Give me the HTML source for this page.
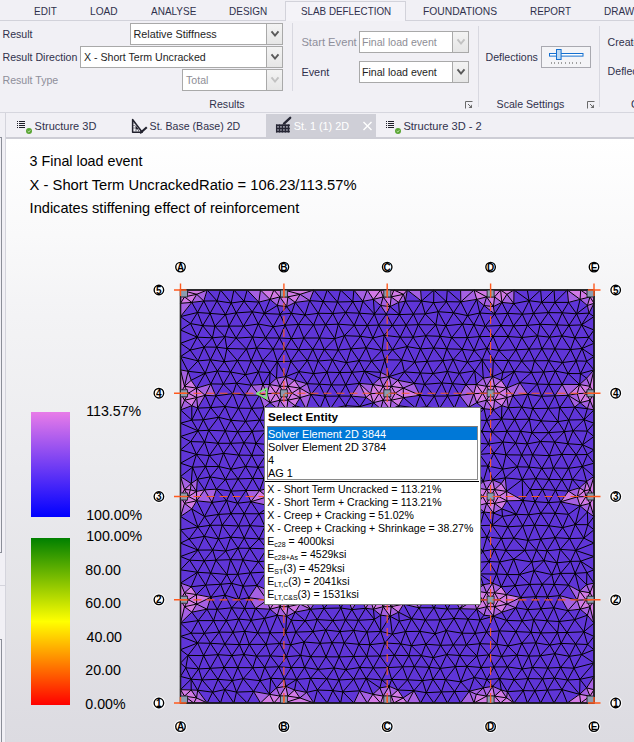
<!DOCTYPE html>
<html><head><meta charset="utf-8"><style>
html,body{margin:0;padding:0}
body{width:634px;height:742px;overflow:hidden;position:relative;background:#f1f0f5;font-family:"Liberation Sans",sans-serif}
.a{position:absolute}
.t{position:absolute;white-space:nowrap}
sub{font-size:7px;vertical-align:baseline;position:relative;top:2px}
</style></head><body>
<div class="a" style="left:0px;top:20px;width:634px;height:1px;background:#d2d2da"></div>
<div class="a" style="left:285px;top:1px;width:121px;height:20px;background:#f4f3f8;border:1px solid #d2d2da;border-bottom:none;box-sizing:border-box"></div>
<div class="t " style="left:33.50px;top:5.02px;font-size:11.20px;line-height:13px;color:#30304c;transform:scaleX(0.893);transform-origin:0 0;">EDIT</div>
<div class="t " style="left:89.90px;top:5.02px;font-size:11.20px;line-height:13px;color:#30304c;transform:scaleX(0.906);transform-origin:0 0;">LOAD</div>
<div class="t " style="left:151.40px;top:5.02px;font-size:11.20px;line-height:13px;color:#30304c;transform:scaleX(0.893);transform-origin:0 0;">ANALYSE</div>
<div class="t " style="left:229.20px;top:5.02px;font-size:11.20px;line-height:13px;color:#30304c;transform:scaleX(0.893);transform-origin:0 0;">DESIGN</div>
<div class="t " style="left:300.60px;top:5.02px;font-size:11.20px;line-height:13px;color:#30304c;transform:scaleX(0.879);transform-origin:0 0;">SLAB DEFLECTION</div>
<div class="t " style="left:423.00px;top:5.02px;font-size:11.20px;line-height:13px;color:#30304c;transform:scaleX(0.920);transform-origin:0 0;">FOUNDATIONS</div>
<div class="t " style="left:530.30px;top:5.02px;font-size:11.20px;line-height:13px;color:#30304c;transform:scaleX(0.884);transform-origin:0 0;">REPORT</div>
<div class="t " style="left:604.30px;top:5.02px;font-size:11.20px;line-height:13px;color:#30304c;transform:scaleX(0.893);transform-origin:0 0;">DRAW</div>
<div class="a" style="left:0px;top:112px;width:634px;height:1px;background:#d6d6de"></div>
<div class="t " style="left:2.50px;top:27.73px;font-size:10.60px;line-height:13px;color:#30304c;">Result</div>
<div class="t " style="left:2.50px;top:50.73px;font-size:10.60px;line-height:13px;color:#30304c;">Result Direction</div>
<div class="t " style="left:2.50px;top:73.73px;font-size:10.60px;line-height:13px;color:#8e8e9a;">Result Type</div>
<div class="a" style="left:130px;top:23px;width:153px;height:22px;background:#fff;border:1px solid #a9a9a9;box-sizing:border-box"></div><div class="a" style="left:266px;top:23px;width:17px;height:22px;background:linear-gradient(#f3f3f3,#e6e6e6);border:1px solid #a9a9a9;box-sizing:border-box"></div><svg class="a" style="left:269.5px;top:30.0px" width="10" height="8" viewBox="0 0 10 8"><path d="M1.5 1.3 L5 5.6 L8.5 1.3" fill="none" stroke="#5a5a5a" stroke-width="1.9"/></svg><div class="t " style="left:133.50px;top:28.16px;font-size:10.80px;line-height:13px;color:#1e1e1e;">Relative Stiffness</div>
<div class="a" style="left:80px;top:46px;width:203px;height:22px;background:#fff;border:1px solid #a9a9a9;box-sizing:border-box"></div><div class="a" style="left:266px;top:46px;width:17px;height:22px;background:linear-gradient(#f3f3f3,#e6e6e6);border:1px solid #a9a9a9;box-sizing:border-box"></div><svg class="a" style="left:269.5px;top:53.0px" width="10" height="8" viewBox="0 0 10 8"><path d="M1.5 1.3 L5 5.6 L8.5 1.3" fill="none" stroke="#5a5a5a" stroke-width="1.9"/></svg><div class="t " style="left:84.00px;top:51.23px;font-size:10.60px;line-height:13px;color:#1e1e1e;">X - Short Term Uncracked</div>
<div class="a" style="left:182px;top:69px;width:101px;height:22px;background:#fff;border:1px solid #a9a9a9;box-sizing:border-box"></div><div class="a" style="left:266px;top:69px;width:17px;height:22px;background:linear-gradient(#f3f3f3,#e6e6e6);border:1px solid #a9a9a9;box-sizing:border-box"></div><svg class="a" style="left:269.5px;top:76.0px" width="10" height="8" viewBox="0 0 10 8"><path d="M1.5 1.3 L5 5.6 L8.5 1.3" fill="none" stroke="#c2c2c2" stroke-width="1.9"/></svg><div class="t " style="left:186.00px;top:74.23px;font-size:10.60px;line-height:13px;color:#8e8e96;">Total</div>
<div class="a" style="left:292px;top:23px;width:1px;height:68px;background:#d8d8e0"></div>
<div class="t " style="left:209.30px;top:97.83px;font-size:10.60px;line-height:13px;color:#30304c;">Results</div>
<div class="t " style="left:301.40px;top:36.02px;font-size:11.20px;line-height:13px;color:#8e8e9a;">Start Event</div>
<div class="t " style="left:301.40px;top:66.02px;font-size:10.90px;line-height:13px;color:#30304c;">Event</div>
<div class="a" style="left:359px;top:31px;width:110px;height:22px;background:#fff;border:1px solid #a9a9a9;box-sizing:border-box"></div><div class="a" style="left:452px;top:31px;width:17px;height:22px;background:linear-gradient(#f3f3f3,#e6e6e6);border:1px solid #a9a9a9;box-sizing:border-box"></div><svg class="a" style="left:455.5px;top:38.0px" width="10" height="8" viewBox="0 0 10 8"><path d="M1.5 1.3 L5 5.6 L8.5 1.3" fill="none" stroke="#c2c2c2" stroke-width="1.9"/></svg><div class="t " style="left:362.00px;top:36.23px;font-size:10.60px;line-height:13px;color:#8e8e96;">Final load event</div>
<div class="a" style="left:359px;top:61px;width:110px;height:22px;background:#fff;border:1px solid #a9a9a9;box-sizing:border-box"></div><div class="a" style="left:452px;top:61px;width:17px;height:22px;background:linear-gradient(#f3f3f3,#e6e6e6);border:1px solid #a9a9a9;box-sizing:border-box"></div><svg class="a" style="left:455.5px;top:68.0px" width="10" height="8" viewBox="0 0 10 8"><path d="M1.5 1.3 L5 5.6 L8.5 1.3" fill="none" stroke="#5a5a5a" stroke-width="1.9"/></svg><div class="t " style="left:362.00px;top:66.23px;font-size:10.60px;line-height:13px;color:#1e1e1e;">Final load event</div>
<svg class="a" style="left:465px;top:101px" width="8" height="8" viewBox="0 0 8 8"><path d="M0.5 7.5V0.5H7.5" fill="none" stroke="#6a6a6a" stroke-width="1"/><path d="M3 3L5.5 5.5" stroke="#6a6a6a" stroke-width="1"/><path d="M7 3.5V7H3.5Z" fill="#6a6a6a"/></svg>
<div class="a" style="left:478px;top:26px;width:1px;height:81px;background:#d8d8e0"></div>
<div class="t " style="left:485.50px;top:51.23px;font-size:10.60px;line-height:13px;color:#30304c;">Deflections</div>
<div class="a" style="left:541px;top:46px;width:50px;height:22px;border:1px solid #a9a9b0;box-sizing:border-box;background:#f4f4f7"></div>
<svg class="a" style="left:541px;top:46px" width="50" height="22" viewBox="0 0 50 22"><rect x="8.5" y="7.5" width="33.5" height="2.6" fill="#fff" stroke="#1570d0" stroke-width="1"/><rect x="15.5" y="3.5" width="4.6" height="10" fill="#bcd8f2" stroke="#1570d0" stroke-width="1"/><path d="M10.5 16v2M13.5 16v2M17.5 16v2M20.5 16v2M24.5 16v2M28.5 16v2M31.5 16v2M35.5 16v2M39.5 16v2" stroke="#a0a0a0" stroke-width="1"/></svg>
<div class="t " style="left:496.60px;top:97.83px;font-size:10.60px;line-height:13px;color:#30304c;">Scale Settings</div>
<svg class="a" style="left:587px;top:101px" width="8" height="8" viewBox="0 0 8 8"><path d="M0.5 7.5V0.5H7.5" fill="none" stroke="#6a6a6a" stroke-width="1"/><path d="M3 3L5.5 5.5" stroke="#6a6a6a" stroke-width="1"/><path d="M7 3.5V7H3.5Z" fill="#6a6a6a"/></svg>
<div class="a" style="left:599px;top:26px;width:1px;height:81px;background:#d8d8e0"></div>
<div class="t " style="left:607.60px;top:35.73px;font-size:10.60px;line-height:13px;color:#30304c;">Create</div>
<div class="t " style="left:607.60px;top:65.43px;font-size:10.60px;line-height:13px;color:#30304c;">Deflections</div>
<div class="t " style="left:631.00px;top:97.83px;font-size:10.60px;line-height:13px;color:#30304c;">Charts</div>
<div class="a" style="left:0px;top:137px;width:634px;height:2px;background:#cdcdd5"></div>
<div class="a" style="left:266px;top:114px;width:110px;height:23px;background:#cfcfd7"></div>
<svg class="a" style="left:17px;top:121px" width="16" height="14" viewBox="0 0 16 14"><path d="M0 0.5h1M0 2.5h1M0 4.5h1M0 6.5h1M2 0.5h6M2 2.5h6M2 4.5h6M2 6.5h6" stroke="#1e1e28" stroke-width="1"/><circle cx="12" cy="10" r="3" fill="#5aa535"/><path d="M10.7 10.1l1 0.9 1.6-1.7" stroke="#d8f0c8" stroke-width="0.9" fill="none"/></svg>
<div class="t " style="left:34.60px;top:119.69px;font-size:11.00px;line-height:13px;color:#30304c;">Structure 3D</div>
<svg class="a" style="left:128px;top:115px" width="22" height="21" viewBox="0 0 22 21"><path d="M4.6 4.5V17.3H14.2Z" fill="none" stroke="#22222e" stroke-width="1.5" stroke-linejoin="round"/><path d="M7.5 10.2V14.5H11Z" fill="#22222e"/><path d="M5.5 8h1M5.5 10.5h1M5.5 13h1M8 16.3v-1M10.5 16.3v-1" stroke="#22222e" stroke-width="0.9"/><path d="M12 18.2L18.8 12.2" stroke="#22222e" stroke-width="2.2"/></svg>
<div class="t " style="left:149.60px;top:119.83px;font-size:10.60px;line-height:13px;color:#30304c;">St. Base (Base) 2D</div>
<svg class="a" style="left:270px;top:114px" width="25" height="22" viewBox="0 0 25 22"><rect x="6" y="10.5" width="13.8" height="8" fill="#9a9aa6"/><path d="M6 11.2h13.8M6 14.4h13.8M6 17.5h13.8" stroke="#262634" stroke-width="1.5"/><path d="M6.6 10.5v8M9.5 10.5v8M12.4 10.5v8M15.4 10.5v8M18.4 10.5v8" stroke="#262634" stroke-width="1.3"/><path d="M14 9.6L20.2 3.8" stroke="#262634" stroke-width="2.3" stroke-linecap="round"/></svg>
<div class="t " style="left:293.80px;top:119.76px;font-size:10.80px;line-height:13px;color:#ffffff;">St. 1 (1) 2D</div>
<svg class="a" style="left:362px;top:121px" width="11" height="10" viewBox="0 0 11 10"><path d="M1.5 1L9.5 9M9.5 1L1.5 9" stroke="#fff" stroke-width="1.4"/></svg>
<svg class="a" style="left:386px;top:121px" width="16" height="14" viewBox="0 0 16 14"><path d="M0 0.5h1M0 2.5h1M0 4.5h1M0 6.5h1M2 0.5h6M2 2.5h6M2 4.5h6M2 6.5h6" stroke="#1e1e28" stroke-width="1"/><circle cx="12" cy="10" r="3" fill="#5aa535"/><path d="M10.7 10.1l1 0.9 1.6-1.7" stroke="#d8f0c8" stroke-width="0.9" fill="none"/></svg>
<div class="t " style="left:403.40px;top:119.65px;font-size:11.10px;line-height:13px;color:#30304c;">Structure 3D - 2</div>
<div class="a" style="left:0px;top:113px;width:6px;height:629px;background:#f1f0f5"></div>
<div class="a" style="left:5px;top:113px;width:1px;height:629px;background:#d4d4dc"></div>
<div class="a" style="left:0px;top:137px;width:2px;height:416px;border-right:1px solid #8b8e98;border-bottom:1px solid #8b8e98;border-top:1px solid #8b8e98;box-sizing:border-box"></div>
<div class="a" style="left:0px;top:585px;width:5px;height:1px;background:#d4d4dc"></div>
<div class="a" style="left:0px;top:639px;width:2px;height:103px;border-right:1px solid #8b8e98;border-top:1px solid #8b8e98;box-sizing:border-box"></div>
<div class="a" style="left:6px;top:139px;width:628px;height:603px;background:linear-gradient(#ffffff 0px,#f9f9fa 96px,#f3f3f5 176px,#ebebee 331px,#dcdbe1 603px)"></div>
<div class="t " style="left:29.60px;top:152.85px;font-size:14.30px;line-height:17px;color:#000;">3 Final load event</div>
<div class="t " style="left:29.60px;top:176.29px;font-size:14.75px;line-height:18px;color:#000;">X - Short Term UncrackedRatio = 106.23/113.57%</div>
<div class="t " style="left:29.60px;top:199.04px;font-size:14.60px;line-height:18px;color:#000;">Indicates stiffening effect of reinforcement</div>
<div class="a" style="left:31px;top:412px;width:39px;height:105px;background:linear-gradient(#e87ce8,#0000ff)"></div>
<div class="a" style="left:31px;top:538px;width:39px;height:167px;background:linear-gradient(#008000 0%,#ffff00 50%,#ff8000 75%,#ff0000 100%)"></div>
<div class="t " style="left:86.20px;top:402.58px;font-size:14.20px;line-height:17px;color:#000;">113.57%</div>
<div class="t " style="left:86.20px;top:507.48px;font-size:14.20px;line-height:17px;color:#000;">100.00%</div>
<div class="t " style="left:86.20px;top:528.38px;font-size:14.20px;line-height:17px;color:#000;">100.00%</div>
<div class="t " style="left:85.30px;top:562.18px;font-size:14.20px;line-height:17px;color:#000;">80.00</div>
<div class="t " style="left:85.30px;top:594.58px;font-size:14.20px;line-height:17px;color:#000;">60.00</div>
<div class="t " style="left:86.50px;top:629.18px;font-size:14.20px;line-height:17px;color:#000;">40.00</div>
<div class="t " style="left:85.30px;top:662.48px;font-size:14.20px;line-height:17px;color:#000;">20.00</div>
<div class="t " style="left:85.30px;top:695.78px;font-size:14.20px;line-height:17px;color:#000;">0.00%</div>
<svg class="a" style="left:0;top:0" width="634" height="742"><path fill="#5f35d7" stroke="#5f35d7" stroke-width="0.3" d="M419.4 559.5L406.2 561.8L412.6 550.2ZM358.3 620.3L353.8 630.5L345.4 619.9ZM334.4 596L319 596.4L324.4 585.3ZM594 623.1L583.9 631.8L587.4 615.2ZM554.6 442L549.4 455.7L540.4 441.5ZM549.4 455.7L554.6 442L561.8 454.4ZM180.5 436.5L180.5 423.2L198 430.8ZM252.2 431.3L245.5 421.3L259.6 420.1ZM245.5 421.3L251.7 408.3L259.6 420.1ZM515.6 443.1L521.6 455L506 454.8ZM413.3 456.1L406.1 467.3L400.6 454.5ZM502.6 469.1L505.3 477.9L492.6 479.8ZM487.9 466L502.6 469.1L492.6 479.8ZM428 503.5L433.3 489L439.4 501.5ZM433.3 489L428 503.5L420.2 490.6ZM476.3 487.8L461.1 489.9L470.3 478ZM393.7 467.7L406.1 467.3L397.9 483.5ZM386.5 454.6L393.7 467.7L378.4 466.9ZM406.1 467.3L393.7 467.7L400.6 454.5ZM393.7 467.7L386.5 454.6L400.6 454.5ZM372 479.1L378.4 466.9L379.9 481.4ZM373.8 433.5L381 418.4L386.1 431.3ZM381 418.4L373.8 433.5L365.9 420.5ZM420.6 290L433.9 290L421.5 301.1ZM529.1 300.7L540.6 290L541.7 302.3ZM514 290L529.1 300.7L513.8 303.6ZM420.5 348.9L427.2 361.3L414.8 362.2ZM453.1 359.6L467.4 362.1L459.4 373.3ZM420.5 348.9L433.7 348L427.2 361.3ZM345.6 312.6L352.8 301.6L359.4 313.2ZM392.4 325.4L400.2 337.2L384.2 335.3ZM374.4 314.2L367.4 325.4L359.4 313.2ZM295.2 405.7L300.1 397.6L306.1 409.1ZM332.8 313.5L345.6 312.6L338.3 324.2ZM318.3 313.3L305 315L309.7 300.6ZM305 315L318.3 313.3L313.6 324.9ZM265.6 337.9L258.3 324L273.2 326.7ZM236.5 383.2L230.6 372L245.5 374.7ZM210.4 359.8L217.4 371L205.2 373.2ZM230.6 372L237.4 360.6L245.5 374.7ZM180.5 569.8L189.6 560.2L197.5 572.3ZM180.5 583.1L180.5 569.8L197.5 572.3ZM180.5 476.5L180.5 463.2L192.5 467.2ZM252.2 431.3L237.7 431.8L245.5 421.3ZM225.2 430.9L237.7 431.8L230.7 443.3ZM196.4 454.4L180.5 463.2L180.5 449.9ZM180.5 463.2L196.4 454.4L192.5 467.2ZM209.3 455.6L196.4 454.4L204.6 442ZM180.5 529.8L180.5 516.5L197.9 527ZM359.6 690.8L353.7 679.1L366.2 678.6ZM359.8 667.5L373.3 667.9L366.2 678.6ZM353.7 679.1L359.8 667.5L366.2 678.6ZM388.2 667.6L373.3 667.9L379.9 656ZM388.2 667.6L402.6 666.8L391.7 679.4ZM372.9 694.3L359.6 690.8L366.2 678.6ZM397.9 690L389.2 686.3L391.7 679.4ZM419.8 631.3L425.8 644.2L411.4 645.7ZM394.4 655.3L388.2 667.6L379.9 656ZM388.2 667.6L394.4 655.3L402.6 666.8ZM411.5 618.8L419 607.8L425.2 620ZM419.8 631.3L411.5 618.8L425.2 620ZM332.8 690.6L326.8 678.8L339 680ZM318.1 669.4L310.5 678.3L304.6 667.5ZM318.1 669.4L326.8 678.8L310.5 678.3ZM296.6 679.4L310.5 678.3L306.6 692.4ZM310.5 678.3L296.6 679.4L304.6 667.5ZM239.4 644.6L243.8 654.6L231.9 655.6ZM320.2 408.2L311.9 419.8L306.1 409.1ZM325.9 421L320.2 408.2L330.4 408.9ZM320.2 408.2L325.9 421L311.9 419.8ZM317.7 572.2L330.8 574.5L324.4 585.3ZM330.8 574.5L339 585.9L324.4 585.3ZM339 585.9L334.4 596L324.4 585.3ZM347 595.6L340.9 608L334.4 596ZM347 595.6L339 585.9L356.1 585.8ZM339 585.9L347 595.6L334.4 596ZM196.4 454.4L205.6 466.6L192.5 467.2ZM205.6 466.6L196.4 454.4L209.3 455.6ZM216.4 489.2L226.6 500.6L212 502.4ZM540.6 290L554 290L541.7 302.3ZM579.6 694.3L567.3 703L562 689.6ZM577.2 600.2L559.6 595.6L568.4 585.1ZM594 636.4L583.9 631.8L594 623.1ZM515.6 443.1L527.3 443.9L521.6 455ZM532.6 454.8L549.4 455.7L541.8 468.4ZM527.3 443.9L532.6 454.8L521.6 455ZM549.4 455.7L532.6 454.8L540.4 441.5ZM532.6 454.8L527.3 443.9L540.4 441.5ZM582.5 444.8L594 436.5L594 449.9ZM587.4 454.5L582.5 444.8L594 449.9ZM532.7 408.5L527.7 394.3L541.7 396.3ZM532.7 408.5L541.1 420.9L529.3 419.2ZM531.4 372.4L519.8 382.7L514.2 371.6ZM180.5 423.2L191.8 420.1L198 430.8ZM180.5 409.9L191.8 420.1L180.5 423.2ZM191.8 420.1L180.5 409.9L191.8 405.7ZM258.4 371.9L251.3 385.2L245.5 374.7ZM251.3 385.2L236.5 383.2L245.5 374.7ZM238.5 408.2L225.1 406.5L232.9 393.6ZM238.5 408.2L251.7 408.3L245.5 421.3ZM389.2 479.8L393.7 467.7L397.9 483.5ZM378.4 466.9L389.2 479.8L379.9 481.4ZM393.7 467.7L389.2 479.8L378.4 466.9ZM428 503.5L414.9 501.4L420.2 490.6ZM414.9 501.4L428 503.5L419.1 512.1ZM380.7 512L390.1 513.1L385.7 526.2ZM428 503.5L432.7 512.4L419.1 512.1ZM447.1 515.2L432.7 512.4L439.4 501.5ZM432.7 512.4L428 503.5L439.4 501.5ZM406.1 467.3L413.4 478.3L397.9 483.5ZM403.2 491.4L413.4 478.3L420.2 490.6ZM413.4 478.3L403.2 491.4L397.9 483.5ZM405.8 418.4L415.4 407.9L421.5 420.2ZM467.1 432L473.3 442.9L462.6 441.6ZM473 420L467.1 432L462.1 419ZM483.3 481.4L487.9 466L492.6 479.8ZM483.3 481.4L476.3 487.8L470.3 478ZM487.9 466L475 466L479.6 454.3ZM459.4 466.8L475 466L470.3 478ZM475 466L483.3 481.4L470.3 478ZM483.3 481.4L475 466L487.9 466ZM433.3 489L446.8 488.6L439.4 501.5ZM446.8 488.6L433.3 489L440.7 479.6ZM473.3 442.9L466.7 455.2L462.6 441.6ZM466.7 455.2L473.3 442.9L479.6 454.3ZM475 466L466.7 455.2L479.6 454.3ZM466.7 455.2L475 466L459.4 466.8ZM367.9 514.2L373.4 505.9L380.7 512ZM353.6 513.2L367.9 514.2L359.3 524.3ZM372.8 454.5L386.5 454.6L378.4 466.9ZM372.9 487.8L372 479.1L379.9 481.4ZM359.9 479.4L372.9 487.8L365.6 492.4ZM372.9 487.8L359.9 479.4L372 479.1ZM339.1 421.1L325.9 421L330.4 408.9ZM325.9 421L339.1 421.1L330.3 430.7ZM351.4 419.6L359.9 406.6L365.9 420.5ZM360.6 431.5L351.4 419.6L365.9 420.5ZM360.6 431.5L373.8 433.5L369.1 443.3ZM373.8 433.5L360.6 431.5L365.9 420.5ZM379.3 443.9L373.8 433.5L386.1 431.3ZM373.8 433.5L379.3 443.9L369.1 443.3ZM379.3 443.9L372.8 454.5L369.1 443.3ZM372.8 454.5L379.3 443.9L386.5 454.6ZM447.3 290L460.6 290L460.8 301.9ZM467.6 315.6L453.5 312.8L460.8 301.9ZM529.1 300.7L527.3 290L540.6 290ZM527.3 290L529.1 300.7L514 290ZM400.2 337.2L392.5 349.7L384.2 335.3ZM447.4 371.5L441.8 383L433.1 373.5ZM447.4 371.5L453.1 359.6L459.4 373.3ZM427.2 361.3L420.4 373L414.8 362.2ZM433.1 373.5L420.4 373L427.2 361.3ZM407.1 346.6L400.2 337.2L413.1 337.2ZM420.5 348.9L407.1 346.6L413.1 337.2ZM407.1 346.6L392.5 349.7L400.2 337.2ZM407.1 346.6L420.5 348.9L414.8 362.2ZM462.2 349.3L451.7 337.7L467.3 337.6ZM474.1 350.4L462.2 349.3L467.3 337.6ZM462.2 349.3L467.4 362.1L453.1 359.6ZM462.2 349.3L474.1 350.4L467.4 362.1ZM445.8 325.7L451.7 337.7L440.2 336.3ZM445.8 325.7L438.2 311.7L453.5 312.8ZM433.7 348L442.9 360.6L427.2 361.3ZM447.4 371.5L442.9 360.6L453.1 359.6ZM442.9 360.6L433.1 373.5L427.2 361.3ZM442.9 360.6L447.4 371.5L433.1 373.5ZM425.8 335.8L420.5 348.9L413.1 337.2ZM425.8 335.8L433.7 348L420.5 348.9ZM433.7 348L425.8 335.8L440.2 336.3ZM418.3 324.7L425.8 335.8L413.1 337.2ZM353.9 290L352.8 301.6L340.6 290ZM373.4 299.4L380.7 305.5L374.4 314.2ZM380.7 305.5L386.3 314.2L374.4 314.2ZM362.9 301.3L374.4 314.2L359.4 313.2ZM362.9 301.3L373.4 299.4L374.4 314.2ZM352.8 301.6L362.9 301.3L359.4 313.2ZM353.9 290L362.9 301.3L352.8 301.6ZM312.8 349.2L324.3 349.5L318.1 361ZM307.4 360.5L312.8 349.2L318.1 361ZM312.8 349.2L319.5 338L324.3 349.5ZM324.3 349.5L332.4 359.9L318.1 361ZM332.4 359.9L346.5 362.6L339.8 372.5ZM367.4 325.4L354.3 325.3L359.4 313.2ZM354.3 325.3L367.4 325.4L360.4 336.3ZM344.4 335.7L354.3 325.3L360.4 336.3ZM354.3 325.3L345.6 312.6L359.4 313.2ZM345.6 312.6L354.3 325.3L338.3 324.2ZM354.3 325.3L344.4 335.7L338.3 324.2ZM366.1 347.8L371.5 361.1L359 360.6ZM372.9 338L366.1 347.8L360.4 336.3ZM367.4 325.4L372.9 338L360.4 336.3ZM298.8 371.6L307.3 383.7L294.5 380.3ZM330.4 408.9L325.1 396.2L339 396.1ZM320.2 408.2L325.1 396.2L330.4 408.9ZM332.4 359.9L327 372.2L318.1 361ZM327 372.2L332.4 359.9L339.8 372.5ZM332.8 313.5L337.5 302L345.6 312.6ZM352.8 301.6L337.5 302L340.6 290ZM337.5 302L352.8 301.6L345.6 312.6ZM298.4 324.5L305 315L313.6 324.9ZM298.4 324.5L285 325.2L291.4 313.3ZM305 315L298.4 324.5L291.4 313.3ZM198 360.9L210.4 359.8L205.2 373.2ZM190.5 323.6L180.5 330L180.5 316.6ZM180.5 330L197.2 337.2L180.5 343.3ZM197.2 337.2L180.5 330L190.5 323.6ZM220.5 290L217 300.9L207.2 290ZM244 301.2L231.2 303L233.9 290ZM231.2 303L244 301.2L236.2 312.9ZM231.2 303L220.5 290L233.9 290ZM220.5 290L231.2 303L217 300.9ZM247.2 290L244 301.2L233.9 290ZM244 301.2L247.2 290L258.8 302.1ZM280 314.2L285 325.2L273.2 326.7ZM285 325.2L280 314.2L291.4 313.3ZM280 314.2L264.3 313.5L277.3 305.5ZM258.3 324L264.3 313.5L273.2 326.7ZM264.3 313.5L280 314.2L273.2 326.7ZM252.2 311.8L244 301.2L258.8 302.1ZM264.3 313.5L252.2 311.8L258.8 302.1ZM252.2 311.8L264.3 313.5L258.3 324ZM244 301.2L252.2 311.8L236.2 312.9ZM228.9 326.1L243.5 326.1L236.1 338.1ZM243.5 326.1L228.9 326.1L236.2 312.9ZM252.2 311.8L243.5 326.1L236.2 312.9ZM243.5 326.1L252.2 311.8L258.3 324ZM251.1 360.9L258.4 371.9L245.5 374.7ZM237.4 360.6L251.1 360.9L245.5 374.7ZM298.3 561.1L294.1 550.5L305.2 549.4ZM249.8 548.3L242.9 559.9L238.1 548.2ZM242.9 559.9L249.8 548.3L258.4 561.8ZM244.7 608.4L251.2 620.3L238.7 619.1ZM180.5 556.5L189.6 560.2L180.5 569.8ZM189.6 560.2L204.2 560.8L197.5 572.3ZM180.5 516.5L191.8 508.9L197.9 527ZM208.7 430.3L204.6 442L198 430.8ZM225.1 406.5L218.6 417.3L210.7 407.6ZM208.7 430.3L218.6 417.3L225.2 430.9ZM180.5 436.5L190.7 441.6L180.5 449.9ZM190.7 441.6L196.4 454.4L180.5 449.9ZM196.4 454.4L190.7 441.6L204.6 442ZM204.6 442L190.7 441.6L198 430.8ZM190.7 441.6L180.5 436.5L198 430.8ZM180.5 529.8L189.1 539L180.5 543.1ZM189.1 539L180.5 529.8L197.9 527ZM210.2 525.3L204.4 536.4L197.9 527ZM218.5 538.9L204.4 536.4L210.2 525.3ZM204.4 536.4L189.1 539L197.9 527ZM345.8 669.6L353.7 679.1L339 680ZM345.8 669.6L359.8 667.5L353.7 679.1ZM345.8 669.6L339.1 656.9L353.7 656.5ZM359.8 667.5L345.8 669.6L353.7 656.5ZM358.9 644.3L344.2 642.9L353.8 630.5ZM339.1 656.9L344.2 642.9L353.7 656.5ZM344.2 642.9L358.9 644.3L353.7 656.5ZM310.7 656.7L318.1 669.4L304.6 667.5ZM318.1 669.4L310.7 656.7L326 656.8ZM342.8 691.9L332.8 690.6L339 680ZM332.8 690.6L342.8 691.9L340.6 703ZM353.7 679.1L342.8 691.9L339 680ZM359.6 690.8L342.8 691.9L353.7 679.1ZM342.8 691.9L353.9 703L340.6 703ZM353.9 703L342.8 691.9L359.6 690.8ZM420.6 703L426.3 692.7L433.9 703ZM426.3 692.7L413.9 690.7L422.5 680.6ZM420.6 703L413.9 690.7L426.3 692.7ZM373.3 667.9L381.9 680L366.2 678.6ZM389.2 686.3L381.9 680L391.7 679.4ZM381.9 680L388.2 667.6L391.7 679.4ZM388.2 667.6L381.9 680L373.3 667.9ZM412.8 571.6L406.2 561.8L419.4 559.5ZM426.3 692.7L441.5 691.9L433.9 703ZM435.2 633.8L419.8 631.3L425.2 620ZM435.2 633.8L425.8 644.2L419.8 631.3ZM414.3 666.7L429.2 667.3L422.5 680.6ZM440.3 668.4L429.2 667.3L433.3 657.6ZM408.9 655.7L414.3 666.7L402.6 666.8ZM394.4 655.3L408.9 655.7L402.6 666.8ZM408.9 655.7L400.8 643.9L411.4 645.7ZM400.8 643.9L408.9 655.7L394.4 655.3ZM493.4 616.3L480 620L484 615.2ZM527.3 703L514 703L523.3 690.6ZM534.9 690.9L547.4 690.1L540.6 703ZM527.3 703L534.9 690.9L540.6 703ZM534.9 690.9L527.3 703L523.3 690.6ZM547.4 690.1L554 703L540.6 703ZM567.3 703L554 703L562 689.6ZM554 703L547.4 690.1L562 689.6ZM358.9 644.3L366.8 656.2L353.7 656.5ZM373.3 667.9L366.8 656.2L379.9 656ZM366.8 656.2L359.8 667.5L353.7 656.5ZM359.8 667.5L366.8 656.2L373.3 667.9ZM260.5 703L247.2 703L253.6 691.5ZM236.5 692.1L247.2 703L233.9 703ZM247.2 703L236.5 692.1L253.6 691.5ZM224.8 644.1L239.4 644.6L231.9 655.6ZM310.6 609.2L324 608.4L317.2 619.6ZM324 608.4L310.6 609.2L319 596.4ZM334.4 596L324 608.4L319 596.4ZM340.9 608L324 608.4L334.4 596ZM299.9 594.6L313 584.5L319 596.4ZM319 596.4L313 584.5L324.4 585.3ZM313 584.5L317.7 572.2L324.4 585.3ZM317.7 572.2L313 584.5L304.4 573.4ZM327.2 703L332.8 690.6L340.6 703ZM310.5 678.3L317.4 690L306.6 692.4ZM326.8 678.8L317.4 690L310.5 678.3ZM317.4 690L326.8 678.8L332.8 690.6ZM317.4 690L313.9 703L306.6 692.4ZM317.4 690L327.2 703L313.9 703ZM327.2 703L317.4 690L332.8 690.6ZM296.6 679.4L285.8 686.3L284.3 678.9ZM185.8 667.8L191.1 679.2L180.5 676.4ZM191.1 679.2L180.5 689.7L180.5 676.4ZM180.5 689.7L191.1 679.2L191.2 690ZM197.7 690.2L191.1 679.2L202.1 679.9ZM191.1 679.2L197.7 690.2L191.2 690ZM191.1 633.2L180.5 623.1L198.2 620.6ZM204.3 633.3L191.1 633.2L198.2 620.6ZM180.5 663L185.8 667.8L180.5 676.4ZM191.1 679.2L198.7 668.9L202.1 679.9ZM198.7 668.9L191.1 679.2L185.8 667.8ZM236.5 692.1L243.2 678.7L253.6 691.5ZM243.2 678.7L236.5 692.1L232.4 680.5ZM224.7 689.6L236.5 692.1L233.9 703ZM236.5 692.1L224.7 689.6L232.4 680.5ZM251.2 620.3L244.7 631.4L238.7 619.1ZM318.6 432.2L325.9 421L330.3 430.7ZM325.9 421L318.6 432.2L311.9 419.8ZM298.3 561.1L314.3 561.1L304.4 573.4ZM314.3 561.1L317.7 572.2L304.4 573.4ZM314.3 561.1L298.3 561.1L305.2 549.4ZM358.4 573.8L366.1 584.8L356.1 585.8ZM366.1 584.8L358.4 573.8L372.4 573.9ZM353.5 538L345.8 526L359.3 524.3ZM345.8 526L353.6 513.2L359.3 524.3ZM353.6 513.2L345.8 526L339 513.9ZM337.9 539.1L345.8 526L353.5 538ZM406.2 561.8L397.8 550.6L412.6 550.2ZM367.3 538.8L353.5 538L359.3 524.3ZM365.6 608.3L374.4 619.4L358.3 620.3ZM367 632L353.8 630.5L358.3 620.3ZM374.4 619.4L367 632L358.3 620.3ZM367 632L358.9 644.3L353.8 630.5ZM360.3 596.7L347 595.6L356.1 585.8ZM366.1 584.8L360.3 596.7L356.1 585.8ZM372.9 591L360.3 596.7L366.1 584.8ZM218 443.3L209.3 455.6L204.6 442ZM218 443.3L223.5 453.4L209.3 455.6ZM208.7 430.3L218 443.3L204.6 442ZM218 443.3L208.7 430.3L225.2 430.9ZM218 443.3L225.2 430.9L230.7 443.3ZM223.5 453.4L218 443.3L230.7 443.3ZM226.6 500.6L218.6 514.4L212 502.4ZM586.7 361.2L594 356.6L594 369.9ZM586.7 361.2L580.5 373.6L576.1 360.9ZM580.5 373.6L586.7 361.2L594 369.9ZM580.5 373.6L586.6 378.2L579.6 384.5ZM586.6 378.2L580.5 373.6L594 369.9ZM554.9 349L548.6 360.7L541.9 348.8ZM587.4 305.5L589 313.1L576.6 313.8ZM589 313.1L581.6 324.9L576.6 313.8ZM581.6 324.9L589 313.1L594 316.6ZM589 313.1L594 303.3L594 316.6ZM594 330L581.6 324.9L594 316.6ZM581.6 324.9L569 325.4L576.6 313.8ZM554 290L554.9 302.4L541.7 302.3ZM554.9 302.4L554 290L567.3 290ZM594 663L594 676.4L580 679.3ZM507.4 574.5L519.4 574.6L515.2 585.7ZM557 562.8L544 560.6L547.1 550.8ZM594 516.5L594 529.8L587.8 524.7ZM548.5 502.6L540.8 513.2L534.9 501.7ZM540.8 513.2L548.5 502.6L555.2 513.3ZM544 560.6L536.5 550.1L547.1 550.8ZM536.5 550.1L544 560.6L531.8 562ZM519.4 574.6L513.7 559.1L531.8 562ZM513.7 559.1L519.4 574.6L507.4 574.5ZM492.1 525.2L487 537L480.2 525.7ZM482.7 551.2L487 537L494.4 549.4ZM487 537L501.4 538.5L494.4 549.4ZM501.4 538.5L487 537L492.1 525.2ZM484 512L492.1 525.2L480.2 525.7ZM522.2 479.5L506.6 491.4L505.3 477.9ZM522.9 500.5L506.6 491.4L522.2 479.5ZM561.8 479.7L568.5 491.1L555.5 490.3ZM549 479.4L561.8 479.7L555.5 490.3ZM520.6 431.3L527.3 443.9L515.6 443.1ZM594 436.5L587.3 431.1L594 423.2ZM587.3 431.1L594 436.5L582.5 444.8ZM573 430.8L587.3 431.1L582.5 444.8ZM554.6 442L567.8 443.7L561.8 454.4ZM567.8 443.7L573 430.8L582.5 444.8ZM594 463.2L587.4 454.5L594 449.9ZM594 463.2L594 476.5L582.4 466.4ZM587.4 454.5L594 463.2L582.4 466.4ZM576.2 454.7L587.4 454.5L582.4 466.4ZM576.2 454.7L568.6 468.3L561.8 454.4ZM568.6 468.3L576.2 454.7L582.4 466.4ZM587.4 454.5L576.2 454.7L582.5 444.8ZM567.8 443.7L576.2 454.7L561.8 454.4ZM576.2 454.7L567.8 443.7L582.5 444.8ZM521.8 407.1L532.7 408.5L529.3 419.2ZM532.7 408.5L521.8 407.1L527.7 394.3ZM521.7 361.1L531.4 372.4L514.2 371.6ZM537.3 384.1L531.4 372.4L543.7 372ZM527.7 394.3L537.3 384.1L541.7 396.3ZM519.8 382.7L537.3 384.1L527.7 394.3ZM537.3 384.1L519.8 382.7L531.4 372.4ZM506.6 388.1L501.3 380.3L514.2 371.6ZM519.8 382.7L506.6 388.1L514.2 371.6ZM501.3 380.3L502.9 372.3L514.2 371.6ZM558 421.6L548.7 432.6L541.1 420.9ZM548.7 432.6L554.6 442L540.4 441.5ZM564.4 431.6L567.8 443.7L554.6 442ZM567.8 443.7L564.4 431.6L573 430.8ZM548.7 432.6L564.4 431.6L554.6 442ZM564.4 431.6L548.7 432.6L558 421.6ZM573 430.8L564.4 431.6L568.7 420ZM564.4 431.6L558 421.6L568.7 420ZM558 421.6L559.7 407.7L568.7 420ZM427.1 547.2L419.4 559.5L412.6 550.2ZM427.1 547.2L433.3 562.1L419.4 559.5ZM461.7 586.4L465.5 572.5L473.8 585.7ZM473.2 538.5L487 537L482.7 551.2ZM473.2 538.5L465.6 526.2L480.2 525.7ZM487 537L473.2 538.5L480.2 525.7ZM196.5 388.1L191.2 380.3L205.2 373.2ZM197.7 408.1L205.2 395.3L210.7 407.6ZM197.7 408.1L191.8 420.1L191.8 405.7ZM217.4 371L210.8 383.9L205.2 373.2ZM210.8 383.9L196.5 388.1L205.2 373.2ZM238.8 455.1L223.5 453.4L230.7 443.3ZM238.8 455.1L230.9 469.3L223.5 453.4ZM230.9 469.3L238.8 455.1L245.6 466.5ZM245.3 395.2L238.5 408.2L232.9 393.6ZM238.5 408.2L245.3 395.2L251.7 408.3ZM236.5 383.2L245.3 395.2L232.9 393.6ZM251.3 385.2L245.3 395.2L236.5 383.2ZM521.6 455L517.3 466.8L506 454.8ZM517.3 466.8L502.6 469.1L506 454.8ZM502.6 469.1L517.3 466.8L505.3 477.9ZM517.3 466.8L522.2 479.5L505.3 477.9ZM468.7 407.3L473 420L462.1 419ZM420.4 373L404.4 371.9L414.8 362.2ZM404.4 371.9L420.4 373L414.2 383.4ZM412.7 526.8L405.7 515.2L419.1 512.1ZM405.7 515.2L414.9 501.4L419.1 512.1ZM414.9 501.4L405.7 515.2L403.5 500.8ZM433.3 489L426.3 479.8L440.7 479.6ZM426.3 479.8L433.3 489L420.2 490.6ZM413.4 478.3L426.3 479.8L420.2 490.6ZM419.8 467.1L406.1 467.3L413.3 456.1ZM419.8 467.1L413.4 478.3L406.1 467.3ZM419.8 467.1L426.3 479.8L413.4 478.3ZM391.9 420.1L381 418.4L390.1 409.8ZM381 418.4L391.9 420.1L386.1 431.3ZM391.9 420.1L401.5 432L386.1 431.3ZM401.5 432L391.9 420.1L405.8 418.4ZM447.5 396L439.5 408.4L434.4 396.1ZM441.8 383L447.5 396L434.4 396.1ZM415.4 407.9L426.6 406.9L421.5 420.2ZM439.5 408.4L426.6 406.9L434.4 396.1ZM426.6 406.9L420 395.3L434.4 396.1ZM420 395.3L426.6 406.9L415.4 407.9ZM481.8 431.3L467.1 432L473 420ZM467.1 432L481.8 431.3L473.3 442.9ZM488.5 444L481.8 431.3L492.2 431.9ZM473.3 442.9L488.5 444L479.6 454.3ZM481.8 431.3L488.5 444L473.3 442.9ZM446.8 488.6L453.7 500.9L439.4 501.5ZM453.7 500.9L446.8 488.6L461.1 489.9ZM453.7 500.9L447.1 515.2L439.4 501.5ZM453.7 500.9L461.5 513L447.1 515.2ZM461.5 513L453.7 500.9L469.3 500.2ZM446.8 488.6L455.4 479.3L461.1 489.9ZM461.1 489.9L455.4 479.3L470.3 478ZM455.4 479.3L459.4 466.8L470.3 478ZM455.4 479.3L447.1 467.8L459.4 466.8ZM455.4 479.3L446.8 488.6L440.7 479.6ZM447.1 467.8L455.4 479.3L440.7 479.6ZM461.5 513L473.1 515.8L465.6 526.2ZM465.6 526.2L473.1 515.8L480.2 525.7ZM476.7 505.9L473.1 515.8L469.3 500.2ZM473.1 515.8L461.5 513L469.3 500.2ZM473.1 515.8L484 512L480.2 525.7ZM484 512L473.1 515.8L476.7 505.9ZM454.9 454.2L466.7 455.2L459.4 466.8ZM447.1 467.8L454.9 454.2L459.4 466.8ZM466.7 455.2L454.9 454.2L462.6 441.6ZM372 479.1L366.3 468.6L378.4 466.9ZM359.9 479.4L366.3 468.6L372 479.1ZM366.3 468.6L372.8 454.5L378.4 466.9ZM353.1 491L359.9 479.4L365.6 492.4ZM345.4 433.9L339.1 421.1L351.4 419.6ZM360.6 431.5L345.4 433.9L351.4 419.6ZM345.4 433.9L338.6 443.3L330.3 430.7ZM339.1 421.1L345.4 433.9L330.3 430.7ZM359.9 406.6L373.4 402.7L365.9 420.5ZM345.7 405.7L359.9 406.6L351.4 419.6ZM339.1 421.1L345.7 405.7L351.4 419.6ZM345.7 405.7L330.4 408.9L339 396.1ZM345.7 405.7L339.1 421.1L330.4 408.9ZM493.1 336.4L485.3 326.1L501.1 325.5ZM451.7 337.7L462.5 324.1L467.3 337.6ZM445.8 325.7L462.5 324.1L451.7 337.7ZM467.6 315.6L462.5 324.1L453.5 312.8ZM462.5 324.1L445.8 325.7L453.5 312.8ZM485.3 326.1L473.9 324.8L479.8 313ZM473.9 324.8L467.6 315.6L479.8 313ZM473.9 324.8L462.5 324.1L467.6 315.6ZM462.5 324.1L473.9 324.8L467.3 337.6ZM554.9 302.4L548.4 312.6L541.7 302.3ZM529.1 300.7L522.3 314.1L513.8 303.6ZM522.3 314.1L507.6 313.4L513.8 303.6ZM508.1 336.5L493.1 336.4L501.1 325.5ZM399.4 314.6L386.3 314.2L390.1 306.6ZM386.3 314.2L399.4 314.6L392.4 325.4ZM447.3 290L446.4 301.7L433.9 290ZM438.2 311.7L446.4 301.7L453.5 312.8ZM453.5 312.8L446.4 301.7L460.8 301.9ZM446.4 301.7L447.3 290L460.8 301.9ZM420.4 373L424.5 384.3L414.2 383.4ZM424.5 384.3L420.4 373L433.1 373.5ZM424.5 384.3L420 395.3L414.2 383.4ZM420 395.3L424.5 384.3L434.4 396.1ZM424.5 384.3L441.8 383L434.4 396.1ZM441.8 383L424.5 384.3L433.1 373.5ZM474.1 350.4L482.1 359.9L467.4 362.1ZM446.8 348.8L442.9 360.6L433.7 348ZM451.7 337.7L446.8 348.8L440.2 336.3ZM446.8 348.8L433.7 348L440.2 336.3ZM442.9 360.6L446.8 348.8L453.1 359.6ZM446.8 348.8L462.2 349.3L453.1 359.6ZM462.2 349.3L446.8 348.8L451.7 337.7ZM435.8 324.8L418.3 324.7L425.2 313.9ZM435.8 324.8L425.8 335.8L418.3 324.7ZM438.2 311.7L435.8 324.8L425.2 313.9ZM445.8 325.7L435.8 324.8L438.2 311.7ZM435.8 324.8L445.8 325.7L440.2 336.3ZM425.8 335.8L435.8 324.8L440.2 336.3ZM386.3 314.2L378.7 325.1L374.4 314.2ZM378.7 325.1L367.4 325.4L374.4 314.2ZM378.7 325.1L392.4 325.4L384.2 335.3ZM378.7 325.1L386.3 314.2L392.4 325.4ZM372.9 338L378.7 325.1L384.2 335.3ZM378.7 325.1L372.9 338L367.4 325.4ZM325.6 324.7L319.5 338L313.6 324.9ZM325.6 324.7L332.8 313.5L338.3 324.2ZM318.3 313.3L325.6 324.7L313.6 324.9ZM332.8 313.5L325.6 324.7L318.3 313.3ZM366.1 397.4L373.4 402.7L359.9 406.6ZM352.1 372.3L346.5 362.6L359 360.6ZM352.1 372.3L345.7 384.9L339.8 372.5ZM346.5 362.6L352.1 372.3L339.8 372.5ZM346.5 362.6L351 348.9L359 360.6ZM351 348.9L366.1 347.8L359 360.6ZM366.1 347.8L351 348.9L360.4 336.3ZM351 348.9L344.4 335.7L360.4 336.3ZM380.7 372.4L371.5 361.1L384.8 359.8ZM389.2 376.6L380.7 372.4L384.8 359.8ZM372.9 338L381.9 350.3L366.1 347.8ZM371.5 361.1L381.9 350.3L384.8 359.8ZM381.9 350.3L371.5 361.1L366.1 347.8ZM381.9 350.3L392.5 349.7L384.8 359.8ZM392.5 349.7L381.9 350.3L384.2 335.3ZM381.9 350.3L372.9 338L384.2 335.3ZM313.6 373.6L298.8 371.6L307.4 360.5ZM298.8 371.6L313.6 373.6L307.3 383.7ZM313.6 373.6L307.4 360.5L318.1 361ZM327 372.2L313.6 373.6L318.1 361ZM311 394.5L325.1 396.2L320.2 408.2ZM311 394.5L320.2 408.2L306.1 409.1ZM295.2 302.4L305 315L291.4 313.3ZM305 315L295.2 302.4L309.7 300.6ZM270 299.4L264.3 313.5L258.8 302.1ZM264.3 313.5L270 299.4L277.3 305.5ZM298.8 371.6L290.9 361.3L307.4 360.5ZM312.8 349.2L303.8 338L319.5 338ZM319.5 338L303.8 338L313.6 324.9ZM303.8 338L298.4 324.5L313.6 324.9ZM279.5 338L265.6 337.9L273.2 326.7ZM285 325.2L279.5 338L273.2 326.7ZM262.8 360.6L251.1 360.9L256.6 348.1ZM262.8 360.6L270.1 372.5L258.4 371.9ZM251.1 360.9L262.8 360.6L258.4 371.9ZM337.5 302L327.2 290L340.6 290ZM214.9 326.2L224.9 336.7L212.4 337.8ZM224.9 336.7L214.9 326.2L228.9 326.1ZM224.9 336.7L216.7 347.2L212.4 337.8ZM216.7 347.2L224.9 336.7L226.9 348.5ZM224.9 336.7L228.9 326.1L236.1 338.1ZM226.9 348.5L224.9 336.7L236.1 338.1ZM224.3 361.6L217.4 371L210.4 359.8ZM216.7 347.2L224.3 361.6L210.4 359.8ZM224.3 361.6L216.7 347.2L226.9 348.5ZM217.4 371L224.3 361.6L230.6 372ZM224.3 361.6L237.4 360.6L230.6 372ZM224.3 361.6L226.9 348.5L237.4 360.6ZM198 360.9L204.1 347L210.4 359.8ZM204.1 347L216.7 347.2L210.4 359.8ZM204.1 347L197.2 337.2L212.4 337.8ZM216.7 347.2L204.1 347L212.4 337.8ZM225.5 314.6L231.2 303L236.2 312.9ZM228.9 326.1L225.5 314.6L236.2 312.9ZM217 300.9L225.5 314.6L210.1 313.4ZM231.2 303L225.5 314.6L217 300.9ZM225.5 314.6L214.9 326.2L210.1 313.4ZM214.9 326.2L225.5 314.6L228.9 326.1ZM203.8 301L217 300.9L210.1 313.4ZM217 300.9L203.8 301L207.2 290ZM197.2 337.2L202.7 325.7L212.4 337.8ZM202.7 325.7L214.9 326.2L212.4 337.8ZM202.7 325.7L197.2 337.2L190.5 323.6ZM214.9 326.2L202.7 325.7L210.1 313.4ZM243.5 326.1L252.6 337.1L236.1 338.1ZM252.6 337.1L243.5 326.1L258.3 324ZM252.6 337.1L265.6 337.9L256.6 348.1ZM252.6 337.1L258.3 324L265.6 337.9ZM251.1 360.9L246.4 349L256.6 348.1ZM246.4 349L251.1 360.9L237.4 360.6ZM252.6 337.1L246.4 349L236.1 338.1ZM246.4 349L252.6 337.1L256.6 348.1ZM246.4 349L226.9 348.5L236.1 338.1ZM226.9 348.5L246.4 349L237.4 360.6ZM292 574.7L298.3 561.1L304.4 573.4ZM292 574.7L285.8 583.1L278 572ZM294.1 550.5L296.6 537.7L305.2 549.4ZM266.1 572.1L274.2 560L278 572ZM274.2 560L266.1 572.1L258.4 561.8ZM274.2 560L266.9 548.8L280 550.1ZM249.8 548.3L266.9 548.8L258.4 561.8ZM266.9 548.8L274.2 560L258.4 561.8ZM230.5 559.7L225.8 551L238.1 548.2ZM242.9 559.9L230.5 559.7L238.1 548.2ZM215.9 560.2L230.5 559.7L226.9 574.4ZM225.8 551L230.5 559.7L215.9 560.2ZM250.4 572.9L242.9 559.9L258.4 561.8ZM266.1 572.1L250.4 572.9L258.4 561.8ZM226.3 620.7L213.6 620.6L217.2 609.3ZM213.6 620.6L226.3 620.7L219.2 632.1ZM213.6 620.6L207 609.2L217.2 609.3ZM207 609.2L213.6 620.6L198.2 620.6ZM213.6 620.6L204.3 633.3L198.2 620.6ZM204.3 633.3L213.6 620.6L219.2 632.1ZM226.3 620.7L231.7 607.8L238.7 619.1ZM231.7 607.8L244.7 608.4L238.7 619.1ZM244.7 608.4L231.7 607.8L238.9 599.5ZM231.7 607.8L226.3 620.7L217.2 609.3ZM224.9 595.2L231.7 607.8L217.2 609.3ZM231.7 607.8L224.9 595.2L238.9 599.5ZM244.7 608.4L255.5 608.4L251.2 620.3ZM204.4 536.4L198 550.1L189.1 539ZM198 550.1L204.2 560.8L189.6 560.2ZM189.1 539L198 550.1L180.5 543.1ZM198 550.1L180.5 556.5L180.5 543.1ZM180.5 556.5L198 550.1L189.6 560.2ZM205.7 585.1L210.8 597.3L196.5 594.6ZM210.8 597.3L224.9 595.2L217.2 609.3ZM207 609.2L210.8 597.3L217.2 609.3ZM210.8 597.3L220.7 584.3L224.9 595.2ZM220.7 584.3L210.8 597.3L205.7 585.1ZM204.6 489.8L210.2 476.9L216.4 489.2ZM218.6 514.4L204.5 516.5L212 502.4ZM204.5 516.5L218.6 514.4L210.2 525.3ZM204.5 516.5L210.2 525.3L197.9 527ZM191.8 508.9L204.5 516.5L197.9 527ZM238.5 408.2L231 420.3L225.1 406.5ZM231 420.3L218.6 417.3L225.1 406.5ZM218.6 417.3L231 420.3L225.2 430.9ZM225.2 430.9L231 420.3L237.7 431.8ZM237.7 431.8L231 420.3L245.5 421.3ZM231 420.3L238.5 408.2L245.5 421.3ZM345.8 669.6L334.1 668L339.1 656.9ZM339.1 656.9L334.1 668L326 656.8ZM326.8 678.8L334.1 668L339 680ZM334.1 668L345.8 669.6L339 680ZM334.1 668L318.1 669.4L326 656.8ZM318.1 669.4L334.1 668L326.8 678.8ZM332 642.7L339.1 656.9L326 656.8ZM332 642.7L344.2 642.9L339.1 656.9ZM407.6 679.8L413.9 690.7L397.9 690ZM402.6 666.8L407.6 679.8L391.7 679.4ZM407.6 679.8L397.9 690L391.7 679.4ZM414.3 666.7L407.6 679.8L402.6 666.8ZM407.6 679.8L414.3 666.7L422.5 680.6ZM413.9 690.7L407.6 679.8L422.5 680.6ZM517 655.2L522.1 669L507.4 666.9ZM522.1 669L514.1 679.7L507.4 666.9ZM501.6 656.4L517 655.2L507.4 666.9ZM493.9 667L501.6 656.4L507.4 666.9ZM501.6 656.4L493.9 667L488.8 654.9ZM413.9 690.7L403.2 697.9L397.9 690ZM433.3 562.1L426.3 571.9L419.4 559.5ZM426.3 571.9L412.8 571.6L419.4 559.5ZM397.9 586.8L400.7 572.7L406.1 585.7ZM400.7 572.7L412.8 571.6L406.1 585.7ZM412.8 571.6L400.7 572.7L406.2 561.8ZM434 607.8L440.8 596L447.3 609ZM419 607.8L434 607.8L425.2 620ZM432.9 679.3L440.3 668.4L445.5 679.6ZM441.5 691.9L432.9 679.3L445.5 679.6ZM429.2 667.3L432.9 679.3L422.5 680.6ZM432.9 679.3L429.2 667.3L440.3 668.4ZM432.9 679.3L426.3 692.7L422.5 680.6ZM432.9 679.3L441.5 691.9L426.3 692.7ZM446.7 654.6L440.3 668.4L433.3 657.6ZM441.5 691.9L447.3 703L433.9 703ZM469.3 691.2L454.6 691.6L460.8 681.9ZM454.6 691.6L469.3 691.2L460.6 703ZM454.6 691.6L445.5 679.6L460.8 681.9ZM454.6 691.6L441.5 691.9L445.5 679.6ZM447.3 703L454.6 691.6L460.6 703ZM454.6 691.6L447.3 703L441.5 691.9ZM440 619.9L447.3 609L454 618.5ZM440 619.9L434 607.8L447.3 609ZM440 619.9L435.2 633.8L425.2 620ZM434 607.8L440 619.9L425.2 620ZM425.8 644.2L421.4 655.7L411.4 645.7ZM421.4 655.7L408.9 655.7L411.4 645.7ZM421.4 655.7L425.8 644.2L433.3 657.6ZM408.9 655.7L421.4 655.7L414.3 666.7ZM429.2 667.3L421.4 655.7L433.3 657.6ZM421.4 655.7L429.2 667.3L414.3 666.7ZM447.3 609L459.7 608.7L454 618.5ZM531.1 632.3L533.6 619.7L540.8 632.9ZM531.1 632.3L521.8 643.3L515.9 631.6ZM533.6 619.7L547.2 620.8L540.8 632.9ZM547.2 620.8L533.6 619.7L541 608.8ZM553.8 607.8L547.2 620.8L541 608.8ZM547.2 620.8L553.8 607.8L559.2 621.5ZM533.6 619.7L527.8 609.6L541 608.8ZM534.9 690.9L542.6 678.9L547.4 690.1ZM405.5 631.6L411.5 618.8L419.8 631.3ZM405.5 631.6L399.3 621.1L411.5 618.8ZM405.5 631.6L419.8 631.3L411.4 645.7ZM400.8 643.9L405.5 631.6L411.4 645.7ZM291.2 667.6L296.6 679.4L284.3 678.9ZM278.8 666.8L291.2 667.6L284.3 678.9ZM291.2 667.6L278.8 666.8L286.5 656.7ZM296.6 679.4L291.2 667.6L304.6 667.5ZM294.5 690L296.6 679.4L306.6 692.4ZM294.5 690L285.8 686.3L296.6 679.4ZM278.8 666.8L270.7 678.3L264.7 667.3ZM270.7 678.3L278.8 666.8L284.3 678.9ZM224.1 667.5L218 654.7L231.9 655.6ZM218 654.7L224.8 644.1L231.9 655.6ZM210.4 643.3L204.3 633.3L219.2 632.1ZM224.8 644.1L210.4 643.3L219.2 632.1ZM218 654.7L210.4 643.3L224.8 644.1ZM210.4 643.3L218 654.7L203.6 655.6ZM191.1 633.2L180.5 636.4L180.5 623.1ZM180.5 636.4L197.6 643L180.5 649.7ZM197.6 643L180.5 636.4L191.1 633.2ZM197.6 643L191.1 633.2L204.3 633.3ZM197.6 643L210.4 643.3L203.6 655.6ZM210.4 643.3L197.6 643L204.3 633.3ZM188 655.4L180.5 663L180.5 649.7ZM197.6 643L188 655.4L180.5 649.7ZM188 655.4L197.6 643L203.6 655.6ZM180.5 663L188 655.4L185.8 667.8ZM198.7 668.9L188 655.4L203.6 655.6ZM188 655.4L198.7 668.9L185.8 667.8ZM237.8 667.6L224.1 667.5L231.9 655.6ZM243.8 654.6L237.8 667.6L231.9 655.6ZM224.1 667.5L237.8 667.6L232.4 680.5ZM237.8 667.6L243.2 678.7L232.4 680.5ZM252.8 667.7L237.8 667.6L243.8 654.6ZM243.2 678.7L237.8 667.6L252.8 667.7ZM220.5 703L224.7 689.6L233.9 703ZM218 679.3L224.1 667.5L232.4 680.5ZM224.7 689.6L218 679.3L232.4 680.5ZM249.3 644.4L243.8 654.6L239.4 644.6ZM244.7 631.4L249.3 644.4L239.4 644.6ZM226.3 620.7L233 632.3L219.2 632.1ZM233 632.3L224.8 644.1L219.2 632.1ZM233 632.3L226.3 620.7L238.7 619.1ZM244.7 631.4L233 632.3L238.7 619.1ZM224.8 644.1L233 632.3L239.4 644.6ZM233 632.3L244.7 631.4L239.4 644.6ZM284.4 419.8L272 420.5L277.3 408.7ZM272 420.5L284.4 419.8L277.9 430.7ZM319 549.8L314.3 561.1L305.2 549.4ZM339 585.9L348.9 573.6L356.1 585.8ZM348.9 573.6L358.4 573.8L356.1 585.8ZM339.6 561.7L348.9 573.6L330.8 574.5ZM348.9 573.6L339 585.9L330.8 574.5ZM348 548.1L337.9 539.1L353.5 538ZM348 548.1L339.6 561.7L331.7 549.6ZM337.9 539.1L348 548.1L331.7 549.6ZM400.7 526.8L405.7 515.2L412.7 526.8ZM390.1 513.1L400.7 526.8L385.7 526.2ZM405.7 515.2L400.7 526.8L390.1 513.1ZM397.8 550.6L405.3 538L412.6 550.2ZM405.3 538L400.7 526.8L412.7 526.8ZM358.4 573.8L366.8 561.9L372.4 573.9ZM351.9 609.6L365.6 608.3L358.3 620.3ZM351.9 609.6L358.3 620.3L345.4 619.9ZM340.9 608L351.9 609.6L345.4 619.9ZM351.9 609.6L360.3 596.7L365.6 608.3ZM347 595.6L351.9 609.6L340.9 608ZM365.6 608.3L373.4 609.2L374.4 619.4ZM373.4 609.2L380.7 615.2L374.4 619.4ZM366.8 656.2L369.9 644.7L379.9 656ZM369.9 644.7L366.8 656.2L358.9 644.3ZM367 632L369.9 644.7L358.9 644.3ZM326.1 514.3L331.5 503.2L339 513.9ZM222.2 525.2L218.5 538.9L210.2 525.3ZM218.6 514.4L222.2 525.2L210.2 525.3ZM559.7 407.7L574.6 407.2L568.7 420ZM574.6 407.2L559.7 407.7L568.1 395.3ZM548.6 360.7L555.3 371.1L543.7 372ZM568.5 302.4L554.9 302.4L567.3 290ZM588.8 337.3L594 330L594 343.3ZM594 330L588.8 337.3L581.6 324.9ZM575.6 644L581.6 654.6L569.4 656.3ZM594 663L581.6 654.6L594 649.7ZM557.5 632.6L549.8 645.1L540.8 632.9ZM547.2 620.8L557.5 632.6L540.8 632.9ZM557.5 632.6L547.2 620.8L559.2 621.5ZM567.6 680L579.6 694.3L562 689.6ZM579.6 694.3L567.6 680L580 679.3ZM549.8 645.1L554.8 653.7L540.3 655.8ZM560.6 667.5L554.8 653.7L569.4 656.3ZM501.3 586.8L496.6 574L507.4 574.5ZM506.6 594.6L501.3 586.8L515.2 585.7ZM501.3 586.8L507.4 574.5L515.2 585.7ZM465.5 572.5L479.6 573.9L473.8 585.7ZM479.6 573.9L483.3 584.7L473.8 585.7ZM580.6 561.2L594 556.5L594 569.8ZM586.9 572.6L580.6 561.2L594 569.8ZM594 583.1L586.9 572.6L594 569.8ZM586.9 572.6L594 583.1L586.6 584.7ZM583.8 538.1L594 529.8L594 543.1ZM594 529.8L583.8 538.1L587.8 524.7ZM575.7 550.4L580.6 561.2L570.6 561.4ZM583.8 538.1L575.7 550.4L569.6 538.6ZM575.7 550.4L594 556.5L580.6 561.2ZM594 556.5L575.7 550.4L594 543.1ZM575.7 550.4L583.8 538.1L594 543.1ZM555.1 537.7L562.7 527.6L569.6 538.6ZM560.5 573.4L557 562.8L570.6 561.4ZM567 632.5L557.5 632.6L559.2 621.5ZM575.6 644L567 632.5L583.9 631.8ZM567.9 610.6L553.8 607.8L559.6 595.6ZM553.8 607.8L567.9 610.6L559.2 621.5ZM534.6 525.2L528 540.4L522.7 525.9ZM524.9 550.3L536.5 550.1L531.8 562ZM536.5 550.1L524.9 550.3L528 540.4ZM513.7 559.1L524.9 550.3L531.8 562ZM496.6 574L499.6 562L507.4 574.5ZM499.6 562L513.7 559.1L507.4 574.5ZM507.8 526.8L501.4 538.5L492.1 525.2ZM502.5 516.4L507.8 526.8L492.1 525.2ZM501.4 538.5L505.8 550.4L494.4 549.4ZM505.8 550.4L499.6 562L494.4 549.4ZM499.6 562L505.8 550.4L513.7 559.1ZM505.8 550.4L524.9 550.3L513.7 559.1ZM528.6 514.8L534.6 525.2L522.7 525.9ZM534.6 525.2L528.6 514.8L540.8 513.2ZM540.8 513.2L528.6 514.8L534.9 501.7ZM528.6 514.8L522.9 500.5L534.9 501.7ZM484 512L493.4 513.1L492.1 525.2ZM493.4 513.1L502.5 516.4L492.1 525.2ZM493.4 513.1L501.9 508.9L502.5 516.4ZM548.5 502.6L560.7 501.8L555.2 513.3ZM560.7 501.8L548.5 502.6L555.5 490.3ZM568.5 491.1L560.7 501.8L555.5 490.3ZM553.4 468L568.6 468.3L561.8 479.7ZM549 479.4L553.4 468L561.8 479.7ZM553.4 468L549.4 455.7L561.8 454.4ZM568.6 468.3L553.4 468L561.8 454.4ZM549.4 455.7L553.4 468L541.8 468.4ZM553.4 468L549 479.4L541.8 468.4ZM522.9 500.5L530.2 489.6L534.9 501.7ZM530.2 489.6L522.9 500.5L522.2 479.5ZM531.9 432.7L520.6 431.3L529.3 419.2ZM541.1 420.9L531.9 432.7L529.3 419.2ZM527.3 443.9L531.9 432.7L540.4 441.5ZM520.6 431.3L531.9 432.7L527.3 443.9ZM531.9 432.7L548.7 432.6L540.4 441.5ZM548.7 432.6L531.9 432.7L541.1 420.9ZM502.9 442L488.5 444L492.2 431.9ZM502.9 442L515.6 443.1L506 454.8ZM506.9 431.3L502.9 442L492.2 431.9ZM506.9 431.3L520.6 431.3L515.6 443.1ZM502.9 442L506.9 431.3L515.6 443.1ZM584.1 419.7L573 430.8L568.7 420ZM584.1 419.7L587.3 431.1L573 430.8ZM574.6 407.2L584.1 419.7L568.7 420ZM584.1 419.7L574.6 407.2L587.4 408.7ZM587.3 431.1L584.1 419.7L594 423.2ZM584.1 419.7L594 409.9L594 423.2ZM594 409.9L584.1 419.7L587.4 408.7ZM521.8 407.1L514.7 419.5L508.4 407.7ZM506.9 431.3L514.7 419.5L520.6 431.3ZM520.6 431.3L514.7 419.5L529.3 419.2ZM514.7 419.5L521.8 407.1L529.3 419.2ZM521.7 361.1L534.5 360.8L531.4 372.4ZM548.6 360.7L534.5 360.8L541.9 348.8ZM534.5 360.8L548.6 360.7L543.7 372ZM531.4 372.4L534.5 360.8L543.7 372ZM548.7 384.4L537.3 384.1L543.7 372ZM555.3 371.1L548.7 384.4L543.7 372ZM548.7 384.4L555.3 371.1L562.1 384.4ZM537.3 384.1L548.7 384.4L541.7 396.3ZM502.9 372.3L508.3 360.6L514.2 371.6ZM508.3 360.6L521.7 361.1L514.2 371.6ZM521.7 361.1L508.3 360.6L515.9 349.8ZM508.3 360.6L502.9 372.3L493.3 360.3ZM502.9 372.3L492.6 376.6L493.3 360.3ZM492.6 376.6L482.1 359.9L493.3 360.3ZM482.1 359.9L492.6 376.6L483.3 378.2ZM492.6 376.6L502.9 372.3L501.3 380.3ZM548.3 408.3L532.7 408.5L541.7 396.3ZM532.7 408.5L548.3 408.3L541.1 420.9ZM548.3 408.3L558 421.6L541.1 420.9ZM548.3 408.3L559.7 407.7L558 421.6ZM428.4 527L412.7 526.8L419.1 512.1ZM432.7 512.4L428.4 527L419.1 512.1ZM464 560.4L449.2 559.4L455.9 549.9ZM427.1 547.2L439.4 549.8L433.3 562.1ZM439.4 549.8L449.2 559.4L433.3 562.1ZM449.2 559.4L439.4 549.8L455.9 549.9ZM439.4 549.8L446.5 536.7L455.9 549.9ZM454 573.6L461.7 586.4L447.8 586.6ZM461.7 586.4L454 573.6L465.5 572.5ZM454 573.6L464 560.4L465.5 572.5ZM464 560.4L454 573.6L449.2 559.4ZM446.5 536.7L460.9 538.2L455.9 549.9ZM473.2 538.5L460.9 538.2L465.6 526.2ZM188.1 371.3L198 360.9L205.2 373.2ZM191.2 380.3L188.1 371.3L205.2 373.2ZM180.5 356.6L188.1 371.3L180.5 369.9ZM188.1 371.3L180.5 356.6L198 360.9ZM197.7 408.1L203.3 419.8L191.8 420.1ZM191.8 420.1L203.3 419.8L198 430.8ZM203.3 419.8L208.7 430.3L198 430.8ZM203.3 419.8L197.7 408.1L210.7 407.6ZM218.6 417.3L203.3 419.8L210.7 407.6ZM203.3 419.8L218.6 417.3L208.7 430.3ZM223.3 384.1L236.5 383.2L232.9 393.6ZM236.5 383.2L223.3 384.1L230.6 372ZM223.3 384.1L217.4 371L230.6 372ZM223.3 384.1L210.8 383.9L217.4 371ZM265.5 430.8L252.2 431.3L259.6 420.1ZM272 420.5L265.5 430.8L259.6 420.1ZM265.5 430.8L272 420.5L277.9 430.7ZM274 445.2L277.9 430.7L286.8 444ZM274 445.2L265.5 430.8L277.9 430.7ZM265.5 430.8L255.9 443.4L252.2 431.3ZM255.9 443.4L274 445.2L265.7 455.2ZM274 445.2L255.9 443.4L265.5 430.8ZM231.1 491.1L226.6 500.6L216.4 489.2ZM258 467.3L252.7 478.4L245.6 466.5ZM251.7 408.3L264 407.8L259.6 420.1ZM264 407.8L272 420.5L259.6 420.1ZM272 420.5L264 407.8L277.3 408.7ZM532.6 454.8L529.1 467.1L521.6 455ZM529.1 467.1L517.3 466.8L521.6 455ZM529.1 467.1L532.6 454.8L541.8 468.4ZM517.3 466.8L529.1 467.1L522.2 479.5ZM392.5 349.7L401.5 360L384.8 359.8ZM401.5 360L389.2 376.6L384.8 359.8ZM401.5 360L404.4 371.9L389.2 376.6ZM404.4 371.9L401.5 360L414.8 362.2ZM401.5 360L407.1 346.6L414.8 362.2ZM407.1 346.6L401.5 360L392.5 349.7ZM403.5 397.6L420 395.3L415.4 407.9ZM397.9 380.3L404.4 371.9L414.2 383.4ZM404.4 371.9L397.9 380.3L389.2 376.6ZM398.6 508.9L405.7 515.2L390.1 513.1ZM405.7 515.2L398.6 508.9L403.5 500.8ZM386.5 454.6L394 442.4L400.6 454.5ZM401.5 432L394 442.4L386.1 431.3ZM394 442.4L379.3 443.9L386.1 431.3ZM379.3 443.9L394 442.4L386.5 454.6ZM451.2 432.2L467.1 432L462.6 441.6ZM467.1 432L451.2 432.2L462.1 419ZM451.2 432.2L448.5 419.6L462.1 419ZM448.5 419.6L434.3 419.4L439.5 408.4ZM426.6 406.9L434.3 419.4L421.5 420.2ZM434.3 419.4L426.6 406.9L439.5 408.4ZM447.5 396L452.5 383.7L459.7 395.3ZM452.5 383.7L447.5 396L441.8 383ZM452.5 383.7L465.9 384.7L459.7 395.3ZM465.9 384.7L452.5 383.7L459.4 373.3ZM452.5 383.7L447.4 371.5L459.4 373.3ZM447.4 371.5L452.5 383.7L441.8 383ZM454.4 408.1L447.5 396L459.7 395.3ZM448.5 419.6L454.4 408.1L462.1 419ZM454.4 408.1L448.5 419.6L439.5 408.4ZM447.5 396L454.4 408.1L439.5 408.4ZM454.4 408.1L468.7 407.3L462.1 419ZM468.7 407.3L454.4 408.1L459.7 395.3ZM502.6 469.1L493.8 453.3L506 454.8ZM487.9 466L493.8 453.3L502.6 469.1ZM493.8 453.3L502.9 442L506 454.8ZM502.9 442L493.8 453.3L488.5 444ZM493.8 453.3L487.9 466L479.6 454.3ZM488.5 444L493.8 453.3L479.6 454.3ZM468.7 407.3L484 408.7L473 420ZM484 408.7L468.7 407.3L476.7 402.7ZM481.8 431.3L486.7 420.4L492.2 431.9ZM486.7 420.4L484 408.7L493.4 409.8ZM486.7 420.4L481.8 431.3L473 420ZM484 408.7L486.7 420.4L473 420ZM430.2 454.3L420.5 443.5L435.6 442.8ZM430.2 454.3L419.8 467.1L413.3 456.1ZM420.5 443.5L430.2 454.3L413.3 456.1ZM372.8 454.5L357.2 454.9L369.1 443.3ZM366.3 468.6L357.2 454.9L372.8 454.5ZM353.6 467.2L366.3 468.6L359.9 479.4ZM353.6 467.2L357.2 454.9L366.3 468.6ZM357.9 501L367.9 514.2L353.6 513.2ZM367.9 514.2L357.9 501L373.4 505.9ZM339.7 489.8L331.5 503.2L327 490.2ZM381 418.4L380.7 408.7L390.1 409.8ZM380.7 408.7L381 418.4L365.9 420.5ZM373.4 402.7L380.7 408.7L365.9 420.5ZM476.7 299.4L467.6 315.6L460.8 301.9ZM467.6 315.6L476.7 299.4L479.8 313ZM494.6 314L507.6 313.4L501.1 325.5ZM485.3 326.1L494.6 314L501.1 325.5ZM494.6 314L485.3 326.1L479.8 313ZM507.6 313.4L501.9 302.4L513.8 303.6ZM501.9 302.4L494.6 314L493.4 306.6ZM494.6 314L501.9 302.4L507.6 313.4ZM493.1 336.4L479.6 336.6L485.3 326.1ZM473.9 324.8L479.6 336.6L467.3 337.6ZM479.6 336.6L473.9 324.8L485.3 326.1ZM479.6 336.6L474.1 350.4L467.3 337.6ZM549.5 337.1L554.9 349L541.9 348.8ZM537.5 335.9L549.5 337.1L541.9 348.8ZM537.5 335.9L521.8 337.5L527.4 325.3ZM508.1 336.5L521.8 337.5L515.9 349.8ZM540.2 324.3L537.5 335.9L527.4 325.3ZM540.2 324.3L548.4 312.6L556.9 324.9ZM549.5 337.1L540.2 324.3L556.9 324.9ZM540.2 324.3L549.5 337.1L537.5 335.9ZM513.6 325.8L508.1 336.5L501.1 325.5ZM507.6 313.4L513.6 325.8L501.1 325.5ZM521.8 337.5L513.6 325.8L527.4 325.3ZM513.6 325.8L521.8 337.5L508.1 336.5ZM513.6 325.8L522.3 314.1L527.4 325.3ZM522.3 314.1L513.6 325.8L507.6 313.4ZM508.1 336.5L498.8 350.4L493.1 336.4ZM498.8 350.4L508.3 360.6L493.3 360.3ZM498.8 350.4L508.1 336.5L515.9 349.8ZM508.3 360.6L498.8 350.4L515.9 349.8ZM392.4 325.4L406.1 325.1L400.2 337.2ZM399.4 314.6L406.1 325.1L392.4 325.4ZM400.2 337.2L406.1 325.1L413.1 337.2ZM406.1 325.1L418.3 324.7L413.1 337.2ZM398.6 302.4L399.4 314.6L390.1 306.6ZM418.3 324.7L413.4 314.1L425.2 313.9ZM425.2 313.9L413.4 314.1L421.5 301.1ZM406.1 325.1L413.4 314.1L418.3 324.7ZM413.4 314.1L406.1 325.1L399.4 314.6ZM446.4 301.7L433.6 302.6L433.9 290ZM433.6 302.6L446.4 301.7L438.2 311.7ZM433.9 290L433.6 302.6L421.5 301.1ZM433.6 302.6L425.2 313.9L421.5 301.1ZM433.6 302.6L438.2 311.7L425.2 313.9ZM482.1 359.9L474.7 370.9L467.4 362.1ZM474.7 370.9L482.1 359.9L483.3 378.2ZM476.3 384.5L474.7 370.9L483.3 378.2ZM467.4 362.1L474.7 370.9L459.4 373.3ZM474.7 370.9L465.9 384.7L459.4 373.3ZM474.7 370.9L476.3 384.5L465.9 384.7ZM325.6 324.7L334.8 338.6L319.5 338ZM319.5 338L334.8 338.6L324.3 349.5ZM344.4 335.7L334.8 338.6L338.3 324.2ZM334.8 338.6L325.6 324.7L338.3 324.2ZM345.7 405.7L351.2 396.1L359.9 406.6ZM351.2 396.1L366.1 397.4L359.9 406.6ZM345.7 384.9L351.2 396.1L339 396.1ZM351.2 396.1L345.7 405.7L339 396.1ZM270.1 372.5L262.9 384.4L258.4 371.9ZM262.9 384.4L251.3 385.2L258.4 371.9ZM313.6 373.6L319.4 384.2L307.3 383.7ZM319.4 384.2L311 394.5L307.3 383.7ZM311 394.5L319.4 384.2L325.1 396.2ZM319.4 384.2L313.6 373.6L327 372.2ZM286.7 306.6L295.2 302.4L291.4 313.3ZM280 314.2L286.7 306.6L291.4 313.3ZM286.7 306.6L280 314.2L277.3 305.5ZM285.8 376.6L298.8 371.6L294.5 380.3ZM285.8 376.6L290.9 361.3L298.8 371.6ZM290.9 361.3L277.3 361.6L285.2 349ZM262.8 360.6L277.3 361.6L270.1 372.5ZM285.8 376.6L277.3 361.6L290.9 361.3ZM277.3 361.6L276.5 378.2L270.1 372.5ZM277.3 361.6L285.8 376.6L276.5 378.2ZM298.7 349.7L290.9 361.3L285.2 349ZM290.9 361.3L298.7 349.7L307.4 360.5ZM298.7 349.7L312.8 349.2L307.4 360.5ZM298.7 349.7L303.8 338L312.8 349.2ZM279.5 338L273.1 349.1L265.6 337.9ZM273.1 349.1L279.5 338L285.2 349ZM277.3 361.6L273.1 349.1L285.2 349ZM273.1 349.1L277.3 361.6L262.8 360.6ZM265.6 337.9L273.1 349.1L256.6 348.1ZM273.1 349.1L262.8 360.6L256.6 348.1ZM279.5 338L291.3 338.6L285.2 349ZM291.3 338.6L298.7 349.7L285.2 349ZM298.7 349.7L291.3 338.6L303.8 338ZM291.3 338.6L279.5 338L285 325.2ZM298.4 324.5L291.3 338.6L285 325.2ZM303.8 338L291.3 338.6L298.4 324.5ZM327.2 290L323.2 301.6L313.9 290ZM313.9 290L323.2 301.6L309.7 300.6ZM323.2 301.6L318.3 313.3L309.7 300.6ZM323.2 301.6L327.2 290L337.5 302ZM323.2 301.6L332.8 313.5L318.3 313.3ZM323.2 301.6L337.5 302L332.8 313.5ZM190.2 350.1L180.5 356.6L180.5 343.3ZM180.5 356.6L190.2 350.1L198 360.9ZM190.2 350.1L204.1 347L198 360.9ZM197.2 337.2L190.2 350.1L180.5 343.3ZM204.1 347L190.2 350.1L197.2 337.2ZM197.5 312.5L203.8 301L210.1 313.4ZM203.8 301L197.5 312.5L191.8 302.4ZM202.7 325.7L197.5 312.5L210.1 313.4ZM197.5 312.5L202.7 325.7L190.5 323.6ZM197.5 312.5L190.5 323.6L180.5 316.6ZM191.8 302.4L197.5 312.5L180.5 316.6ZM292 574.7L294.5 586.8L285.8 583.1ZM294.5 586.8L292 574.7L304.4 573.4ZM313 584.5L294.5 586.8L304.4 573.4ZM294.5 586.8L313 584.5L299.9 594.6ZM284.2 562.2L292 574.7L278 572ZM292 574.7L284.2 562.2L298.3 561.1ZM274.2 560L284.2 562.2L278 572ZM284.2 562.2L274.2 560L280 550.1ZM294.1 550.5L284.2 562.2L280 550.1ZM284.2 562.2L294.1 550.5L298.3 561.1ZM307.5 524L296.6 537.7L289.5 525ZM296.6 537.7L286.9 538.4L289.5 525ZM286.9 538.4L294.1 550.5L280 550.1ZM286.9 538.4L296.6 537.7L294.1 550.5ZM230.9 513.7L218.6 514.4L226.6 500.6ZM230.9 513.7L222.2 525.2L218.6 514.4ZM276.5 584.7L266.1 572.1L278 572ZM266.1 572.1L276.5 584.7L269.5 591ZM285.8 583.1L276.5 584.7L278 572ZM259 538.9L266.9 548.8L249.8 548.3ZM250.4 572.9L237.8 574.3L242.9 559.9ZM230.5 559.7L237.8 574.3L226.9 574.4ZM237.8 574.3L230.5 559.7L242.9 559.9ZM243 586.2L237.8 574.3L250.4 572.9ZM212.7 550L204.4 536.4L218.5 538.9ZM212.7 550L198 550.1L204.4 536.4ZM212.7 550L225.8 551L215.9 560.2ZM212.7 550L218.5 538.9L225.8 551ZM204.2 560.8L212.7 550L215.9 560.2ZM198 550.1L212.7 550L204.2 560.8ZM191.2 586.8L180.5 583.1L197.5 572.3ZM205.7 585.1L191.2 586.8L197.5 572.3ZM191.2 586.8L205.7 585.1L196.5 594.6ZM180.5 623.1L191.8 612.2L198.2 620.6ZM191.8 612.2L207 609.2L198.2 620.6ZM210.7 573.1L220.7 584.3L205.7 585.1ZM210.7 573.1L205.7 585.1L197.5 572.3ZM210.7 573.1L215.9 560.2L226.9 574.4ZM220.7 584.3L210.7 573.1L226.9 574.4ZM204.2 560.8L210.7 573.1L197.5 572.3ZM210.7 573.1L204.2 560.8L215.9 560.2ZM191.2 483.5L180.5 476.5L192.5 467.2ZM210.2 476.9L225.5 479.4L216.4 489.2ZM225.5 479.4L231.1 491.1L216.4 489.2ZM218.8 466.5L210.2 476.9L205.6 466.6ZM230.9 469.3L218.8 466.5L223.5 453.4ZM225.5 479.4L218.8 466.5L230.9 469.3ZM218.8 466.5L225.5 479.4L210.2 476.9ZM223.5 453.4L218.8 466.5L209.3 455.6ZM218.8 466.5L205.6 466.6L209.3 455.6ZM205.6 466.6L197.4 479.2L192.5 467.2ZM210.2 476.9L197.4 479.2L205.6 466.6ZM197.4 479.2L191.2 483.5L192.5 467.2ZM197.4 479.2L210.2 476.9L204.6 489.8ZM197.4 479.2L204.6 489.8L196.5 491.4ZM325.7 630L313 631.5L317.2 619.6ZM310.7 656.7L320.2 643.3L326 656.8ZM320.2 643.3L332 642.7L326 656.8ZM320.2 643.3L304 642L313 631.5ZM304 642L320.2 643.3L310.7 656.7ZM325.7 630L320.2 643.3L313 631.5ZM320.2 643.3L325.7 630L332 642.7ZM300.7 655.5L304 642L310.7 656.7ZM300.7 655.5L310.7 656.7L304.6 667.5ZM291.2 667.6L300.7 655.5L304.6 667.5ZM300.7 655.5L291.2 667.6L286.5 656.7ZM304 642L295.8 632.1L313 631.5ZM528.9 656.1L522.1 669L517 655.2ZM521.8 643.3L528.9 656.1L517 655.2ZM493.9 667L499.5 678.6L486.8 679.5ZM499.5 678.6L493.9 667L507.4 666.9ZM514.1 679.7L499.5 678.6L507.4 666.9ZM493.9 667L481.1 667.5L488.8 654.9ZM481.1 667.5L493.9 667L486.8 679.5ZM475.2 633.3L479.9 643.7L466.4 645ZM496.8 644.3L501.6 656.4L488.8 654.9ZM479.9 643.7L496.8 644.3L488.8 654.9ZM379.9 687.9L381.9 680L389.2 686.3ZM379.9 687.9L372.9 694.3L366.2 678.6ZM381.9 680L379.9 687.9L366.2 678.6ZM440.2 572.3L454 573.6L447.8 586.6ZM440.2 572.3L426.3 571.9L433.3 562.1ZM449.2 559.4L440.2 572.3L433.3 562.1ZM454 573.6L440.2 572.3L449.2 559.4ZM393.9 559.8L400.7 572.7L386.8 573.5ZM397.8 550.6L393.9 559.8L386.3 550.3ZM393.9 559.8L397.8 550.6L406.2 561.8ZM400.7 572.7L393.9 559.8L406.2 561.8ZM446.2 630.6L440 619.9L454 618.5ZM440 619.9L446.2 630.6L435.2 633.8ZM440.6 645.3L453.3 644.9L446.7 654.6ZM435.2 633.8L440.6 645.3L425.8 644.2ZM446.2 630.6L440.6 645.3L435.2 633.8ZM440.6 645.3L446.2 630.6L453.3 644.9ZM425.8 644.2L440.6 645.3L433.3 657.6ZM440.6 645.3L446.7 654.6L433.3 657.6ZM453.3 644.9L459.7 655.5L446.7 654.6ZM459.7 655.5L453.3 644.9L466.4 645ZM459.7 608.7L468 619.1L454 618.5ZM475.2 633.3L468 619.1L480 620ZM468.6 596.8L461.7 586.4L473.8 585.7ZM522.1 620.9L531.1 632.3L515.9 631.6ZM531.1 632.3L522.1 620.9L533.6 619.7ZM522.1 620.9L527.8 609.6L533.6 619.7ZM527.8 609.6L522.1 620.9L515.8 607.8ZM531.1 632.3L535.8 642.9L521.8 643.3ZM528.9 656.1L535.8 642.9L540.3 655.8ZM535.8 642.9L528.9 656.1L521.8 643.3ZM535.8 642.9L531.1 632.3L540.8 632.9ZM535.8 642.9L549.8 645.1L540.3 655.8ZM549.8 645.1L535.8 642.9L540.8 632.9ZM520.7 597.5L527.8 609.6L515.8 607.8ZM520.7 597.5L506.6 594.6L515.2 585.7ZM554.8 653.7L547.8 668L540.3 655.8ZM547.8 668L554.8 653.7L560.6 667.5ZM527.9 678.6L542.6 678.9L534.9 690.9ZM527.9 678.6L534.9 690.9L523.3 690.6ZM514.1 679.7L527.9 678.6L523.3 690.6ZM522.1 669L527.9 678.6L514.1 679.7ZM547.4 690.1L554.5 678.1L562 689.6ZM542.6 678.9L554.5 678.1L547.4 690.1ZM554.5 678.1L567.6 680L562 689.6ZM567.6 680L554.5 678.1L560.6 667.5ZM554.5 678.1L547.8 668L560.6 667.5ZM547.8 668L554.5 678.1L542.6 678.9ZM260.1 680.7L269.5 694.3L253.6 691.5ZM260.1 680.7L270.7 678.3L269.5 694.3ZM243.2 678.7L260.1 680.7L253.6 691.5ZM260.1 680.7L243.2 678.7L252.8 667.7ZM260.1 680.7L252.8 667.7L264.7 667.3ZM270.7 678.3L260.1 680.7L264.7 667.3ZM305.1 620.8L310.6 609.2L317.2 619.6ZM305.1 620.8L295.2 612.2L310.6 609.2ZM295.2 612.2L305.1 620.8L291.3 620.2ZM313 631.5L305.1 620.8L317.2 619.6ZM295.8 632.1L305.1 620.8L313 631.5ZM305.1 620.8L295.8 632.1L291.3 620.2ZM212.6 692.2L220.5 703L207.2 703ZM220.5 703L212.6 692.2L224.7 689.6ZM212.6 692.2L218 679.3L224.7 689.6ZM197.7 690.2L212.6 692.2L207.2 703ZM212.6 692.2L197.7 690.2L202.1 679.9ZM218 679.3L212.6 692.2L202.1 679.9ZM198.7 668.9L210.2 668.3L202.1 679.9ZM210.2 668.3L218 679.3L202.1 679.9ZM218 679.3L210.2 668.3L224.1 667.5ZM210.2 668.3L198.7 668.9L203.6 655.6ZM218 654.7L210.2 668.3L203.6 655.6ZM210.2 668.3L218 654.7L224.1 667.5ZM252.8 667.7L256.6 656.1L264.7 667.3ZM256.6 656.1L252.8 667.7L243.8 654.6ZM249.3 644.4L256.6 656.1L243.8 654.6ZM295.8 632.1L285.6 632.5L291.3 620.2ZM285.6 632.5L269.9 632.8L277.3 615.2ZM286.7 409.8L284.4 419.8L277.3 408.7ZM311.9 419.8L299.8 421.6L306.1 409.1ZM299.8 421.6L295.2 405.7L306.1 409.1ZM299.8 421.6L286.7 409.8L295.2 405.7ZM286.7 409.8L299.8 421.6L284.4 419.8ZM312.2 489.8L318.7 477.6L327 490.2ZM303.9 479.9L312.2 489.8L299.9 491.4ZM303.9 479.9L318.7 477.6L312.2 489.8ZM318.7 477.6L303.9 479.9L313.8 467.3ZM324.1 560.2L319 549.8L331.7 549.6ZM319 549.8L324.1 560.2L314.3 561.1ZM339.6 561.7L324.1 560.2L331.7 549.6ZM324.1 560.2L339.6 561.7L330.8 574.5ZM317.7 572.2L324.1 560.2L330.8 574.5ZM314.3 561.1L324.1 560.2L317.7 572.2ZM421.7 537.4L405.3 538L412.7 526.8ZM428.4 527L421.7 537.4L412.7 526.8ZM421.7 537.4L427.1 547.2L412.6 550.2ZM405.3 538L421.7 537.4L412.6 550.2ZM392.2 537.4L380.1 535.6L385.7 526.2ZM400.7 526.8L392.2 537.4L385.7 526.2ZM405.3 538L392.2 537.4L400.7 526.8ZM392.2 537.4L405.3 538L397.8 550.6ZM392.2 537.4L397.8 550.6L386.3 550.3ZM380.1 535.6L392.2 537.4L386.3 550.3ZM380.1 535.6L372.7 525.2L385.7 526.2ZM372.7 525.2L380.7 512L385.7 526.2ZM372.7 525.2L367.9 514.2L380.7 512ZM367.9 514.2L372.7 525.2L359.3 524.3ZM372.7 525.2L367.3 538.8L359.3 524.3ZM372.7 525.2L380.1 535.6L367.3 538.8ZM373.1 550.4L380.1 535.6L386.3 550.3ZM380.1 535.6L373.1 550.4L367.3 538.8ZM393.9 559.8L378.8 562L386.3 550.3ZM378.8 562L393.9 559.8L386.8 573.5ZM378.8 562L373.1 550.4L386.3 550.3ZM373.1 550.4L378.8 562L366.8 561.9ZM378.8 562L386.8 573.5L372.4 573.9ZM366.8 561.9L378.8 562L372.4 573.9ZM348.9 573.6L350.8 560.5L358.4 573.8ZM350.8 560.5L366.8 561.9L358.4 573.8ZM350.8 560.5L348.9 573.6L339.6 561.7ZM348 548.1L350.8 560.5L339.6 561.7ZM389.2 583.1L400.7 572.7L397.9 586.8ZM400.7 572.7L389.2 583.1L386.8 573.5ZM399.3 621.1L398.6 612.2L411.5 618.8ZM398.6 612.2L399.3 621.1L390.1 616.3ZM440.2 572.3L432 586.5L426.3 571.9ZM440.8 596L432 586.5L447.8 586.6ZM432 586.5L440.2 572.3L447.8 586.6ZM369.9 644.7L384.8 643L379.9 656ZM384.8 643L394.4 655.3L379.9 656ZM384.8 643L400.8 643.9L394.4 655.3ZM320.2 501.7L326.1 514.3L312.6 514.7ZM326.1 514.3L320.2 501.7L331.5 503.2ZM320.2 501.7L312.2 489.8L327 490.2ZM331.5 503.2L320.2 501.7L327 490.2ZM222.2 525.2L230.7 537.2L218.5 538.9ZM225.8 551L230.7 537.2L238.1 548.2ZM218.5 538.9L230.7 537.2L225.8 551ZM574.6 407.2L580.1 402.7L587.4 408.7ZM554.9 349L562.5 362.5L548.6 360.7ZM562.5 362.5L555.3 371.1L548.6 360.7ZM580.1 299.4L587.4 305.5L576.6 313.8ZM568.5 302.4L580.1 299.4L576.6 313.8ZM568.5 302.4L562.2 312.8L554.9 302.4ZM548.4 312.6L562.2 312.8L556.9 324.9ZM562.2 312.8L548.4 312.6L554.9 302.4ZM562.2 312.8L569 325.4L556.9 324.9ZM569 325.4L562.2 312.8L576.6 313.8ZM562.2 312.8L568.5 302.4L576.6 313.8ZM574.8 337.9L569 325.4L581.6 324.9ZM588.8 337.3L574.8 337.9L581.6 324.9ZM586.6 687.9L579.6 694.3L580 679.3ZM594 676.4L586.6 687.9L580 679.3ZM581.6 654.6L587.6 644.5L594 649.7ZM587.6 644.5L581.6 654.6L575.6 644ZM587.6 644.5L594 636.4L594 649.7ZM594 636.4L587.6 644.5L583.9 631.8ZM587.6 644.5L575.6 644L583.9 631.8ZM567.6 680L574 668.2L580 679.3ZM574 668.2L567.6 680L560.6 667.5ZM574 668.2L560.6 667.5L569.4 656.3ZM581.6 654.6L574 668.2L569.4 656.3ZM574 668.2L594 663L580 679.3ZM574 668.2L581.6 654.6L594 663ZM561.1 643.4L575.6 644L569.4 656.3ZM554.8 653.7L561.1 643.4L569.4 656.3ZM561.1 643.4L567 632.5L575.6 644ZM567 632.5L561.1 643.4L557.5 632.6ZM557.5 632.6L561.1 643.4L549.8 645.1ZM561.1 643.4L554.8 653.7L549.8 645.1ZM544 560.6L534 570.7L531.8 562ZM534 570.7L519.4 574.6L531.8 562ZM547.5 596.8L553.8 607.8L541 608.8ZM553.8 607.8L547.5 596.8L559.6 595.6ZM501.3 586.8L492.6 583.1L496.6 574ZM492.6 583.1L479.6 573.9L496.6 574ZM479.6 573.9L492.6 583.1L483.3 584.7ZM575.1 573.3L586.9 572.6L586.6 584.7ZM575.1 573.3L579.6 591L568.4 585.1ZM579.6 591L575.1 573.3L586.6 584.7ZM560.5 573.4L575.1 573.3L568.4 585.1ZM575.1 573.3L560.5 573.4L570.6 561.4ZM580.6 561.2L575.1 573.3L570.6 561.4ZM586.9 572.6L575.1 573.3L580.6 561.2ZM562.7 527.6L575.3 524.6L569.6 538.6ZM583.8 538.1L575.3 524.6L587.8 524.7ZM575.3 524.6L583.8 538.1L569.6 538.6ZM575.7 550.4L560.3 549.4L569.6 538.6ZM560.3 549.4L555.1 537.7L569.6 538.6ZM557 562.8L560.3 549.4L570.6 561.4ZM560.3 549.4L575.7 550.4L570.6 561.4ZM560.3 549.4L557 562.8L547.1 550.8ZM555.1 537.7L560.3 549.4L547.1 550.8ZM559.6 595.6L554.2 584.4L568.4 585.1ZM554.2 584.4L560.5 573.4L568.4 585.1ZM547.5 596.8L554.2 584.4L559.6 595.6ZM554.2 584.4L547.5 596.8L542.2 584.2ZM574.7 619.7L567 632.5L559.2 621.5ZM567.9 610.6L574.7 619.7L559.2 621.5ZM567 632.5L574.7 619.7L583.9 631.8ZM574.7 619.7L567.9 610.6L580.1 609.2ZM583.9 631.8L574.7 619.7L587.4 615.2ZM574.7 619.7L580.1 609.2L587.4 615.2ZM587.4 512L594 516.5L587.8 524.7ZM575.3 524.6L587.4 512L587.8 524.7ZM587.4 512L575.3 524.6L580.1 505.9ZM534.6 525.2L540.7 539.1L528 540.4ZM540.7 539.1L536.5 550.1L528 540.4ZM536.5 550.1L540.7 539.1L547.1 550.8ZM540.7 539.1L555.1 537.7L547.1 550.8ZM572.4 479.4L568.6 468.3L582.4 466.4ZM568.6 468.3L572.4 479.4L561.8 479.7ZM572.4 479.4L568.5 491.1L561.8 479.7ZM572.4 479.4L579.6 487.8L568.5 491.1ZM572.4 479.4L586.6 481.4L579.6 487.8ZM594 476.5L586.6 481.4L582.4 466.4ZM586.6 481.4L572.4 479.4L582.4 466.4ZM475.4 562.5L479.6 573.9L465.5 572.5ZM464 560.4L475.4 562.5L465.5 572.5ZM479.6 573.9L488.9 561.5L496.6 574ZM488.9 561.5L499.6 562L496.6 574ZM475.4 562.5L488.9 561.5L479.6 573.9ZM488.9 561.5L475.4 562.5L482.7 551.2ZM488.9 561.5L482.7 551.2L494.4 549.4ZM499.6 562L488.9 561.5L494.4 549.4ZM513.8 538.1L505.8 550.4L501.4 538.5ZM507.8 526.8L513.8 538.1L501.4 538.5ZM524.9 550.3L513.8 538.1L528 540.4ZM505.8 550.4L513.8 538.1L524.9 550.3ZM528 540.4L513.8 538.1L522.7 525.9ZM513.8 538.1L507.8 526.8L522.7 525.9ZM528.6 514.8L516.3 514.3L522.9 500.5ZM501.9 508.9L516.3 514.3L502.5 516.4ZM516.3 514.3L528.6 514.8L522.7 525.9ZM522.9 500.5L516.3 514.3L506.9 500.8ZM516.3 514.3L501.9 508.9L506.9 500.8ZM507.8 526.8L516.3 514.3L522.7 525.9ZM516.3 514.3L507.8 526.8L502.5 516.4ZM542.5 489.4L549 479.4L555.5 490.3ZM548.5 502.6L542.5 489.4L555.5 490.3ZM542.5 489.4L548.5 502.6L534.9 501.7ZM530.2 489.6L542.5 489.4L534.9 501.7ZM535.8 478.7L530.2 489.6L522.2 479.5ZM535.8 478.7L529.1 467.1L541.8 468.4ZM529.1 467.1L535.8 478.7L522.2 479.5ZM535.8 478.7L542.5 489.4L530.2 489.6ZM549 479.4L535.8 478.7L541.8 468.4ZM542.5 489.4L535.8 478.7L549 479.4ZM548.7 384.4L554.9 395.8L541.7 396.3ZM554.9 395.8L548.3 408.3L541.7 396.3ZM548.3 408.3L554.9 395.8L559.7 407.7ZM559.7 407.7L554.9 395.8L568.1 395.3ZM554.9 395.8L548.7 384.4L562.1 384.4ZM512.9 395.6L521.8 407.1L508.4 407.7ZM521.8 407.1L512.9 395.6L527.7 394.3ZM442.2 525.9L432.7 512.4L447.1 515.2ZM442.2 525.9L428.4 527L432.7 512.4ZM467.7 548.3L473.2 538.5L482.7 551.2ZM475.4 562.5L467.7 548.3L482.7 551.2ZM467.7 548.3L475.4 562.5L464 560.4ZM467.7 548.3L464 560.4L455.9 549.9ZM460.9 538.2L467.7 548.3L455.9 549.9ZM467.7 548.3L460.9 538.2L473.2 538.5ZM432.1 539.6L439.4 549.8L427.1 547.2ZM439.4 549.8L432.1 539.6L446.5 536.7ZM421.7 537.4L432.1 539.6L427.1 547.2ZM432.1 539.6L421.7 537.4L428.4 527ZM432.1 539.6L442.2 525.9L446.5 536.7ZM442.2 525.9L432.1 539.6L428.4 527ZM460.9 538.2L453.6 526.8L465.6 526.2ZM453.6 526.8L460.9 538.2L446.5 536.7ZM442.2 525.9L453.6 526.8L446.5 536.7ZM453.6 526.8L442.2 525.9L447.1 515.2ZM461.5 513L453.6 526.8L447.1 515.2ZM453.6 526.8L461.5 513L465.6 526.2ZM225.1 406.5L215.8 395.9L232.9 393.6ZM215.8 395.9L223.3 384.1L232.9 393.6ZM215.8 395.9L225.1 406.5L210.7 407.6ZM205.2 395.3L215.8 395.9L210.7 407.6ZM223.3 384.1L215.8 395.9L210.8 383.9ZM243.9 442.8L237.7 431.8L252.2 431.3ZM255.9 443.4L243.9 442.8L252.2 431.3ZM237.7 431.8L243.9 442.8L230.7 443.3ZM243.9 442.8L238.8 455.1L230.7 443.3ZM238.8 455.1L251.8 455.3L245.6 466.5ZM251.8 455.3L258 467.3L245.6 466.5ZM243.9 442.8L251.8 455.3L238.8 455.1ZM251.8 455.3L243.9 442.8L255.9 443.4ZM251.8 455.3L255.9 443.4L265.7 455.2ZM258 467.3L251.8 455.3L265.7 455.2ZM280 455.6L274 445.2L286.8 444ZM274 445.2L280 455.6L265.7 455.2ZM276.5 481.4L282.9 466.7L285.8 479.8ZM238.1 478.9L230.9 469.3L245.6 466.5ZM252.7 478.4L238.1 478.9L245.6 466.5ZM238.1 478.9L225.5 479.4L230.9 469.3ZM225.5 479.4L238.1 478.9L231.1 491.1ZM259.5 395.2L264 407.8L251.7 408.3ZM245.3 395.2L259.5 395.2L251.7 408.3ZM264 407.8L270 402.7L277.3 408.7ZM398.6 405.7L391.9 420.1L390.1 409.8ZM391.9 420.1L398.6 405.7L405.8 418.4ZM398.6 405.7L415.4 407.9L405.8 418.4ZM398.6 405.7L403.5 397.6L415.4 407.9ZM394 442.4L406.4 444.2L400.6 454.5ZM406.4 444.2L394 442.4L401.5 432ZM406.4 444.2L413.3 456.1L400.6 454.5ZM406.4 444.2L420.5 443.5L413.3 456.1ZM414.2 431.1L405.8 418.4L421.5 420.2ZM414.2 431.1L401.5 432L405.8 418.4ZM414.2 431.1L406.4 444.2L401.5 432ZM406.4 444.2L414.2 431.1L420.5 443.5ZM454.9 454.2L447.2 442.9L462.6 441.6ZM447.2 442.9L451.2 432.2L462.6 441.6ZM434.3 419.4L429.4 433.2L421.5 420.2ZM429.4 433.2L414.2 431.1L421.5 420.2ZM420.5 443.5L429.4 433.2L435.6 442.8ZM414.2 431.1L429.4 433.2L420.5 443.5ZM501.5 419L486.7 420.4L493.4 409.8ZM501.5 419L514.7 419.5L506.9 431.3ZM501.5 419L506.9 431.3L492.2 431.9ZM486.7 420.4L501.5 419L492.2 431.9ZM514.7 419.5L501.5 419L508.4 407.7ZM501.5 419L501.9 405.7L508.4 407.7ZM501.9 405.7L501.5 419L493.4 409.8ZM430.2 454.3L433.5 466L419.8 467.1ZM433.5 466L447.1 467.8L440.7 479.6ZM426.3 479.8L433.5 466L440.7 479.6ZM419.8 467.1L433.5 466L426.3 479.8ZM439.8 454.4L454.9 454.2L447.1 467.8ZM433.5 466L439.8 454.4L447.1 467.8ZM439.8 454.4L433.5 466L430.2 454.3ZM439.8 454.4L447.2 442.9L454.9 454.2ZM439.8 454.4L430.2 454.3L435.6 442.8ZM447.2 442.9L439.8 454.4L435.6 442.8ZM345.4 433.9L351.2 443.1L338.6 443.3ZM351.2 443.1L345.4 433.9L360.6 431.5ZM351.2 443.1L360.6 431.5L369.1 443.3ZM357.2 454.9L351.2 443.1L369.1 443.3ZM346 454.1L340.3 468.9L330.6 456.7ZM346 454.1L330.6 456.7L338.6 443.3ZM346 454.1L353.6 467.2L340.3 468.9ZM353.6 467.2L346 454.1L357.2 454.9ZM351.2 443.1L346 454.1L338.6 443.3ZM346 454.1L351.2 443.1L357.2 454.9ZM347.4 478.4L353.6 467.2L359.9 479.4ZM353.6 467.2L347.4 478.4L340.3 468.9ZM353.1 491L347.4 478.4L359.9 479.4ZM339.7 489.8L347.4 478.4L353.1 491ZM357.9 501L347 502.1L353.1 491ZM347 502.1L339.7 489.8L353.1 491ZM347 502.1L353.6 513.2L339 513.9ZM347 502.1L357.9 501L353.6 513.2ZM331.5 503.2L347 502.1L339 513.9ZM339.7 489.8L347 502.1L331.5 503.2ZM476.7 299.4L484 305.5L479.8 313ZM484 305.5L494.6 314L479.8 313ZM521.8 337.5L529 349.1L515.9 349.8ZM534.5 360.8L529 349.1L541.9 348.8ZM529 349.1L537.5 335.9L541.9 348.8ZM529 349.1L521.8 337.5L537.5 335.9ZM529 349.1L521.7 361.1L515.9 349.8ZM529 349.1L534.5 360.8L521.7 361.1ZM522.3 314.1L533.5 313.5L527.4 325.3ZM533.5 313.5L540.2 324.3L527.4 325.3ZM533.5 313.5L529.1 300.7L541.7 302.3ZM533.5 313.5L522.3 314.1L529.1 300.7ZM548.4 312.6L533.5 313.5L541.7 302.3ZM540.2 324.3L533.5 313.5L548.4 312.6ZM486.9 348.6L479.6 336.6L493.1 336.4ZM498.8 350.4L486.9 348.6L493.1 336.4ZM479.6 336.6L486.9 348.6L474.1 350.4ZM486.9 348.6L482.1 359.9L474.1 350.4ZM482.1 359.9L486.9 348.6L493.3 360.3ZM486.9 348.6L498.8 350.4L493.3 360.3ZM413.4 314.1L405.4 301.1L421.5 301.1ZM398.6 302.4L405.4 301.1L399.4 314.6ZM405.4 301.1L413.4 314.1L399.4 314.6ZM405.4 301.1L407.3 290L421.5 301.1ZM332.4 359.9L338.2 350L346.5 362.6ZM338.2 350L351 348.9L346.5 362.6ZM338.2 350L332.4 359.9L324.3 349.5ZM334.8 338.6L338.2 350L324.3 349.5ZM351 348.9L338.2 350L344.4 335.7ZM338.2 350L334.8 338.6L344.4 335.7ZM352.1 372.3L359.3 383.4L345.7 384.9ZM359.3 383.4L351.2 396.1L345.7 384.9ZM276.5 378.2L269.5 384.5L270.1 372.5ZM269.5 384.5L262.9 384.4L270.1 372.5ZM325.1 396.2L331.4 384.9L339 396.1ZM319.4 384.2L331.4 384.9L325.1 396.2ZM331.4 384.9L345.7 384.9L339 396.1ZM331.4 384.9L319.4 384.2L327 372.2ZM345.7 384.9L331.4 384.9L339.8 372.5ZM331.4 384.9L327 372.2L339.8 372.5ZM307.5 524L298.4 515.1L312.6 514.7ZM298.4 515.1L307.5 524L289.5 525ZM326.1 514.3L318.4 526.2L312.6 514.7ZM318.4 526.2L307.5 524L312.6 514.7ZM296.6 537.7L312.5 537.5L305.2 549.4ZM307.5 524L312.5 537.5L296.6 537.7ZM318.4 526.2L312.5 537.5L307.5 524ZM312.5 537.5L319 549.8L305.2 549.4ZM273.2 538.9L259 538.9L264.9 526.5ZM259 538.9L273.2 538.9L266.9 548.8ZM266.9 548.8L273.2 538.9L280 550.1ZM273.2 538.9L286.9 538.4L280 550.1ZM277.6 525.8L273.2 538.9L264.9 526.5ZM286.9 538.4L277.6 525.8L289.5 525ZM273.2 538.9L277.6 525.8L286.9 538.4ZM256.9 585.5L243 586.2L250.4 572.9ZM256.9 585.5L266.1 572.1L269.5 591ZM256.9 585.5L250.4 572.9L266.1 572.1ZM237.8 574.3L231.5 583.3L226.9 574.4ZM231.5 583.3L237.8 574.3L243 586.2ZM231.5 583.3L220.7 584.3L226.9 574.4ZM220.7 584.3L231.5 583.3L224.9 595.2ZM224.9 595.2L231.5 583.3L238.9 599.5ZM231.5 583.3L243 586.2L238.9 599.5ZM204.5 516.5L196.7 500.8L212 502.4ZM196.7 500.8L204.5 516.5L191.8 508.9ZM332.8 620.5L340.9 608L345.4 619.9ZM332.8 620.5L324 608.4L340.9 608ZM324 608.4L332.8 620.5L317.2 619.6ZM332.8 620.5L325.7 630L317.2 619.6ZM290.6 644.8L300.7 655.5L286.5 656.7ZM300.7 655.5L290.6 644.8L304 642ZM290.6 644.8L295.8 632.1L304 642ZM290.6 644.8L285.6 632.5L295.8 632.1ZM532.4 667.5L528.9 656.1L540.3 655.8ZM528.9 656.1L532.4 667.5L522.1 669ZM547.8 668L532.4 667.5L540.3 655.8ZM532.4 667.5L527.9 678.6L522.1 669ZM532.4 667.5L547.8 668L542.6 678.9ZM527.9 678.6L532.4 667.5L542.6 678.9ZM483.3 687.9L474.3 677.5L486.8 679.5ZM474.3 677.5L483.3 687.9L469.3 691.2ZM474.3 677.5L469.3 691.2L460.8 681.9ZM474.3 677.5L481.1 667.5L486.8 679.5ZM466.9 666.3L474.3 677.5L460.8 681.9ZM481.1 667.5L474.3 677.5L466.9 666.3ZM476.9 656L481.1 667.5L466.9 666.3ZM479.9 643.7L476.9 656L466.4 645ZM476.9 656L479.9 643.7L488.8 654.9ZM481.1 667.5L476.9 656L488.8 654.9ZM476.9 656L459.7 655.5L466.4 645ZM459.7 655.5L476.9 656L466.9 666.3ZM521.8 643.3L508 646L515.9 631.6ZM508 646L521.8 643.3L517 655.2ZM501.6 656.4L508 646L517 655.2ZM496.8 644.3L508 646L501.6 656.4ZM508 646L499.3 630.9L515.9 631.6ZM499.3 630.9L508 646L496.8 644.3ZM453.3 644.9L462.1 633.2L466.4 645ZM446.2 630.6L462.1 633.2L453.3 644.9ZM462.1 633.2L475.2 633.3L466.4 645ZM462.1 633.2L468 619.1L475.2 633.3ZM462.1 633.2L446.2 630.6L454 618.5ZM468 619.1L462.1 633.2L454 618.5ZM455.5 666.6L459.7 655.5L466.9 666.3ZM440.3 668.4L455.5 666.6L445.5 679.6ZM446.7 654.6L455.5 666.6L440.3 668.4ZM459.7 655.5L455.5 666.6L446.7 654.6ZM445.5 679.6L455.5 666.6L460.8 681.9ZM455.5 666.6L466.9 666.3L460.8 681.9ZM480 620L476.7 609.2L484 615.2ZM468 619.1L476.7 609.2L480 620ZM476.7 609.2L468 619.1L459.7 608.7ZM468.6 596.8L453.8 598L461.7 586.4ZM461.7 586.4L453.8 598L447.8 586.6ZM453.8 598L459.7 608.7L447.3 609ZM453.8 598L440.8 596L447.8 586.6ZM440.8 596L453.8 598L447.3 609ZM506.6 620.4L501.9 612.2L515.8 607.8ZM522.1 620.9L506.6 620.4L515.8 607.8ZM506.6 620.4L522.1 620.9L515.9 631.6ZM499.3 630.9L506.6 620.4L515.9 631.6ZM501.9 612.2L506.6 620.4L493.4 616.3ZM506.6 620.4L499.3 630.9L493.4 616.3ZM270.7 678.3L276.5 687.9L269.5 694.3ZM276.5 687.9L270.7 678.3L284.3 678.9ZM286.7 616.3L295.2 612.2L291.3 620.2ZM286.7 616.3L285.6 632.5L277.3 615.2ZM285.6 632.5L286.7 616.3L291.3 620.2ZM266 644.4L256.6 656.1L249.3 644.4ZM255.5 608.4L264.6 618.4L251.2 620.3ZM270 609.2L264.6 618.4L255.5 608.4ZM264.6 618.4L270 609.2L277.3 615.2ZM269.9 632.8L264.6 618.4L277.3 615.2ZM318.6 432.2L304.4 431.3L311.9 419.8ZM304.4 431.3L299.8 421.6L311.9 419.8ZM312.1 443.3L304.4 431.3L318.6 432.2ZM303.5 455.1L318.5 455.4L313.8 467.3ZM318.5 455.4L303.5 455.1L312.1 443.3ZM318.7 477.6L331.9 479.6L327 490.2ZM331.9 479.6L339.7 489.8L327 490.2ZM347.4 478.4L331.9 479.6L340.3 468.9ZM331.9 479.6L347.4 478.4L339.7 489.8ZM326.7 466L318.7 477.6L313.8 467.3ZM326.7 466L318.5 455.4L330.6 456.7ZM318.5 455.4L326.7 466L313.8 467.3ZM326.7 466L331.9 479.6L318.7 477.6ZM340.3 468.9L326.7 466L330.6 456.7ZM331.9 479.6L326.7 466L340.3 468.9ZM359.7 548.8L373.1 550.4L366.8 561.9ZM359.7 548.8L350.8 560.5L348 548.1ZM350.8 560.5L359.7 548.8L366.8 561.9ZM373.1 550.4L359.7 548.8L367.3 538.8ZM367.3 538.8L359.7 548.8L353.5 538ZM359.7 548.8L348 548.1L353.5 538ZM386.8 573.5L379.9 584.7L372.4 573.9ZM389.2 583.1L379.9 584.7L386.8 573.5ZM379.9 584.7L366.1 584.8L372.4 573.9ZM379.9 584.7L372.9 591L366.1 584.8ZM427 598.2L434 607.8L419 607.8ZM434 607.8L427 598.2L440.8 596ZM427 598.2L432 586.5L440.8 596ZM419.6 584.8L412 598.1L406.1 585.7ZM412.8 571.6L419.6 584.8L406.1 585.7ZM419.6 584.8L427 598.2L412 598.1ZM427 598.2L419.6 584.8L432 586.5ZM426.3 571.9L419.6 584.8L412.8 571.6ZM432 586.5L419.6 584.8L426.3 571.9ZM380.7 631.4L369.9 644.7L367 632ZM380.7 631.4L384.8 643L369.9 644.7ZM380.7 631.4L367 632L374.4 619.4ZM380.7 631.4L380.7 615.2L390.1 616.3ZM380.7 615.2L380.7 631.4L374.4 619.4ZM294.5 483.5L303.9 479.9L299.9 491.4ZM300.1 500.8L320.2 501.7L312.6 514.7ZM298.4 515.1L300.1 500.8L312.6 514.7ZM286.7 513.1L298.4 515.1L289.5 525ZM298.4 515.1L286.7 513.1L295.2 508.9ZM277.6 525.8L286.7 513.1L289.5 525ZM286.7 513.1L277.6 525.8L277.3 512ZM230.9 513.7L238.6 526L222.2 525.2ZM238.6 526L230.7 537.2L222.2 525.2ZM580.5 373.6L568.1 373.5L576.1 360.9ZM568.1 373.5L562.5 362.5L576.1 360.9ZM568.1 373.5L580.5 373.6L579.6 384.5ZM562.1 384.4L568.1 373.5L579.6 384.5ZM555.3 371.1L568.1 373.5L562.1 384.4ZM562.5 362.5L568.1 373.5L555.3 371.1ZM569 325.4L561.9 335.9L556.9 324.9ZM574.8 337.9L561.9 335.9L569 325.4ZM561.9 335.9L549.5 337.1L556.9 324.9ZM549.5 337.1L561.9 335.9L554.9 349ZM582 348.5L588.8 337.3L594 343.3ZM582 348.5L574.8 337.9L588.8 337.3ZM594 356.6L582 348.5L594 343.3ZM586.7 361.2L582 348.5L594 356.6ZM582 348.5L586.7 361.2L576.1 360.9ZM534 570.7L529.8 584.4L519.4 574.6ZM529.8 584.4L534 570.7L542.2 584.2ZM519.4 574.6L529.8 584.4L515.2 585.7ZM529.8 584.4L520.7 597.5L515.2 585.7ZM535.7 596.7L547.5 596.8L541 608.8ZM527.8 609.6L535.7 596.7L541 608.8ZM520.7 597.5L535.7 596.7L527.8 609.6ZM529.8 584.4L535.7 596.7L520.7 597.5ZM547.5 596.8L535.7 596.7L542.2 584.2ZM535.7 596.7L529.8 584.4L542.2 584.2ZM568.5 514.3L562.7 527.6L555.2 513.3ZM568.5 514.3L575.3 524.6L562.7 527.6ZM575.3 524.6L568.5 514.3L580.1 505.9ZM560.7 501.8L568.5 514.3L555.2 513.3ZM568.5 514.3L560.7 501.8L580.1 505.9ZM551.8 574.6L554.2 584.4L542.2 584.2ZM554.2 584.4L551.8 574.6L560.5 573.4ZM551.8 574.6L534 570.7L544 560.6ZM534 570.7L551.8 574.6L542.2 584.2ZM557 562.8L551.8 574.6L544 560.6ZM560.5 573.4L551.8 574.6L557 562.8ZM540.7 539.1L548.9 525.8L555.1 537.7ZM548.9 525.8L540.7 539.1L534.6 525.2ZM562.7 527.6L548.9 525.8L555.2 513.3ZM555.1 537.7L548.9 525.8L562.7 527.6ZM548.9 525.8L540.8 513.2L555.2 513.3ZM548.9 525.8L534.6 525.2L540.8 513.2ZM505.3 477.9L501.3 483.5L492.6 479.8ZM303.5 455.1L297.7 444.7L312.1 443.3ZM297.7 444.7L304.4 431.3L312.1 443.3ZM294.5 483.5L298.6 467.1L303.9 479.9ZM303.9 479.9L298.6 467.1L313.8 467.3ZM298.6 467.1L303.5 455.1L313.8 467.3ZM282.9 466.7L298.6 467.1L285.8 479.8ZM298.6 467.1L294.5 483.5L285.8 479.8ZM280 455.6L273.2 466.6L265.7 455.2ZM273.2 466.6L280 455.6L282.9 466.7ZM273.2 466.6L258 467.3L265.7 455.2ZM276.5 481.4L273.2 466.6L282.9 466.7ZM264 478.6L276.5 481.4L269.5 487.8ZM258 467.3L264 478.6L252.7 478.4ZM273.2 466.6L264 478.6L258 467.3ZM264 478.6L273.2 466.6L276.5 481.4ZM441.1 432.2L429.4 433.2L434.3 419.4ZM451.2 432.2L441.1 432.2L448.5 419.6ZM441.1 432.2L434.3 419.4L448.5 419.6ZM429.4 433.2L441.1 432.2L435.6 442.8ZM441.1 432.2L447.2 442.9L435.6 442.8ZM447.2 442.9L441.1 432.2L451.2 432.2ZM359.3 383.4L364.4 371.3L372.9 384.5ZM380.7 372.4L364.4 371.3L371.5 361.1ZM371.5 361.1L364.4 371.3L359 360.6ZM364.4 371.3L380.7 372.4L379.9 378.2ZM372.9 384.5L364.4 371.3L379.9 378.2ZM364.4 371.3L352.1 372.3L359 360.6ZM364.4 371.3L359.3 383.4L352.1 372.3ZM331.9 525.3L345.8 526L337.9 539.1ZM331.9 525.3L318.4 526.2L326.1 514.3ZM345.8 526L331.9 525.3L339 513.9ZM331.9 525.3L326.1 514.3L339 513.9ZM326.8 537.5L312.5 537.5L318.4 526.2ZM326.8 537.5L331.9 525.3L337.9 539.1ZM331.9 525.3L326.8 537.5L318.4 526.2ZM326.8 537.5L337.9 539.1L331.7 549.6ZM319 549.8L326.8 537.5L331.7 549.6ZM312.5 537.5L326.8 537.5L319 549.8ZM271.1 513.1L270 505.9L277.3 512ZM271.1 513.1L277.6 525.8L264.9 526.5ZM277.6 525.8L271.1 513.1L277.3 512ZM231.1 491.1L237.5 503.2L226.6 500.6ZM237.5 503.2L230.9 513.7L226.6 500.6ZM246 490.5L238.1 478.9L252.7 478.4ZM238.1 478.9L246 490.5L231.1 491.1ZM246 490.5L237.5 503.2L231.1 491.1ZM237.5 503.2L246 490.5L250.9 501.7ZM248.9 597.7L244.7 608.4L238.9 599.5ZM248.9 597.7L255.5 608.4L244.7 608.4ZM243 586.2L248.9 597.7L238.9 599.5ZM256.9 585.5L248.9 597.7L243 586.2ZM340 631.6L332.8 620.5L345.4 619.9ZM353.8 630.5L340 631.6L345.4 619.9ZM344.2 642.9L340 631.6L353.8 630.5ZM332 642.7L340 631.6L344.2 642.9ZM325.7 630L340 631.6L332 642.7ZM332.8 620.5L340 631.6L325.7 630ZM492.6 686.3L483.3 687.9L486.8 679.5ZM499.5 678.6L492.6 686.3L486.8 679.5ZM492.6 686.3L499.5 678.6L501.3 690ZM514 703L507.4 691.7L523.3 690.6ZM507.4 691.7L514.1 679.7L523.3 690.6ZM507.4 691.7L499.5 678.6L514.1 679.7ZM499.5 678.6L507.4 691.7L501.3 690ZM486.5 632L496.8 644.3L479.9 643.7ZM486.5 632L499.3 630.9L496.8 644.3ZM475.2 633.3L486.5 632L479.9 643.7ZM486.5 632L475.2 633.3L480 620ZM493.4 616.3L486.5 632L480 620ZM499.3 630.9L486.5 632L493.4 616.3ZM257.7 632.9L266 644.4L249.3 644.4ZM266 644.4L257.7 632.9L269.9 632.8ZM257.7 632.9L249.3 644.4L244.7 631.4ZM257.7 632.9L244.7 631.4L251.2 620.3ZM264.6 618.4L257.7 632.9L251.2 620.3ZM257.7 632.9L264.6 618.4L269.9 632.8ZM278.8 666.8L270.4 655.9L286.5 656.7ZM270.4 655.9L278.8 666.8L264.7 667.3ZM256.6 656.1L270.4 655.9L264.7 667.3ZM266 644.4L270.4 655.9L256.6 656.1ZM304.4 431.3L293.3 431.6L299.8 421.6ZM277.9 430.7L293.3 431.6L286.8 444ZM293.3 431.6L297.7 444.7L286.8 444ZM297.7 444.7L293.3 431.6L304.4 431.3ZM284.4 419.8L293.3 431.6L277.9 430.7ZM299.8 421.6L293.3 431.6L284.4 419.8ZM325.2 443.5L318.5 455.4L312.1 443.3ZM325.2 443.5L312.1 443.3L318.6 432.2ZM330.6 456.7L325.2 443.5L338.6 443.3ZM318.5 455.4L325.2 443.5L330.6 456.7ZM338.6 443.3L325.2 443.5L330.3 430.7ZM325.2 443.5L318.6 432.2L330.3 430.7ZM411.5 618.8L403.5 604.1L419 607.8ZM398.6 612.2L403.5 604.1L411.5 618.8ZM399.3 621.1L392.3 634.2L390.1 616.3ZM392.3 634.2L380.7 631.4L390.1 616.3ZM405.5 631.6L392.3 634.2L399.3 621.1ZM380.7 631.4L392.3 634.2L384.8 643ZM392.3 634.2L405.5 631.6L400.8 643.9ZM384.8 643L392.3 634.2L400.8 643.9ZM259 538.9L250.1 525.7L264.9 526.5ZM570.6 349.5L582 348.5L576.1 360.9ZM582 348.5L570.6 349.5L574.8 337.9ZM562.5 362.5L570.6 349.5L576.1 360.9ZM570.6 349.5L562.5 362.5L554.9 349ZM561.9 335.9L570.6 349.5L554.9 349ZM570.6 349.5L561.9 335.9L574.8 337.9ZM280 455.6L292.4 455.6L282.9 466.7ZM292.4 455.6L298.6 467.1L282.9 466.7ZM298.6 467.1L292.4 455.6L303.5 455.1ZM292.4 455.6L297.7 444.7L303.5 455.1ZM292.4 455.6L280 455.6L286.8 444ZM297.7 444.7L292.4 455.6L286.8 444ZM259.1 513.8L250.9 501.7L270 505.9ZM271.1 513.1L259.1 513.8L270 505.9ZM259.1 513.8L271.1 513.1L264.9 526.5ZM250.1 525.7L259.1 513.8L264.9 526.5ZM259.5 490.6L246 490.5L252.7 478.4ZM259.5 490.6L264 478.6L269.5 487.8ZM264 478.6L259.5 490.6L252.7 478.4ZM279.7 643.5L290.6 644.8L286.5 656.7ZM270.4 655.9L279.7 643.5L286.5 656.7ZM279.7 643.5L270.4 655.9L266 644.4ZM290.6 644.8L279.7 643.5L285.6 632.5ZM279.7 643.5L269.9 632.8L285.6 632.5ZM279.7 643.5L266 644.4L269.9 632.8ZM244.2 538.1L259 538.9L249.8 548.3ZM244.2 538.1L250.1 525.7L259 538.9ZM250.1 525.7L244.2 538.1L238.6 526ZM244.2 538.1L249.8 548.3L238.1 548.2ZM230.7 537.2L244.2 538.1L238.1 548.2ZM238.6 526L244.2 538.1L230.7 537.2ZM259.1 513.8L244.3 513.7L250.9 501.7ZM244.3 513.7L259.1 513.8L250.1 525.7ZM244.3 513.7L237.5 503.2L250.9 501.7ZM244.3 513.7L250.1 525.7L238.6 526ZM244.3 513.7L238.6 526L230.9 513.7ZM237.5 503.2L244.3 513.7L230.9 513.7Z"/><path fill="#d27ae6" stroke="#d27ae6" stroke-width="0.3" d="M379.2 496.5L383.2 489.6L387.2 496.5ZM379.2 496.5L373.4 505.9L370.5 496.9ZM299.9 388.1L287.9 386.3L294.5 380.3ZM313.9 290L300.1 294.3L283.9 290ZM498.6 599.8L494.6 606.7L490.6 599.8ZM494.6 606.7L486.6 606.7L490.6 599.8ZM275.9 599.8L279.9 592.8L283.9 599.8ZM299.9 594.6L310.6 609.2L300.1 604.1ZM590 386.3L594 369.9L594 393.2ZM586 393.2L590 386.3L594 393.2ZM590 386.3L586 393.2L579.6 384.5ZM594 623.1L590 606.7L594 599.8ZM494.6 386.3L498.6 393.2L490.6 393.2ZM494.6 592.8L498.6 599.8L490.6 599.8ZM486.6 592.8L494.6 592.8L490.6 599.8ZM494.6 592.8L506.6 594.6L498.6 599.8ZM180.5 369.9L184.5 386.3L180.5 393.2ZM184.5 386.3L188.5 393.2L180.5 393.2ZM188.5 393.2L184.5 386.3L196.5 388.1ZM383.2 489.6L391.2 489.6L387.2 496.5ZM389.2 479.8L391.2 489.6L383.2 489.6ZM403.2 491.4L391.2 489.6L397.9 483.5ZM403.2 491.4L414.9 501.4L403.5 500.8ZM391.2 489.6L395.2 496.5L387.2 496.5ZM395.2 496.5L403.2 491.4L403.5 500.8ZM403.2 491.4L395.2 496.5L391.2 489.6ZM473.8 496.9L476.7 505.9L469.3 500.2ZM461.1 489.9L473.8 496.9L469.3 500.2ZM383.2 503.4L373.4 505.9L379.2 496.5ZM383.2 503.4L379.2 496.5L387.2 496.5ZM365.6 492.4L372.9 487.8L370.5 496.9ZM372.9 487.8L379.2 496.5L370.5 496.9ZM372.9 487.8L383.2 489.6L379.2 496.5ZM393.9 290L391.2 296.9L387.2 290ZM380.6 290L373.4 299.4L367.2 290ZM295.2 405.7L287.9 400.2L300.1 397.6ZM291.9 393.2L299.9 388.1L300.1 397.6ZM299.9 388.1L291.9 393.2L287.9 386.3ZM287.9 400.2L291.9 393.2L300.1 397.6ZM287.9 386.3L291.9 393.2L283.9 393.2ZM291.9 393.2L287.9 400.2L283.9 393.2ZM300.1 294.3L287.9 296.9L283.9 290ZM207.2 290L196.7 294.3L180.5 290ZM269.5 591L275.9 599.8L267.1 600.2ZM275.9 599.8L269.5 591L279.9 592.8ZM196.7 604.1L188.5 599.8L196.5 594.6ZM180.5 476.5L184.5 489.6L180.5 496.5ZM372.9 694.3L380.6 703L367.2 703ZM494.6 606.7L493.4 616.3L486.6 606.7ZM299.9 697.9L313.9 703L283.9 703ZM287.9 696.1L299.9 697.9L283.9 703ZM291.9 599.8L299.9 594.6L300.1 604.1ZM383.2 606.7L391.2 606.7L390.1 616.3ZM379.2 599.8L372.9 591L383.2 592.8ZM372.9 591L379.2 599.8L370.5 600.2ZM365.6 608.3L360.3 596.7L370.5 600.2ZM579.6 694.3L580.7 703L567.3 703ZM590 606.7L586 599.8L594 599.8ZM579.6 591L586 599.8L577.2 600.2ZM586 599.8L580.1 609.2L577.2 600.2ZM580.1 609.2L586 599.8L590 606.7ZM594 516.5L590 503.4L594 496.5ZM506.6 491.4L522.9 500.5L506.9 500.8ZM494.6 386.3L506.6 388.1L498.6 393.2ZM506.6 388.1L494.6 386.3L501.3 380.3ZM184.5 386.3L191.2 380.3L196.5 388.1ZM184.5 400.2L180.5 409.9L180.5 393.2ZM188.5 393.2L184.5 400.2L180.5 393.2ZM184.5 400.2L196.7 397.6L191.8 405.7ZM196.7 397.6L184.5 400.2L188.5 393.2ZM196.7 397.6L188.5 393.2L196.5 388.1ZM205.2 395.3L196.7 397.6L196.5 388.1ZM391.2 503.4L395.2 496.5L403.5 500.8ZM383.2 503.4L391.2 503.4L390.1 513.1ZM395.2 496.5L391.2 503.4L387.2 496.5ZM391.2 503.4L383.2 503.4L387.2 496.5ZM482.6 496.5L486.6 489.6L490.6 496.5ZM473.8 496.9L482.6 496.5L476.7 505.9ZM486.6 489.6L482.6 496.5L476.3 487.8ZM482.6 496.5L473.8 496.9L476.3 487.8ZM403.5 294.3L393.9 290L407.3 290ZM393.9 290L403.5 294.3L391.2 296.9ZM486.6 296.9L474 290L490.6 290ZM383.2 296.9L380.6 290L387.2 290ZM391.2 296.9L383.2 296.9L387.2 290ZM383.2 296.9L391.2 296.9L390.1 306.6ZM380.6 290L383.2 296.9L373.4 299.4ZM373.4 402.7L366.1 397.4L370.5 393.7ZM299.9 388.1L311 394.5L300.1 397.6ZM295.2 302.4L287.9 296.9L300.1 294.3ZM287.9 296.9L279.9 296.9L283.9 290ZM279.9 296.9L273.9 290L283.9 290ZM273.9 290L270 299.4L260.5 290ZM279.9 296.9L270 299.4L273.9 290ZM196.7 294.3L184.5 296.9L180.5 290ZM184.5 296.9L196.7 294.3L191.8 302.4ZM184.5 296.9L180.5 303.3L180.5 290ZM180.5 303.3L184.5 296.9L191.8 302.4ZM180.5 583.1L184.5 592.8L180.5 599.8ZM184.5 592.8L188.5 599.8L180.5 599.8ZM188.5 599.8L184.5 592.8L196.5 594.6ZM184.5 606.7L180.5 623.1L180.5 599.8ZM188.5 599.8L184.5 606.7L180.5 599.8ZM184.5 606.7L188.5 599.8L196.7 604.1ZM210.8 597.3L196.7 604.1L196.5 594.6ZM184.5 503.4L180.5 516.5L180.5 496.5ZM474 703L486.6 696.1L490.6 703ZM486.6 696.1L474 703L476.3 694.3ZM380.6 703L383.2 696.1L387.2 703ZM383.2 696.1L380.6 703L372.9 694.3ZM393.9 703L403.2 697.9L407.3 703ZM482.6 599.8L476.3 591L486.6 592.8ZM482.6 599.8L486.6 592.8L490.6 599.8ZM486.6 606.7L482.6 599.8L490.6 599.8ZM294.5 690L299.9 697.9L287.9 696.1ZM269.5 694.3L273.9 703L260.5 703ZM279.9 606.7L275.9 599.8L283.9 599.8ZM285.8 583.1L287.9 592.8L279.9 592.8ZM279.9 592.8L287.9 592.8L283.9 599.8ZM287.9 592.8L291.9 599.8L283.9 599.8ZM291.9 599.8L287.9 592.8L299.9 594.6ZM180.5 689.7L184.5 696.1L180.5 703ZM184.5 696.1L180.5 689.7L191.2 690ZM184.5 696.1L193.8 703L180.5 703ZM193.8 703L196.5 697.9L207.2 703ZM196.5 697.9L184.5 696.1L191.2 690ZM184.5 696.1L196.5 697.9L193.8 703ZM383.2 606.7L373.4 609.2L379.2 599.8ZM379.2 599.8L373.4 609.2L370.5 600.2ZM594 303.3L590 296.9L594 290ZM590 296.9L594 303.3L587.4 305.5ZM590 296.9L580.7 290L594 290ZM590 696.1L594 689.7L594 703ZM580.7 703L590 696.1L594 703ZM590 696.1L580.7 703L579.6 694.3ZM494.6 592.8L501.3 586.8L506.6 594.6ZM590 592.8L594 583.1L594 599.8ZM586 599.8L590 592.8L594 599.8ZM590 592.8L586 599.8L579.6 591ZM590 489.6L594 476.5L594 496.5ZM590 503.4L586 496.5L594 496.5ZM586 496.5L590 489.6L594 496.5ZM590 489.6L586 496.5L584.4 490.8ZM584.4 490.8L586 496.5L577.2 496.9ZM586 496.5L580.1 505.9L577.2 496.9ZM580.1 505.9L586 496.5L590 503.4ZM579.6 487.8L584.4 490.8L577.2 496.9ZM498.6 496.5L506.6 491.4L506.9 500.8ZM560.7 501.8L568.5 491.1L577.2 496.9ZM506.6 388.1L506.9 397.6L498.6 393.2ZM287.9 400.2L279.9 400.2L283.9 393.2ZM420 395.3L403.5 397.6L403.2 388.1ZM398.6 508.9L391.2 503.4L403.5 500.8ZM482.6 496.5L486.6 503.4L476.7 505.9ZM486.6 503.4L482.6 496.5L490.6 496.5ZM494.6 400.2L493.4 409.8L486.6 400.2ZM498.6 393.2L494.6 400.2L490.6 393.2ZM494.6 400.2L486.6 400.2L490.6 393.2ZM506.9 397.6L494.6 400.2L498.6 393.2ZM357.9 501L365.6 492.4L370.5 496.9ZM506.9 294.3L500.6 290L514 290ZM486.6 296.9L476.7 299.4L474 290ZM501.9 302.4L500.6 290L506.9 294.3ZM403.5 294.3L398.6 302.4L391.2 296.9ZM279.9 386.3L287.9 386.3L283.9 393.2ZM286.7 306.6L279.9 296.9L287.9 296.9ZM279.9 386.3L285.8 376.6L287.9 386.3ZM287.9 592.8L294.5 586.8L299.9 594.6ZM275.9 599.8L270 609.2L267.1 600.2ZM279.9 606.7L270 609.2L275.9 599.8ZM184.5 592.8L191.2 586.8L196.5 594.6ZM191.8 612.2L184.5 606.7L196.7 604.1ZM191.2 483.5L190.3 489.8L184.5 489.6ZM188.5 496.5L184.5 503.4L180.5 496.5ZM184.5 489.6L188.5 496.5L180.5 496.5ZM190.3 489.8L188.5 496.5L184.5 489.6ZM188.5 496.5L190.3 489.8L196.5 491.4ZM391.2 696.1L393.9 703L387.2 703ZM383.2 696.1L391.2 696.1L387.2 703ZM403.2 697.9L391.2 696.1L397.9 690ZM391.2 696.1L403.2 697.9L393.9 703ZM391.2 696.1L383.2 696.1L389.2 686.3ZM506.9 604.1L494.6 606.7L498.6 599.8ZM506.9 604.1L501.9 612.2L494.6 606.7ZM506.6 594.6L506.9 604.1L498.6 599.8ZM520.7 597.5L506.9 604.1L506.6 594.6ZM273.9 703L279.9 696.1L283.9 703ZM279.9 696.1L287.9 696.1L283.9 703ZM279.9 696.1L273.9 703L269.5 694.3ZM279.9 696.1L285.8 686.3L287.9 696.1ZM291.9 599.8L287.9 606.7L283.9 599.8ZM287.9 606.7L279.9 606.7L283.9 599.8ZM287.9 606.7L291.9 599.8L300.1 604.1ZM295.2 612.2L287.9 606.7L300.1 604.1ZM286.7 409.8L279.9 400.2L287.9 400.2ZM389.2 583.1L391.2 592.8L383.2 592.8ZM387.2 599.8L383.2 606.7L379.2 599.8ZM387.2 599.8L379.2 599.8L383.2 592.8ZM383.2 606.7L387.2 599.8L391.2 606.7ZM391.2 592.8L387.2 599.8L383.2 592.8ZM403.2 594.6L391.2 592.8L397.9 586.8ZM279.9 489.6L287.9 489.6L283.9 496.5ZM287.9 489.6L279.9 489.6L285.8 479.8ZM283.9 496.5L287.9 503.4L279.9 503.4ZM594 409.9L590 400.2L594 393.2ZM590 400.2L586 393.2L594 393.2ZM590 400.2L580.1 402.7L586 393.2ZM590 296.9L580.1 299.4L580.7 290ZM580.7 290L580.1 299.4L567.3 290ZM590 696.1L586.6 687.9L594 689.7ZM492.6 583.1L494.6 592.8L486.6 592.8ZM586.6 481.4L590 489.6L584.4 490.8ZM498.6 496.5L494.6 489.6L506.6 491.4ZM494.6 489.6L486.6 489.6L492.6 479.8ZM486.6 489.6L494.6 489.6L490.6 496.5ZM494.6 489.6L498.6 496.5L490.6 496.5ZM494.6 503.4L498.6 496.5L506.9 500.8ZM501.9 508.9L494.6 503.4L506.9 500.8ZM498.6 496.5L494.6 503.4L490.6 496.5ZM494.6 503.4L486.6 503.4L490.6 496.5ZM486.6 503.4L494.6 503.4L493.4 513.1ZM512.9 395.6L506.9 397.6L506.6 388.1ZM486.6 386.3L494.6 386.3L490.6 393.2ZM486.6 386.3L492.6 376.6L494.6 386.3ZM259.5 395.2L262.9 384.4L267.1 393.7ZM270 402.7L259.5 395.2L267.1 393.7ZM501.9 405.7L494.6 400.2L506.9 397.6ZM486.6 296.9L494.6 296.9L493.4 306.6ZM494.6 296.9L486.6 296.9L490.6 290ZM500.6 290L494.6 296.9L490.6 290ZM501.9 302.4L494.6 296.9L500.6 290ZM366.1 397.4L359.3 383.4L370.5 393.7ZM279.9 400.2L275.9 393.2L283.9 393.2ZM275.9 393.2L279.9 386.3L283.9 393.2ZM275.9 393.2L270 402.7L267.1 393.7ZM270 402.7L275.9 393.2L279.9 400.2ZM275.9 393.2L269.5 384.5L279.9 386.3ZM269.5 384.5L275.9 393.2L267.1 393.7ZM184.5 503.4L196.7 500.8L191.8 508.9ZM188.5 496.5L196.7 500.8L184.5 503.4ZM196.7 500.8L188.5 496.5L196.5 491.4ZM204.6 489.8L196.7 500.8L196.5 491.4ZM494.6 696.1L500.6 703L490.6 703ZM486.6 696.1L494.6 696.1L490.6 703ZM500.6 703L506.6 697.9L514 703ZM506.6 697.9L494.6 696.1L501.3 690ZM494.6 696.1L506.6 697.9L500.6 703ZM476.7 609.2L482.6 599.8L486.6 606.7ZM482.6 599.8L473.8 600.2L476.3 591ZM473.8 600.2L468.6 596.8L476.3 591ZM476.7 609.2L473.8 600.2L482.6 599.8ZM287.9 606.7L286.7 616.3L279.9 606.7ZM403.2 594.6L395.2 599.8L391.2 592.8ZM387.2 599.8L395.2 599.8L391.2 606.7ZM395.2 599.8L387.2 599.8L391.2 592.8ZM287.9 489.6L294.5 483.5L299.9 491.4ZM279.9 489.6L275.9 496.5L269.5 487.8ZM270 505.9L275.9 496.5L279.9 503.4ZM275.9 496.5L283.9 496.5L279.9 503.4ZM275.9 496.5L279.9 489.6L283.9 496.5ZM287.9 503.4L300.1 500.8L295.2 508.9ZM312.2 489.8L300.1 500.8L299.9 491.4ZM287.9 503.4L286.7 513.1L279.9 503.4ZM580.1 402.7L577.2 393.7L586 393.2ZM586 393.2L577.2 393.7L579.6 384.5ZM577.2 393.7L568.1 395.3L579.6 384.5ZM494.6 489.6L501.3 483.5L506.6 491.4ZM476.3 384.5L482.6 393.2L473.8 393.7ZM486.6 386.3L482.6 393.2L476.3 384.5ZM482.6 393.2L476.7 402.7L473.8 393.7ZM476.7 402.7L482.6 393.2L486.6 400.2ZM486.6 400.2L482.6 393.2L490.6 393.2ZM482.6 393.2L486.6 386.3L490.6 393.2ZM492.6 686.3L494.6 696.1L486.6 696.1ZM403.5 604.1L398.6 612.2L391.2 606.7ZM395.2 599.8L403.5 604.1L391.2 606.7ZM403.5 604.1L395.2 599.8L403.2 594.6ZM403.5 604.1L403.2 594.6L412 598.1ZM291.9 496.5L287.9 489.6L299.9 491.4ZM300.1 500.8L291.9 496.5L299.9 491.4ZM291.9 496.5L300.1 500.8L287.9 503.4ZM287.9 489.6L291.9 496.5L283.9 496.5ZM291.9 496.5L287.9 503.4L283.9 496.5ZM391.2 386.3L397.9 380.3L403.2 388.1ZM372.9 384.5L379.2 393.2L370.5 393.7ZM379.2 393.2L373.4 402.7L370.5 393.7ZM398.6 405.7L391.2 400.2L403.5 397.6ZM391.2 386.3L383.2 386.3L389.2 376.6ZM383.2 386.3L379.2 393.2L372.9 384.5ZM383.2 386.3L391.2 386.3L387.2 393.2ZM379.2 393.2L383.2 386.3L387.2 393.2ZM383.2 400.2L391.2 400.2L390.1 409.8ZM379.2 393.2L383.2 400.2L373.4 402.7ZM383.2 400.2L379.2 393.2L387.2 393.2ZM391.2 400.2L383.2 400.2L387.2 393.2ZM391.2 386.3L395.2 393.2L387.2 393.2ZM395.2 393.2L391.2 400.2L387.2 393.2ZM391.2 400.2L395.2 393.2L403.5 397.6ZM403.5 397.6L395.2 393.2L403.2 388.1ZM395.2 393.2L391.2 386.3L403.2 388.1ZM259.5 490.6L267.1 496.9L250.9 501.7ZM267.1 496.9L275.9 496.5L270 505.9ZM275.9 496.5L267.1 496.9L269.5 487.8Z"/><path fill="#a560e2" stroke="#a560e2" stroke-width="0.3" d="M407.3 290L420.6 290L421.5 301.1ZM307.3 383.7L299.9 388.1L294.5 380.3ZM300.1 294.3L313.9 290L309.7 300.6ZM359.6 690.8L372.9 694.3L367.2 703ZM310.6 609.2L299.9 594.6L319 596.4ZM590 606.7L594 623.1L587.4 615.2ZM389.2 479.8L383.2 489.6L379.9 481.4ZM391.2 489.6L389.2 479.8L397.9 483.5ZM414.9 501.4L403.2 491.4L420.2 490.6ZM473.8 496.9L461.1 489.9L476.3 487.8ZM486.6 489.6L483.3 481.4L492.6 479.8ZM483.3 481.4L486.6 489.6L476.3 487.8ZM373.4 505.9L383.2 503.4L380.7 512ZM383.2 503.4L390.1 513.1L380.7 512ZM383.2 489.6L372.9 487.8L379.9 481.4ZM460.6 290L474 290L460.8 301.9ZM459.7 395.3L465.9 384.7L473.8 393.7ZM386.3 314.2L380.7 305.5L390.1 306.6ZM373.4 299.4L362.9 301.3L367.2 290ZM362.9 301.3L353.9 290L367.2 290ZM180.5 303.3L191.8 302.4L180.5 316.6ZM247.2 290L260.5 290L258.8 302.1ZM204.6 489.8L216.4 489.2L212 502.4ZM353.9 703L359.6 690.8L367.2 703ZM413.9 690.7L420.6 703L407.3 703ZM486.6 606.7L493.4 616.3L484 615.2ZM313.9 703L299.9 697.9L306.6 692.4ZM269.5 694.3L260.5 703L253.6 691.5ZM360.3 596.7L372.9 591L370.5 600.2ZM568.1 395.3L562.1 384.4L579.6 384.5ZM586.6 378.2L590 386.3L579.6 384.5ZM590 386.3L586.6 378.2L594 369.9ZM594 303.3L589 313.1L587.4 305.5ZM579.6 591L577.2 600.2L568.4 585.1ZM580.1 609.2L590 606.7L587.4 615.2ZM180.5 409.9L184.5 400.2L191.8 405.7ZM196.7 397.6L197.7 408.1L191.8 405.7ZM197.7 408.1L196.7 397.6L205.2 395.3ZM210.8 383.9L205.2 395.3L196.5 388.1ZM468.7 407.3L459.7 395.3L473.8 393.7ZM476.7 402.7L468.7 407.3L473.8 393.7ZM420 395.3L403.2 388.1L414.2 383.4ZM453.7 500.9L461.1 489.9L469.3 500.2ZM506.9 294.3L514 290L513.8 303.6ZM380.7 305.5L383.2 296.9L390.1 306.6ZM383.2 296.9L380.7 305.5L373.4 299.4ZM380.7 372.4L389.2 376.6L379.9 378.2ZM311 394.5L299.9 388.1L307.3 383.7ZM300.1 397.6L311 394.5L306.1 409.1ZM295.2 302.4L300.1 294.3L309.7 300.6ZM260.5 290L270 299.4L258.8 302.1ZM270 299.4L279.9 296.9L277.3 305.5ZM196.7 294.3L203.8 301L191.8 302.4ZM203.8 301L196.7 294.3L207.2 290ZM210.8 597.3L207 609.2L196.7 604.1ZM184.5 503.4L191.8 508.9L180.5 516.5ZM469.3 691.2L474 703L460.6 703ZM474 703L469.3 691.2L476.3 694.3ZM403.2 697.9L413.9 690.7L407.3 703ZM501.9 612.2L493.4 616.3L494.6 606.7ZM299.9 697.9L294.5 690L306.6 692.4ZM285.8 686.3L294.5 690L287.9 696.1ZM310.6 609.2L295.2 612.2L300.1 604.1ZM196.5 697.9L197.7 690.2L207.2 703ZM197.7 690.2L196.5 697.9L191.2 690ZM360.3 596.7L351.9 609.6L347 595.6ZM380.7 615.2L383.2 606.7L390.1 616.3ZM373.4 609.2L365.6 608.3L370.5 600.2ZM380.7 615.2L373.4 609.2L383.2 606.7ZM483.3 584.7L476.3 591L473.8 585.7ZM476.3 591L483.3 584.7L486.6 592.8ZM594 583.1L590 592.8L586.6 584.7ZM590 592.8L579.6 591L586.6 584.7ZM567.9 610.6L559.6 595.6L577.2 600.2ZM580.1 609.2L567.9 610.6L577.2 600.2ZM568.5 491.1L579.6 487.8L577.2 496.9ZM580.1 505.9L560.7 501.8L577.2 496.9ZM494.6 386.3L492.6 376.6L501.3 380.3ZM465.9 384.7L476.3 384.5L473.8 393.7ZM188.1 371.3L184.5 386.3L180.5 369.9ZM188.1 371.3L191.2 380.3L184.5 386.3ZM403.2 388.1L397.9 380.3L414.2 383.4ZM391.2 503.4L398.6 508.9L390.1 513.1ZM486.6 503.4L484 512L476.7 505.9ZM486.6 503.4L493.4 513.1L484 512ZM484 408.7L476.7 402.7L486.6 400.2ZM493.4 409.8L484 408.7L486.6 400.2ZM357.9 501L353.1 491L365.6 492.4ZM373.4 505.9L357.9 501L370.5 496.9ZM474 290L476.7 299.4L460.8 301.9ZM501.9 302.4L506.9 294.3L513.8 303.6ZM391.2 296.9L398.6 302.4L390.1 306.6ZM295.2 302.4L286.7 306.6L287.9 296.9ZM279.9 296.9L286.7 306.6L277.3 305.5ZM287.9 386.3L285.8 376.6L294.5 380.3ZM285.8 376.6L279.9 386.3L276.5 378.2ZM294.5 586.8L287.9 592.8L285.8 583.1ZM276.5 584.7L285.8 583.1L279.9 592.8ZM269.5 591L276.5 584.7L279.9 592.8ZM270 609.2L255.5 608.4L267.1 600.2ZM270 609.2L279.9 606.7L277.3 615.2ZM191.2 586.8L184.5 592.8L180.5 583.1ZM184.5 606.7L191.8 612.2L180.5 623.1ZM207 609.2L191.8 612.2L196.7 604.1ZM191.2 483.5L184.5 489.6L180.5 476.5ZM190.3 489.8L191.2 483.5L196.5 491.4ZM191.2 483.5L197.4 479.2L196.5 491.4ZM483.3 687.9L486.6 696.1L476.3 694.3ZM469.3 691.2L483.3 687.9L476.3 694.3ZM397.9 690L391.2 696.1L389.2 686.3ZM383.2 696.1L379.9 687.9L389.2 686.3ZM379.9 687.9L383.2 696.1L372.9 694.3ZM476.3 591L468.6 596.8L473.8 585.7ZM501.9 612.2L506.9 604.1L515.8 607.8ZM506.9 604.1L520.7 597.5L515.8 607.8ZM286.7 409.8L287.9 400.2L295.2 405.7ZM279.9 400.2L286.7 409.8L277.3 408.7ZM391.2 592.8L389.2 583.1L397.9 586.8ZM391.2 606.7L398.6 612.2L390.1 616.3ZM403.2 594.6L397.9 586.8L406.1 585.7ZM412 598.1L403.2 594.6L406.1 585.7ZM590 400.2L594 409.9L587.4 408.7ZM580.1 402.7L574.6 407.2L568.1 395.3ZM580.1 402.7L590 400.2L587.4 408.7ZM580.1 299.4L590 296.9L587.4 305.5ZM580.1 299.4L568.5 302.4L567.3 290ZM586.6 687.9L590 696.1L579.6 694.3ZM594 689.7L586.6 687.9L594 676.4ZM483.3 584.7L492.6 583.1L486.6 592.8ZM492.6 583.1L501.3 586.8L494.6 592.8ZM587.4 512L590 503.4L594 516.5ZM587.4 512L580.1 505.9L590 503.4ZM579.6 487.8L586.6 481.4L584.4 490.8ZM590 489.6L586.6 481.4L594 476.5ZM493.4 513.1L494.6 503.4L501.9 508.9ZM554.9 395.8L562.1 384.4L568.1 395.3ZM506.9 397.6L512.9 395.6L508.4 407.7ZM512.9 395.6L519.8 382.7L527.7 394.3ZM512.9 395.6L506.6 388.1L519.8 382.7ZM486.6 386.3L476.3 384.5L483.3 378.2ZM492.6 376.6L486.6 386.3L483.3 378.2ZM210.8 383.9L215.8 395.9L205.2 395.3ZM276.5 481.4L279.9 489.6L269.5 487.8ZM279.9 489.6L276.5 481.4L285.8 479.8ZM259.5 395.2L245.3 395.2L251.3 385.2ZM262.9 384.4L259.5 395.2L251.3 385.2ZM270 402.7L279.9 400.2L277.3 408.7ZM259.5 395.2L270 402.7L264 407.8ZM494.6 400.2L501.9 405.7L493.4 409.8ZM501.9 405.7L506.9 397.6L508.4 407.7ZM484 305.5L476.7 299.4L486.6 296.9ZM484 305.5L486.6 296.9L493.4 306.6ZM494.6 314L484 305.5L493.4 306.6ZM494.6 296.9L501.9 302.4L493.4 306.6ZM405.4 301.1L398.6 302.4L403.5 294.3ZM405.4 301.1L403.5 294.3L407.3 290ZM351.2 396.1L359.3 383.4L366.1 397.4ZM359.3 383.4L372.9 384.5L370.5 393.7ZM279.9 386.3L269.5 384.5L276.5 378.2ZM262.9 384.4L269.5 384.5L267.1 393.7ZM277.3 512L270 505.9L279.9 503.4ZM256.9 585.5L269.5 591L267.1 600.2ZM196.7 500.8L204.6 489.8L212 502.4ZM476.7 609.2L486.6 606.7L484 615.2ZM453.8 598L468.6 596.8L459.7 608.7ZM468.6 596.8L473.8 600.2L459.7 608.7ZM473.8 600.2L476.7 609.2L459.7 608.7ZM276.5 687.9L279.9 696.1L269.5 694.3ZM279.9 696.1L276.5 687.9L285.8 686.3ZM285.8 686.3L276.5 687.9L284.3 678.9ZM286.7 616.3L287.9 606.7L295.2 612.2ZM279.9 606.7L286.7 616.3L277.3 615.2ZM372.9 591L379.9 584.7L383.2 592.8ZM379.9 584.7L389.2 583.1L383.2 592.8ZM412 598.1L427 598.2L419 607.8ZM294.5 483.5L287.9 489.6L285.8 479.8ZM300.1 500.8L298.4 515.1L295.2 508.9ZM320.2 501.7L300.1 500.8L312.2 489.8ZM286.7 513.1L287.9 503.4L295.2 508.9ZM286.7 513.1L277.3 512L279.9 503.4ZM577.2 393.7L580.1 402.7L568.1 395.3ZM501.3 483.5L494.6 489.6L492.6 479.8ZM506.6 491.4L501.3 483.5L505.3 477.9ZM255.5 608.4L248.9 597.7L267.1 600.2ZM248.9 597.7L256.9 585.5L267.1 600.2ZM494.6 696.1L492.6 686.3L501.3 690ZM483.3 687.9L492.6 686.3L486.6 696.1ZM506.6 697.9L507.4 691.7L514 703ZM507.4 691.7L506.6 697.9L501.3 690ZM403.5 604.1L412 598.1L419 607.8ZM397.9 380.3L391.2 386.3L389.2 376.6ZM391.2 400.2L398.6 405.7L390.1 409.8ZM246 490.5L259.5 490.6L250.9 501.7ZM389.2 376.6L383.2 386.3L379.9 378.2ZM383.2 386.3L372.9 384.5L379.9 378.2ZM380.7 408.7L383.2 400.2L390.1 409.8ZM383.2 400.2L380.7 408.7L373.4 402.7ZM250.9 501.7L267.1 496.9L270 505.9ZM267.1 496.9L259.5 490.6L269.5 487.8Z"/><path fill="none" stroke="#000" stroke-width="1.0" d="M580.1 402.7L574.6 407.2M486.6 386.3L483.3 378.2M446.5 536.7L455.9 549.9M439.4 501.5L453.7 500.9M577.2 496.9L584.4 490.8M408.9 655.7L414.3 666.7M442.9 360.6L453.1 359.6M365.9 420.5L373.8 433.5M277.6 525.8L286.9 538.4M196.7 397.6L191.8 405.7M529.3 419.2L520.6 431.3M594 356.6L582 348.5M283.9 393.2L291.9 393.2M484 305.5L494.6 314M460.9 538.2L467.7 548.3M493.4 409.8L501.5 419M367.2 703L380.6 703M222.2 525.2L238.6 526M381 418.4L386.1 431.3M514.2 371.6L531.4 372.4M366.8 656.2L379.9 656M291.9 393.2L287.9 400.2M285.8 479.8L294.5 483.5M505.8 550.4L513.7 559.1M386.3 314.2L392.4 325.4M180.5 316.6L180.5 330M238.6 526L250.1 525.7M259 538.9L273.2 538.9M476.3 694.3L469.3 691.2M350.8 560.5L348.9 573.6M429.4 433.2L420.5 443.5M402.6 666.8L414.3 666.7M238.9 599.5L244.7 608.4M294.5 483.5L299.9 491.4M191.2 380.3L188.1 371.3M399.4 314.6L406.1 325.1M398.6 302.4L390.1 306.6M557 562.8L560.5 573.4M273.2 538.9L286.9 538.4M269.5 694.3L260.5 703M305.2 549.4L319 549.8M373.4 299.4L367.2 290M535.8 478.7L530.2 489.6M345.6 312.6L359.4 313.2M462.6 441.6L466.7 455.2M287.9 696.1L285.8 686.3M506 454.8L517.3 466.8M327 490.2L320.2 501.7M300.1 397.6L299.9 388.1M390.1 306.6L380.7 305.5M390.1 616.3L399.3 621.1M180.5 623.1L180.5 636.4M467.3 337.6L474.1 350.4M269.5 694.3L260.1 680.7M319 549.8L331.7 549.6M581.6 324.9L574.8 337.9M378.7 325.1L392.4 325.4M339.7 489.8L331.5 503.2M403.2 594.6L406.1 585.7M258 467.3L252.7 478.4M370.5 496.9L372.9 487.8M479.6 336.6L486.9 348.6M286.7 616.3L285.6 632.5M364.4 371.3L359.3 383.4M366.8 561.9L378.8 562M216.7 347.2L210.4 359.8M392.4 325.4L406.1 325.1M521.6 455L517.3 466.8M425.8 335.8L440.2 336.3M279.9 592.8L285.8 583.1M291.3 620.2L295.8 632.1M494.6 296.9L486.6 296.9M412.8 571.6L426.3 571.9M483.3 687.9L486.8 679.5M493.4 616.3L499.3 630.9M440.2 336.3L451.7 337.7M327.2 703L332.8 690.6M501.9 508.9L493.4 513.1M391.2 696.1L403.2 697.9M490.6 496.5L486.6 489.6M405.5 631.6L411.4 645.7M554.2 584.4L568.4 585.1M492.6 479.8L487.9 466M474.1 350.4L486.9 348.6M270 402.7L259.5 395.2M493.4 513.1L484 512M482.6 599.8L476.7 609.2M498.6 496.5L494.6 489.6M217 300.9L225.5 314.6M492.6 686.3L501.3 690M515.8 607.8L527.8 609.6M521.7 361.1L534.5 360.8M395.2 496.5L403.2 491.4M398.6 405.7L415.4 407.9M267.1 496.9L259.5 490.6M359.3 524.3L367.3 538.8M501.3 690L506.6 697.9M231.2 303L236.2 312.9M407.3 703L420.6 703M466.4 645L459.7 655.5M309.7 300.6L305 315M210.8 383.9L223.3 384.1M334.1 668L339 680M594 703L590 696.1M379.9 378.2L364.4 371.3M501.6 656.4L493.9 667M180.5 356.6L180.5 369.9M568.5 302.4L576.6 313.8M473 420L481.8 431.3M512.9 395.6L527.7 394.3M184.5 386.3L196.5 388.1M184.5 592.8L180.5 583.1M353.5 538L367.3 538.8M532.4 667.5L542.6 678.9M214.9 326.2L212.4 337.8M283.9 496.5L275.9 496.5M520.6 431.3L515.6 443.1M527.7 394.3L541.7 396.3M373.4 609.2L374.4 619.4M449.2 559.4L440.2 572.3M272 420.5L284.4 419.8M446.8 488.6L439.4 501.5M279.9 503.4L286.7 513.1M283.9 393.2L275.9 393.2M427 598.2L419 607.8M383.2 400.2L379.2 393.2M479.8 313L473.9 324.8M351.2 443.1L346 454.1M180.5 663L180.5 676.4M373.8 433.5L379.3 443.9M397.8 550.6L412.6 550.2M310.7 656.7L326 656.8M554.6 442L561.8 454.4M284.4 419.8L299.8 421.6M461.1 489.9L453.7 500.9M387.2 290L383.2 296.9M318.6 432.2L330.3 430.7M191.1 679.2L202.1 679.9M387.2 599.8L395.2 599.8M513.6 325.8L521.8 337.5M403.5 604.1L411.5 618.8M561.9 335.9L570.6 349.5M373.4 402.7L365.9 420.5M231.1 491.1L226.6 500.6M391.2 296.9L403.5 294.3M192.5 467.2L197.4 479.2M330.3 430.7L345.4 433.9M527.4 325.3L537.5 335.9M236.5 692.1L253.6 691.5M198 360.9L205.2 373.2M247.2 290L258.8 302.1M312.8 349.2L307.4 360.5M454.9 454.2L459.4 466.8M209.3 455.6L223.5 453.4M414.9 501.4L419.1 512.1M369.1 443.3L379.3 443.9M387.2 496.5L391.2 489.6M390.1 513.1L405.7 515.2M374.4 619.4L367 632M490.6 393.2L498.6 393.2M574.8 337.9L570.6 349.5M507.4 574.5L519.4 574.6M359 360.6L352.1 372.3M428 503.5L432.7 512.4M184.5 696.1L193.8 703M379.2 599.8L370.5 600.2M353.9 703L359.6 690.8M295.8 632.1L290.6 644.8M413.3 456.1L430.2 454.3M403.5 604.1L403.2 594.6M492.6 479.8L501.3 483.5M210.4 359.8L205.2 373.2M403.5 604.1L419 607.8M440 619.9L446.2 630.6M554.9 395.8L548.3 408.3M334.4 596L347 595.6M499.3 630.9L508 646M486.6 400.2L476.7 402.7M447.1 467.8L459.4 466.8M594 393.2L590 400.2M426.6 406.9L421.5 420.2M226.3 620.7L238.7 619.1M486.6 696.1L476.3 694.3M506.9 397.6L506.6 388.1M557.5 632.6L567 632.5M400.8 643.9L408.9 655.7M439.5 408.4L434.3 419.4M286.9 538.4L294.1 550.5M313 631.5L325.7 630M508.4 407.7L501.5 419M184.5 503.4L180.5 516.5M586 496.5L577.2 496.9M453.6 526.8L446.5 536.7M414.3 666.7L407.6 679.8M196.7 500.8L204.6 489.8M433.3 657.6L440.3 668.4M180.5 676.4L185.8 667.8M326.8 678.8L317.4 690M514 290L513.8 303.6M331.7 549.6L339.6 561.7M358.9 644.3L369.9 644.7M191.2 380.3L196.5 388.1M191.2 586.8L180.5 583.1M429.2 667.3L422.5 680.6M487 537L494.4 549.4M196.7 500.8L204.5 516.5M476.7 299.4L474 290M389.2 479.8L378.4 466.9M283.9 290L300.1 294.3M451.2 432.2L462.6 441.6M378.8 562L386.8 573.5M279.9 400.2L275.9 393.2M319 596.4L324 608.4M393.9 290L407.3 290M536.5 550.1L544 560.6M440.2 572.3L447.8 586.6M576.6 313.8L569 325.4M447.2 442.9L439.8 454.4M586.6 481.4L572.4 479.4M203.8 301L217 300.9M467.1 432L473.3 442.9M561.8 479.7L568.5 491.1M287.9 386.3L285.8 376.6M294.5 483.5L303.9 479.9M540.7 539.1L555.1 537.7M353.1 491L357.9 501M406.1 325.1L400.2 337.2M283.9 599.8L291.9 599.8M425.2 313.9L435.8 324.8M594 330L594 343.3M447.3 609L440 619.9M180.5 330L197.2 337.2M580.6 561.2L586.9 572.6M296.6 537.7L312.5 537.5M284.3 678.9L296.6 679.4M285.8 686.3L296.6 679.4M212.4 337.8L204.1 347M217 300.9L231.2 303M380.7 305.5L374.4 314.2M532.6 454.8L541.8 468.4M189.6 560.2L204.2 560.8M287.9 592.8L299.9 594.6M459.7 608.7L454 618.5M319.4 384.2L325.1 396.2M413.9 690.7L426.3 692.7M541 608.8L533.6 619.7M246.4 349L251.1 360.9M386.3 314.2L399.4 314.6M549.4 455.7L553.4 468M237.8 574.3L250.4 572.9M265.6 337.9L279.5 338M508.1 336.5L515.9 349.8M476.3 591L468.6 596.8M220.5 290L217 300.9M387.2 599.8L379.2 599.8M290.9 361.3L298.8 371.6M418.3 324.7L435.8 324.8M492.6 686.3L499.5 678.6M594 409.9L584.1 419.7M196.7 397.6L205.2 395.3M232.9 393.6L225.1 406.5M324.4 585.3L339 585.9M317.2 619.6L325.7 630M391.2 386.3L403.2 388.1M506 454.8L521.6 455M467.3 337.6L479.6 336.6M285.8 376.6L290.9 361.3M244.7 631.4L249.3 644.4M405.7 515.2L400.7 526.8M541.8 468.4L553.4 468M486.6 503.4L493.4 513.1M498.8 350.4L515.9 349.8M419.1 512.1L412.7 526.8M290.6 644.8L286.5 656.7M244 301.2L252.2 311.8M312.2 489.8L327 490.2M389.2 376.6L404.4 371.9M590 696.1L586.6 687.9M496.8 644.3L501.6 656.4M514.1 679.7L523.3 690.6M367.3 538.8L359.7 548.8M548.6 360.7L562.5 362.5M460.8 301.9L453.5 312.8M493.4 616.3L480 620M326 656.8L318.1 669.4M528.6 514.8L540.8 513.2M385.7 526.2L392.2 537.4M196.7 500.8L191.8 508.9M299.8 421.6L304.4 431.3M580.1 609.2L574.7 619.7M507.4 666.9L499.5 678.6M230.9 513.7L244.3 513.7M420.6 703L433.9 703M283.9 290L313.9 290M337.5 302L332.8 313.5M528.9 656.1L532.4 667.5M380.1 535.6L373.1 550.4M188.5 393.2L184.5 386.3M299.9 594.6L313 584.5M236.5 383.2L251.3 385.2M403.2 697.9L407.3 703M295.2 405.7L299.8 421.6M594 599.8L590 592.8M359.8 667.5L366.2 678.6M501.9 302.4L494.6 314M286.7 409.8L277.3 408.7M397.9 380.3L404.4 371.9M345.4 433.9L338.6 443.3M433.9 290L447.3 290M476.7 505.9L473.1 515.8M427.1 547.2L419.4 559.5M501.5 419L506.9 431.3M277.3 408.7L270 402.7M501.9 612.2L515.8 607.8M287.9 400.2L300.1 397.6M440.8 596L434 607.8M372.4 573.9L366.1 584.8M379.3 443.9L386.5 454.6M507.6 313.4L513.6 325.8M231.5 583.3L224.9 595.2M548.7 432.6L540.4 441.5M387.2 703L380.6 703M475.4 562.5L465.5 572.5M313.8 467.3L303.9 479.9M300.1 397.6L306.1 409.1M383.2 296.9L390.1 306.6M501.1 325.5L493.1 336.4M300.1 604.1L295.2 612.2M453.8 598L447.3 609M383.2 386.3L391.2 386.3M522.3 314.1L527.4 325.3M430.2 454.3L419.8 467.1M180.5 676.4L180.5 689.7M558 421.6L568.7 420M586.6 584.7L594 583.1M582.5 444.8L587.4 454.5M311.9 419.8L325.9 421M284.2 562.2L298.3 561.1M475 466L470.3 478M190.7 441.6L204.6 442M441.8 383L434.4 396.1M357.9 501L367.9 514.2M594 703L580.7 703M372.9 694.3L379.9 687.9M218.8 466.5L225.5 479.4M330.8 574.5L348.9 573.6M391.2 503.4L390.1 513.1M582 348.5L576.1 360.9M383.2 606.7L379.2 599.8M411.5 618.8L405.5 631.6M452.5 383.7L447.5 396M224.3 361.6L230.6 372M238.8 455.1L251.8 455.3M338.2 350L332.4 359.9M494.6 503.4L486.6 503.4M506.6 594.6L520.7 597.5M594 599.8L594 583.1M325.7 630L332 642.7M447.8 586.6L461.7 586.4M425.2 620L419.8 631.3M494.6 400.2L486.6 400.2M391.2 489.6L389.2 479.8M237.4 360.6L245.5 374.7M397.9 586.8L406.1 585.7M273.2 466.6L282.9 466.7M197.7 408.1L191.8 420.1M277.3 305.5L280 314.2M384.8 359.8L380.7 372.4M196.5 697.9L207.2 703M561.9 335.9L574.8 337.9M286.7 513.1L289.5 525M586.6 584.7L575.1 573.3M369.9 644.7L366.8 656.2M351.9 609.6L365.6 608.3M577.2 600.2L559.6 595.6M210.7 407.6L203.3 419.8M454.4 408.1L462.1 419M476.7 609.2L468 619.1M224.8 644.1L231.9 655.6M198 360.9L210.4 359.8M486.6 386.3L476.3 384.5M340 631.6L332 642.7M533.6 619.7L547.2 620.8M586 393.2L590 386.3M579.6 384.5L562.1 384.4M277.6 525.8L273.2 538.9M587.4 615.2L583.9 631.8M251.2 620.3L264.6 618.4M484 305.5L479.8 313M460.9 538.2L455.9 549.9M230.6 372L245.5 374.7M580.1 505.9L575.3 524.6M493.4 513.1L492.1 525.2M480.2 525.7L487 537M421.4 655.7L414.3 666.7M381 418.4L373.8 433.5M486.6 696.1L474 703M468.7 407.3L462.1 419M312.5 537.5L319 549.8M180.5 496.5L184.5 503.4M505.8 550.4L499.6 562M486.6 606.7L476.7 609.2M455.5 666.6L460.8 681.9M197.6 643L210.4 643.3M494.6 592.8L501.3 586.8M391.9 420.1L386.1 431.3M218 654.7L231.9 655.6M353.7 679.1L342.8 691.9M359.7 548.8L366.8 561.9M461.5 513L473.1 515.8M279.9 296.9L277.3 305.5M238.9 599.5L231.7 607.8M399.4 314.6L392.4 325.4M557 562.8L551.8 574.6M483.3 687.9L469.3 691.2M231.9 655.6L243.8 654.6M476.7 299.4L460.8 301.9M406.2 561.8L412.8 571.6M481.8 431.3L488.5 444M230.7 443.3L238.8 455.1M435.8 324.8L440.2 336.3M347 595.6L351.9 609.6M570.6 561.4L560.5 573.4M317.7 572.2L324.4 585.3M554 703L547.4 690.1M264.7 667.3L278.8 666.8M465.5 572.5L473.8 585.7M473.3 442.9L466.7 455.2M190.5 323.6L197.2 337.2M280 455.6L273.2 466.6M300.1 294.3L309.7 300.6M210.1 313.4L225.5 314.6M250.9 501.7L244.3 513.7M279.9 489.6L285.8 479.8M310.5 678.3L326.8 678.8M283.9 703L273.9 703M236.1 338.1L226.9 348.5M244 301.2L258.8 302.1M594 529.8L583.8 538.1M286.8 444L297.7 444.7M279.9 592.8L276.5 584.7M433.3 489L439.4 501.5M287.9 503.4L286.7 513.1M277.3 615.2L285.6 632.5M243.5 326.1L258.3 324M555.3 371.1L562.1 384.4M483.3 687.9L474.3 677.5M345.7 384.9L351.2 396.1M441.5 691.9L454.6 691.6M273.1 349.1L277.3 361.6M483.3 584.7L479.6 573.9M594 316.6L589 313.1M576.2 454.7L582.4 466.4M330.6 456.7L346 454.1M379.2 393.2L372.9 384.5M391.2 696.1L397.9 690M258.4 371.9L262.9 384.4M291.3 338.6L303.8 338M434.4 396.1L439.5 408.4M233.9 290L244 301.2M590 696.1L594 689.7M367.9 514.2L372.7 525.2M180.5 330L190.5 323.6M366.3 468.6L378.4 466.9M432.7 512.4L442.2 525.9M419.8 631.3L411.4 645.7M532.6 454.8L549.4 455.7M324.3 349.5L338.2 350M447.1 515.2L453.6 526.8M260.5 703L253.6 691.5M231.2 303L225.5 314.6M207.2 703L197.7 690.2M435.2 633.8L425.8 644.2M320.2 643.3L326 656.8M300.1 397.6L311 394.5M568.6 468.3L582.4 466.4M590 296.9L580.1 299.4M210.2 525.3L218.5 538.9M594 496.5L590 503.4M397.9 483.5L413.4 478.3M269.5 487.8L259.5 490.6M347 502.1L357.9 501M353.7 656.5L359.8 667.5M590 606.7L580.1 609.2M594 649.7L581.6 654.6M521.8 643.3L528.9 656.1M473 420L467.1 432M405.3 538L412.6 550.2M184.5 386.3L191.2 380.3M180.5 496.5L180.5 516.5M555.2 513.3L568.5 514.3M586 599.8L577.2 600.2M191.2 483.5L196.5 491.4M325.9 421L330.3 430.7M193.8 703L207.2 703M415.4 407.9L421.5 420.2M180.5 663L185.8 667.8M532.4 667.5L527.9 678.6M554.8 653.7L560.6 667.5M196.7 397.6L196.5 388.1M455.9 549.9L464 560.4M283.9 393.2L279.9 400.2M204.4 536.4L218.5 538.9M507.4 574.5L515.2 585.7M373.8 433.5L369.1 443.3M447.3 290L460.6 290M547.8 668L542.6 678.9M296.6 679.4L306.6 692.4M345.8 669.6L359.8 667.5M554.6 442L549.4 455.7M389.2 376.6L384.8 359.8M573 430.8L582.5 444.8M499.6 562L507.4 574.5M218.5 538.9L230.7 537.2M520.7 597.5L527.8 609.6M406.4 444.2L413.3 456.1M533.5 313.5L540.2 324.3M567.8 443.7L561.8 454.4M391.7 679.4L407.6 679.8M391.2 296.9L383.2 296.9M324 608.4L332.8 620.5M266.9 548.8L280 550.1M568.5 491.1L560.7 501.8M527.4 325.3L521.8 337.5M398.6 612.2L411.5 618.8M286.7 616.3L277.3 615.2M327.2 290L337.5 302M269.5 694.3L273.9 703M548.4 312.6L556.9 324.9M454.9 454.2L447.1 467.8M373.4 299.4L380.6 290M276.5 481.4L264 478.6M334.8 338.6L324.3 349.5M547.4 690.1L562 689.6M287.9 696.1L299.9 697.9M398.6 508.9L390.1 513.1M473.8 496.9L469.3 500.2M387.2 496.5L383.2 489.6M205.6 466.6L197.4 479.2M353.6 467.2L347.4 478.4M579.6 384.5L568.1 373.5M314.3 561.1L324.1 560.2M419 607.8L425.2 620M398.6 405.7L390.1 409.8M338.3 324.2L354.3 325.3M466.7 455.2L459.4 466.8M251.3 385.2L259.5 395.2M428 503.5L419.1 512.1M353.9 703L342.8 691.9M389.2 686.3L397.9 690M395.2 496.5L391.2 489.6M358.4 573.8L372.4 573.9M379.2 496.5L373.4 505.9M501.3 380.3L514.2 371.6M383.2 592.8L391.2 592.8M440 619.9L435.2 633.8M384.2 335.3L400.2 337.2M499.3 630.9L496.8 644.3M519.8 382.7L512.9 395.6M482.6 496.5L486.6 489.6M522.9 500.5L516.3 514.3M494.6 296.9L501.9 302.4M353.8 630.5L358.9 644.3M372.9 384.5L359.3 383.4M454 618.5L446.2 630.6M207.2 290L203.8 301M420.5 348.9L433.7 348M262.8 360.6L270.1 372.5M225.1 406.5L218.6 417.3M486.6 696.1L494.6 696.1M367 632L369.9 644.7M180.5 393.2L180.5 369.9M400.8 643.9L394.4 655.3M419 607.8L434 607.8M467.4 362.1L482.1 359.9M307.5 524L312.5 537.5M224.3 361.6L237.4 360.6M411.4 645.7L408.9 655.7M434 607.8L447.3 609M482.6 599.8L476.3 591M433.3 657.6L429.2 667.3M559.2 621.5L574.7 619.7M543.7 372L555.3 371.1M487 537L482.7 551.2M486.6 592.8L483.3 584.7M446.7 654.6L440.3 668.4M513.8 303.6L522.3 314.1M507.8 526.8L513.8 538.1M421.5 420.2L429.4 433.2M247.2 290L260.5 290M232.4 680.5L224.7 689.6M283.9 290L279.9 296.9M420 395.3L434.4 396.1M555.3 371.1L568.1 373.5M191.8 508.9L204.5 516.5M501.4 538.5L494.4 549.4M184.5 503.4L196.7 500.8M536.5 550.1L531.8 562M481.1 667.5L486.8 679.5M180.5 463.2L196.4 454.4M224.8 644.1L239.4 644.6M440.2 572.3L432 586.5M467.1 432L462.6 441.6M434.4 396.1L447.5 396M500.6 703L514 703M547.1 550.8L544 560.6M425.2 313.9L418.3 324.7M529.1 300.7L522.3 314.1M580.6 561.2L575.1 573.3M180.5 636.4L180.5 649.7M454 573.6L447.8 586.6M348 548.1L359.7 548.8M256.6 656.1L270.4 655.9M502.9 442L506 454.8M180.5 463.2L180.5 476.5M231 420.3L245.5 421.3M365.6 492.4L357.9 501M283.9 496.5L287.9 489.6M541.8 468.4L535.8 478.7M462.5 324.1L467.3 337.6M279.9 503.4L270 505.9M294.5 690L296.6 679.4M348.9 573.6L356.1 585.8M484 408.7L468.7 407.3M514 703L523.3 690.6M246.4 349L237.4 360.6M393.9 559.8L406.2 561.8M440.7 479.6L446.8 488.6M294.5 586.8L304.4 573.4M373.4 299.4L374.4 314.2M549.4 455.7L541.8 468.4M380.7 408.7L381 418.4M277.9 430.7L293.3 431.6M300.1 604.1L299.9 594.6M506.9 604.1L515.8 607.8M594 330L581.6 324.9M275.9 496.5L267.1 496.9M508.1 336.5L498.8 350.4M387.2 599.8L383.2 606.7M400.6 454.5L406.1 467.3M256.6 348.1L251.1 360.9M440.2 572.3L454 573.6M587.4 512L594 516.5M561.8 454.4L553.4 468M312.1 443.3L325.2 443.5M298.6 467.1L303.9 479.9M391.2 296.9L390.1 306.6M317.2 619.6L313 631.5M391.2 386.3L397.9 380.3M501.9 302.4L493.4 306.6M521.8 337.5L515.9 349.8M454 573.6L465.5 572.5M372.9 694.3L359.6 690.8M307.4 360.5L298.8 371.6M506.6 388.1L512.9 395.6M501.3 690L499.5 678.6M372.9 591L366.1 584.8M501.3 586.8L507.4 574.5M285.8 376.6L277.3 361.6M357.2 454.9L372.8 454.5M403.5 397.6L403.2 388.1M476.7 505.9L473.8 496.9M554.9 349L562.5 362.5M490.6 393.2L486.6 400.2M459.7 395.3L468.7 407.3M224.9 595.2L238.9 599.5M424.5 384.3L434.4 396.1M507.4 691.7L523.3 690.6M476.7 402.7L473.8 393.7M393.7 467.7L406.1 467.3M184.5 386.3L180.5 369.9M594 290L590 296.9M446.2 630.6L440.6 645.3M496.8 644.3L488.8 654.9M553.8 607.8L567.9 610.6M501.9 612.2L493.4 616.3M580.1 299.4L568.5 302.4M594 663L574 668.2M406.1 467.3L419.8 467.1M385.7 526.2L380.1 535.6M522.2 479.5L535.8 478.7M473.1 515.8L480.2 525.7M258.8 302.1L252.2 311.8M344.2 642.9L353.7 656.5M220.5 703L224.7 689.6M579.6 694.3L586.6 687.9M594 393.2L590 386.3M528.9 656.1L522.1 669M257.7 632.9L269.9 632.8M484 615.2L480 620M400.7 526.8L392.2 537.4M535.8 478.7L549 479.4M594 599.8L586 599.8M414.9 501.4L428 503.5M486.6 696.1L492.6 686.3M379.9 656L388.2 667.6M191.8 612.2L180.5 623.1M269.9 632.8L285.6 632.5M560.6 667.5L567.6 680M304 642L320.2 643.3M422.5 680.6L426.3 692.7M501.5 419L492.2 431.9M432.1 539.6L439.4 549.8M428 503.5L439.4 501.5M501.9 405.7L501.5 419M394.4 655.3L402.6 666.8M188.5 599.8L184.5 592.8M230.5 559.7L226.9 574.4M574 668.2L580 679.3M320.2 643.3L332 642.7M401.5 432L406.4 444.2M514.7 419.5L506.9 431.3M339.1 656.9L353.7 656.5M461.7 586.4L453.8 598M482.7 551.2L488.9 561.5M210.2 525.3L222.2 525.2M300.1 500.8L312.6 514.7M522.3 314.1L513.6 325.8M534 570.7L542.2 584.2M414.2 431.1L420.5 443.5M353.7 656.5L366.8 656.2M373.3 667.9L388.2 667.6M276.5 481.4L285.8 479.8M582.5 444.8L576.2 454.7M494.4 549.4L499.6 562M374.4 314.2L378.7 325.1M360.6 431.5L373.8 433.5M594 649.7L587.6 644.5M531.8 562L534 570.7M244.2 538.1L259 538.9M556.9 324.9L561.9 335.9M547.5 596.8L553.8 607.8M388.2 667.6L402.6 666.8M287.9 386.3L299.9 388.1M422.5 680.6L432.9 679.3M218.8 466.5L210.2 476.9M544 560.6L551.8 574.6M283.9 599.8L279.9 606.7M394 442.4L406.4 444.2M540.6 703L534.9 690.9M212 502.4L218.6 514.4M190.2 350.1L198 360.9M332.8 313.5L345.6 312.6M493.8 453.3L502.6 469.1M432.9 679.3L445.5 679.6M453.7 500.9L461.5 513M230.9 469.3L225.5 479.4M451.7 337.7L462.2 349.3M439.8 454.4L454.9 454.2M586.6 687.9L594 676.4M204.1 347L210.4 359.8M237.4 360.6L230.6 372M367.4 325.4L378.7 325.1M548.7 384.4L554.9 395.8M548.5 502.6L555.2 513.3M251.1 360.9L245.5 374.7M480 620L486.5 632M413.1 337.2L425.8 335.8M487.9 466L502.6 469.1M400.7 572.7L412.8 571.6M540.8 632.9L535.8 642.9M270 299.4L264.3 313.5M446.8 348.8L462.2 349.3M264 407.8L272 420.5M480.2 525.7L473.2 538.5M216.4 489.2L231.1 491.1M392.3 634.2L400.8 643.9M440.6 645.3L446.7 654.6M486.6 503.4L476.7 505.9M462.2 349.3L474.1 350.4M493.3 360.3L508.3 360.6M403.5 397.6L415.4 407.9M180.5 529.8L197.9 527M331.9 525.3L337.9 539.1M486.6 606.7L484 615.2M247.2 703L236.5 692.1M180.5 496.5L188.5 496.5M501.9 612.2L506.6 620.4M513.8 538.1L524.9 550.3M548.5 502.6L560.7 501.8M494.6 592.8L492.6 583.1M476.9 656L481.1 667.5M191.2 483.5L180.5 476.5M508.3 360.6L521.7 361.1M184.5 296.9L191.8 302.4M527.3 290L529.1 300.7M210.2 668.3L202.1 679.9M345.8 526L353.5 538M568.1 373.5L580.5 373.6M188.5 496.5L184.5 503.4M279.9 386.3L287.9 386.3M407.3 290L420.6 290M560.3 549.4L570.6 561.4M289.5 525L307.5 524M196.7 500.8L196.5 491.4M541.7 302.3L548.4 312.6M594 290L594 303.3M366.1 584.8L360.3 596.7M448.5 419.6L451.2 432.2M260.1 680.7L253.6 691.5M230.7 443.3L223.5 453.4M528 540.4L524.9 550.3M287.9 606.7L279.9 606.7M317.7 572.2L313 584.5M453.5 312.8L462.5 324.1M307.5 524L318.4 526.2M210.7 573.1L220.7 584.3M554.9 302.4L562.2 312.8M465.5 572.5L461.7 586.4M594 343.3L594 356.6M326.8 537.5L337.9 539.1M586.6 378.2L594 369.9M492.2 431.9L488.5 444M514 703L527.3 703M279.9 606.7L275.9 599.8M330.8 574.5L324.4 585.3M467.6 315.6L473.9 324.8M575.7 550.4L570.6 561.4M279.9 489.6L276.5 481.4M337.9 539.1L353.5 538M180.5 649.7L180.5 663M202.7 325.7L197.2 337.2M594 369.9L580.5 373.6M479.6 573.9L473.8 585.7M287.9 400.2L286.7 409.8M373.1 550.4L386.3 550.3M506.9 431.3L502.9 442M226.9 574.4L231.5 583.3M413.4 314.1L425.2 313.9M527.3 443.9L532.6 454.8M259.6 420.1L272 420.5M433.3 489L428 503.5M287.9 503.4L295.2 508.9M419.8 467.1L413.4 478.3M387.2 703L393.9 703M295.2 302.4L309.7 300.6M514.1 679.7L527.9 678.6M391.2 400.2L383.2 400.2M383.2 296.9L373.4 299.4M568.6 468.3L561.8 479.7M386.3 550.3L397.8 550.6M279.9 696.1L273.9 703M419.4 559.5L433.3 562.1M273.1 349.1L262.8 360.6M540.4 441.5L549.4 455.7M445.8 325.7L462.5 324.1M576.2 454.7L568.6 468.3M304.4 431.3L318.6 432.2M542.5 489.4L548.5 502.6M549.5 337.1L554.9 349M313.9 290L323.2 301.6M433.3 562.1L449.2 559.4M233.9 290L231.2 303M285.2 349L277.3 361.6M465.5 572.5L479.6 573.9M587.4 454.5L582.4 466.4M493.1 336.4L508.1 336.5M482.1 359.9L474.7 370.9M358.3 620.3L367 632M484 305.5L476.7 299.4M479.6 573.9L496.6 574M527.7 394.3L532.7 408.5M332.4 359.9L327 372.2M270 609.2L264.6 618.4M447.1 515.2L442.2 525.9M383.2 592.8L389.2 583.1M594 599.8L594 623.1M476.3 487.8L483.3 481.4M300.1 500.8L320.2 501.7M475.2 633.3L479.9 643.7M541.9 348.8L554.9 349M400.6 454.5L413.3 456.1M391.2 592.8L397.9 586.8M483.3 481.4L492.6 479.8M516.3 514.3L522.7 525.9M587.4 305.5L580.1 299.4M494.6 696.1L506.6 697.9M486.5 632L496.8 644.3M403.2 491.4L413.4 478.3M198.2 620.6L213.6 620.6M521.8 643.3L517 655.2M490.6 703L500.6 703M586 599.8L580.1 609.2M486.6 386.3L492.6 376.6M415.4 407.9L405.8 418.4M535.8 642.9L528.9 656.1M586 393.2L580.1 402.7M554.8 653.7L547.8 668M285.6 632.5L295.8 632.1M554.5 678.1L547.4 690.1M529.3 419.2L531.9 432.7M307.3 383.7L319.4 384.2M428.4 527L421.7 537.4M498.6 496.5L506.6 491.4M384.8 643L394.4 655.3M212.7 550L204.2 560.8M569.4 656.3L560.6 667.5M332 642.7L344.2 642.9M319.4 384.2L331.4 384.9M573 430.8L567.8 443.7M197.7 408.1L210.7 407.6M184.5 489.6L190.3 489.8M391.2 696.1L393.9 703M520.7 597.5L515.8 607.8M594 663L581.6 654.6M258.4 561.8L250.4 572.9M310.5 678.3L306.6 692.4M299.9 697.9L306.6 692.4M313 584.5L319 596.4M202.1 679.9L212.6 692.2M344.2 642.9L358.9 644.3M515.2 585.7L520.7 597.5M476.3 591L473.8 585.7M541.1 420.9L531.9 432.7M429.4 433.2L435.6 442.8M210.7 407.6L225.1 406.5M339.1 421.1L351.4 419.6M412.8 571.6L419.6 584.8M548.4 312.6L540.2 324.3M207 609.2L213.6 620.6M441.1 432.2L447.2 442.9M379.9 656L394.4 655.3M287.9 696.1L294.5 690M223.5 453.4L218.8 466.5M351.4 419.6L365.9 420.5M386.1 431.3L401.5 432M562.2 312.8L556.9 324.9M269.5 694.3L270.7 678.3M581.6 324.9L588.8 337.3M513.7 559.1L531.8 562M339.7 489.8L347 502.1M414.3 666.7L429.2 667.3M579.6 694.3L562 689.6M577.2 393.7L568.1 395.3M401.5 432L414.2 431.1M517.3 466.8L522.2 479.5M434 607.8L425.2 620M420.5 443.5L435.6 442.8M258 467.3L264 478.6M501.3 380.3L502.9 372.3M276.5 687.9L284.3 678.9M197.2 337.2L190.2 350.1M515.8 607.8L506.6 620.4M216.7 347.2L224.3 361.6M359.4 313.2L374.4 314.2M482.6 393.2L486.6 386.3M283.9 703L313.9 703M521.6 455L529.1 467.1M460.8 681.9L474.3 677.5M435.6 442.8L447.2 442.9M285.8 479.8L282.9 466.7M226.9 348.5L237.4 360.6M262.8 360.6L258.4 371.9M427.2 361.3L433.1 373.5M205.2 395.3L197.7 408.1M367 632L358.9 644.3M479.6 454.3L493.8 453.3M204.5 516.5L197.9 527M277.3 361.6L270.1 372.5M406.1 325.1L418.3 324.7M522.1 620.9L515.9 631.6M492.6 479.8L502.6 469.1M517.3 466.8L529.1 467.1M498.6 496.5L506.9 500.8M580.1 402.7L577.2 393.7M451.7 337.7L467.3 337.6M567 632.5L561.1 643.4M305.1 620.8L317.2 619.6M486.6 592.8L476.3 591M594 569.8L580.6 561.2M494.6 503.4L501.9 508.9M507.8 526.8L501.4 538.5M246 490.5L259.5 490.6M466.4 645L476.9 656M486.6 489.6L476.3 487.8M309.7 300.6L318.3 313.3M594 496.5L590 489.6M380.7 631.4L392.3 634.2M574.6 407.2L568.7 420M522.7 525.9L513.8 538.1M379.9 378.2L380.7 372.4M204.5 516.5L218.6 514.4M501.6 656.4L507.4 666.9M499.5 678.6L507.4 691.7M372.7 525.2L380.1 535.6M425.8 644.2L440.6 645.3M300.1 397.6L295.2 405.7M555.1 537.7L560.3 549.4M218.6 514.4L230.9 513.7M420.6 290L433.9 290M501.3 690L507.4 691.7M318.4 526.2L331.9 525.3M205.7 585.1L210.8 597.3M214.9 326.2L224.9 336.7M520.6 431.3L527.3 443.9M459.7 655.5L476.9 656M295.2 405.7L286.7 409.8M270 609.2L255.5 608.4M275.9 599.8L279.9 592.8M283.9 393.2L279.9 386.3M427 598.2L434 607.8M567.3 703L562 689.6M479.8 313L485.3 326.1M594 356.6L594 369.9M220.7 584.3L224.9 595.2M348.9 573.6L339 585.9M204.2 560.8L210.7 573.1M294.5 586.8L292 574.7M331.9 525.3L345.8 526M309.7 300.6L323.2 301.6M380.7 512L372.7 525.2M433.9 290L433.6 302.6M461.1 489.9L469.3 500.2M493.9 667L507.4 666.9M279.9 592.8L287.9 592.8M275.9 496.5L270 505.9M358.4 573.8L356.1 585.8M494.6 314L501.1 325.5M250.4 572.9L256.9 585.5M367.3 538.8L380.1 535.6M275.9 393.2L270 402.7M228.9 326.1L224.9 336.7M279.5 338L273.1 349.1M323.2 301.6L337.5 302M231.1 491.1L237.5 503.2M438.2 311.7L453.5 312.8M530.2 489.6L522.9 500.5M391.2 296.9L398.6 302.4M447.1 467.8L440.7 479.6M379.2 393.2L383.2 386.3M594 663L594 676.4M460.6 703L454.6 691.6M412.6 550.2L427.1 547.2M312.8 349.2L318.1 361M453.5 312.8L467.6 315.6M501.3 586.8L496.6 574M473.9 324.8L485.3 326.1M554.5 678.1L567.6 680M304.4 573.4L317.7 572.2M395.2 599.8L391.2 606.7M490.6 393.2L494.6 400.2M574.8 337.9L582 348.5M424.5 384.3L420 395.3M464 560.4L475.4 562.5M359 360.6L364.4 371.3M485.3 326.1L501.1 325.5M399.3 621.1L392.3 634.2M379.2 496.5L372.9 487.8M210.4 359.8L217.4 371M371.5 361.1L380.7 372.4M554.9 395.8L559.7 407.7M537.5 335.9L549.5 337.1M473.1 515.8L465.6 526.2M498.6 393.2L494.6 400.2M220.5 703L212.6 692.2M594 393.2L586 393.2M568.1 395.3L574.6 407.2M570.6 349.5L582 348.5M486.6 696.1L483.3 687.9M501.3 483.5L506.6 491.4M540.8 513.2L548.9 525.8M180.5 393.2L180.5 409.9M420.2 490.6L433.3 489M515.9 631.6L521.8 643.3M439.5 408.4L448.5 419.6M207.2 703L220.5 703M180.5 516.5L197.9 527M205.2 373.2L217.4 371M508.4 407.7L514.7 419.5M587.4 512L575.3 524.6M394.4 655.3L388.2 667.6M579.6 694.3L580 679.3M188.5 599.8L184.5 606.7M453.6 526.8L460.9 538.2M220.5 290L233.9 290M191.8 612.2L198.2 620.6M312.6 514.7L326.1 514.3M460.6 290L474 290M432.9 679.3L426.3 692.7M574 668.2L567.6 680M326.8 678.8L332.8 690.6M514 290L529.1 300.7M561.1 643.4L554.8 653.7M521.8 407.1L529.3 419.2M331.4 384.9L345.7 384.9M429.2 667.3L432.9 679.3M276.5 378.2L285.8 376.6M534 570.7L529.8 584.4M414.2 431.1L406.4 444.2M460.6 703L474 703M445.5 679.6L441.5 691.9M412.7 526.8L428.4 527M339 680L342.8 691.9M185.8 667.8L191.1 679.2M180.5 356.6L190.2 350.1M568.7 420L573 430.8M494.4 549.4L488.9 561.5M345.7 384.9L359.3 383.4M225.1 406.5L238.5 408.2M270 609.2L267.1 600.2M547.5 596.8L541 608.8M551.8 574.6L542.2 584.2M576.6 313.8L581.6 324.9M339 585.9L347 595.6M180.5 436.5L180.5 449.9M446.5 536.7L460.9 538.2M370.5 393.7L366.1 397.4M204.6 442L209.3 455.6M238.5 408.2L251.7 408.3M283.9 599.8L287.9 606.7M378.4 466.9L372 479.1M365.9 420.5L381 418.4M544 560.6L534 570.7M267.1 600.2L269.5 591M559.6 595.6L553.8 607.8M237.8 667.6L252.8 667.7M380.7 408.7L373.4 402.7M212.4 337.8L216.7 347.2M231.7 607.8L238.7 619.1M325.6 324.7L319.5 338M380.7 305.5L386.3 314.2M251.8 455.3L245.6 466.5M381 418.4L391.9 420.1M226.6 500.6L218.6 514.4M390.1 513.1L400.7 526.8M459.7 608.7L468 619.1M204.1 347L198 360.9M373.4 402.7L370.5 393.7M403.5 604.1L398.6 612.2M224.9 336.7L226.9 348.5M506.6 491.4L522.2 479.5M541 608.8L547.2 620.8M255.9 443.4L274 445.2M548.7 384.4L541.7 396.3M387.2 393.2L391.2 400.2M548.5 502.6L540.8 513.2M429.4 433.2L441.1 432.2M398.6 612.2L390.1 616.3M480 620L475.2 633.3M220.5 290L231.2 303M553.8 607.8L559.2 621.5M387.2 599.8L383.2 592.8M562.1 384.4L554.9 395.8M557 562.8L570.6 561.4M191.2 690L197.7 690.2M407.1 346.6L401.5 360M303.5 455.1L318.5 455.4M232.9 393.6L238.5 408.2M313.6 373.6L307.3 383.7M560.7 501.8L555.2 513.3M462.6 441.6L473.3 442.9M542.2 584.2L554.2 584.4M230.9 513.7L238.6 526M506.9 397.6L501.9 405.7M547.2 620.8L557.5 632.6M205.7 585.1L220.7 584.3M453.1 359.6L459.4 373.3M264 407.8L259.6 420.1M392.3 634.2L384.8 643M486.6 503.4L484 512M482.6 599.8L486.6 592.8M490.6 393.2L486.6 386.3M180.5 423.2L198 430.8M379.9 481.4L372 479.1M419.1 512.1L428.4 527M345.7 405.7L339.1 421.1M180.5 583.1L197.5 572.3M204.3 633.3L219.2 632.1M579.6 384.5L586.6 378.2M345.8 526L337.9 539.1M295.2 302.4L291.4 313.3M332.8 620.5L345.4 619.9M493.4 616.3L506.6 620.4M313.6 373.6L327 372.2M337.5 302L345.6 312.6M484 512L473.1 515.8M380.1 535.6L386.3 550.3M188.5 393.2L196.7 397.6M405.5 631.6L419.8 631.3M501.9 302.4L507.6 313.4M548.9 525.8L540.7 539.1M554.9 302.4L548.4 312.6M379.9 687.9L366.2 678.6M473.8 496.9L461.1 489.9M462.1 419L451.2 432.2M527.9 678.6L534.9 690.9M184.5 400.2L191.8 405.7M427.1 547.2L433.3 562.1M188.5 496.5L190.3 489.8M180.5 623.1L198.2 620.6M345.7 405.7L359.9 406.6M287.9 400.2L295.2 405.7M522.1 669L514.1 679.7M226.9 574.4L220.7 584.3M231.5 583.3L238.9 599.5M225.5 314.6L214.9 326.2M403.5 604.1L412 598.1M548.7 432.6L554.6 442M475.4 562.5L479.6 573.9M453.8 598L459.7 608.7M334.1 668L345.8 669.6M258.3 324L265.6 337.9M540.4 441.5L532.6 454.8M337.5 302L352.8 301.6M564.4 431.6L567.8 443.7M447.3 290L460.8 301.9M238.1 548.2L249.8 548.3M542.5 489.4L534.9 501.7M403.2 491.4L420.2 490.6M381.9 680L391.7 679.4M303.8 338L298.7 349.7M352.8 301.6L362.9 301.3M476.7 505.9L469.3 500.2M196.4 454.4L205.6 466.6M326.7 466L318.7 477.6M555.5 490.3L548.5 502.6M520.6 431.3L531.9 432.7M313.6 324.9L325.6 324.7M420.6 703L426.3 692.7M534.9 690.9L547.4 690.1M452.5 383.7L459.7 395.3M338.2 350L346.5 362.6M479.8 313L494.6 314M340.3 468.9L331.9 479.6M230.6 372L223.3 384.1M483.3 378.2L474.7 370.9M425.2 620L435.2 633.8M554.6 442L567.8 443.7M586.6 687.9L594 689.7M391.2 489.6L397.9 483.5M197.7 408.1L203.3 419.8M513.6 325.8L527.4 325.3M433.5 466L447.1 467.8M383.2 503.4L380.7 512M516.3 514.3L507.8 526.8M586.6 584.7L586.9 572.6M486.5 632L479.9 643.7M192.5 467.2L205.6 466.6M210.7 407.6L218.6 417.3M561.8 479.7L572.4 479.4M528.6 514.8L522.7 525.9M340 631.6L344.2 642.9M490.6 599.8L494.6 606.7M238.1 478.9L252.7 478.4M494.6 386.3L492.6 376.6M453.7 500.9L469.3 500.2M384.8 643L379.9 656M421.4 655.7L429.2 667.3M446.8 488.6L461.1 489.9M220.5 703L233.9 703M468.7 407.3L473 420M180.5 496.5L184.5 489.6M499.3 630.9L515.9 631.6M494.6 592.8L506.6 594.6M391.9 420.1L401.5 432M233.9 290L247.2 290M202.1 679.9L197.7 690.2M339 513.9L353.6 513.2M460.8 681.9L454.6 691.6M353.7 679.1L359.6 690.8M279.9 296.9L270 299.4M460.6 290L460.8 301.9M548.3 408.3L558 421.6M473.2 538.5L467.7 548.3M188.5 496.5L196.7 500.8M196.7 604.1L191.8 612.2M412.8 571.6L406.1 585.7M294.5 380.3L299.9 388.1M207 609.2L198.2 620.6M218 679.3L212.6 692.2M529.8 584.4L520.7 597.5M483.3 584.7L473.8 585.7M441.1 432.2L435.6 442.8M270 299.4L258.8 302.1M506.6 388.1L519.8 382.7M198 430.8L190.7 441.6M524.9 550.3L513.7 559.1M188.5 393.2L196.5 388.1M570.6 561.4L575.1 573.3M286.9 538.4L296.6 537.7M426.3 571.9L419.6 584.8M594 449.9L582.5 444.8M554 703L562 689.6M217.2 609.3L213.6 620.6M269.5 591L276.5 584.7M575.1 573.3L568.4 585.1M324.1 560.2L330.8 574.5M473.3 442.9L479.6 454.3M180.5 449.9L180.5 463.2M203.3 419.8L218.6 417.3M269.5 591L266.1 572.1M517.3 466.8L505.3 477.9M280 455.6L282.9 466.7M331.7 549.6L348 548.1M276.5 687.9L270.7 678.3M250.9 501.7L259.1 513.8M276.5 584.7L285.8 583.1M276.5 584.7L278 572M236.1 338.1L246.4 349M252.2 431.3L265.5 430.8M372.9 487.8L379.9 481.4M529.1 467.1L522.2 479.5M378.8 562L393.9 559.8M226.9 348.5L224.3 361.6M372.9 384.5L379.9 378.2M252.6 337.1L256.6 348.1M427.2 361.3L420.4 373M576.6 313.8L589 313.1M426.3 571.9L440.2 572.3M380.7 615.2L373.4 609.2M198.2 620.6L191.1 633.2M433.7 348L427.2 361.3M403.5 500.8L405.7 515.2M212.4 337.8L224.9 336.7M419.8 631.3L425.8 644.2M493.4 409.8L484 408.7M486.9 348.6L498.8 350.4M231.5 583.3L243 586.2M246.4 349L256.6 348.1M494.6 503.4L506.9 500.8M180.5 636.4L191.1 633.2M435.2 633.8L440.6 645.3M207.2 703L212.6 692.2M395.2 393.2L403.2 388.1M527.8 609.6L541 608.8M180.5 689.7L191.1 679.2M594 496.5L586 496.5M534.5 360.8L548.6 360.7M290.9 361.3L307.4 360.5M191.2 690L191.1 679.2M479.9 643.7L476.9 656M323.2 301.6L318.3 313.3M233 632.3L244.7 631.4M223.3 384.1L236.5 383.2M372.7 525.2L367.3 538.8M555.1 537.7L547.1 550.8M339.8 372.5L352.1 372.3M586 599.8L579.6 591M517 655.2L507.4 666.9M397.9 690L407.6 679.8M575.3 524.6L583.8 538.1M244.7 631.4L257.7 632.9M279.7 643.5L290.6 644.8M586 393.2L579.6 384.5M405.4 301.1L399.4 314.6M569.6 538.6L560.3 549.4M204.2 560.8L197.5 572.3M220.7 584.3L210.8 597.3M547.8 668L554.5 678.1M196.7 604.1L210.8 597.3M407.6 679.8L413.9 690.7M486.7 420.4L481.8 431.3M279.9 489.6L287.9 489.6M290.6 644.8L304 642M432 586.5L427 598.2M540.6 290L554 290M433.9 290L421.5 301.1M389.2 376.6L401.5 360M267.1 600.2L255.5 608.4M215.9 560.2L210.7 573.1M494.6 314L485.3 326.1M250.4 572.9L243 586.2M326 656.8L339.1 656.9M252.2 311.8L243.5 326.1M567.8 443.7L576.2 454.7M594 516.5L594 529.8M299.8 421.6L311.9 419.8M527.3 703L523.3 690.6M266.1 572.1L256.9 585.5M519.4 574.6L529.8 584.4M325.2 443.5L330.6 456.7M359.8 667.5L373.3 667.9M180.5 556.5L198 550.1M285 325.2L291.3 338.6M506.9 397.6L508.4 407.7M594 496.5L594 516.5M579.6 384.5L580.5 373.6M345.4 433.9L360.6 431.5M205.6 466.6L210.2 476.9M334.8 338.6L338.2 350M353.6 467.2L359.9 479.4M372.8 454.5L366.3 468.6M305 315L318.3 313.3M287.9 606.7L295.2 612.2M466.7 455.2L475 466M391.2 503.4L383.2 503.4M407.6 679.8L422.5 680.6M590 592.8L594 583.1M395.2 496.5L403.5 500.8M366.3 468.6L372 479.1M379.3 443.9L394 442.4M379.2 496.5L370.5 496.9M395.2 393.2L403.5 397.6M370.5 496.9L365.6 492.4M371.5 361.1L364.4 371.3M590 503.4L594 516.5M519.8 382.7L527.7 394.3M521.7 361.1L514.2 371.6M398.6 405.7L391.9 420.1M430.2 454.3L439.8 454.4M522.9 500.5L528.6 514.8M383.2 489.6L372.9 487.8M494.6 296.9L493.4 306.6M454 618.5L462.1 633.2M207.2 290L217 300.9M568.1 395.3L559.7 407.7M537.3 384.1L541.7 396.3M501.3 380.3L506.6 388.1M191.8 508.9L197.9 527M225.1 406.5L231 420.3M534.9 501.7L540.8 513.2M459.4 466.8L475 466M486.6 296.9L484 305.5M540.8 513.2L534.6 525.2M468 619.1L475.2 633.3M590 400.2L586 393.2M515.9 631.6L508 646M218.8 466.5L230.9 469.3M238.7 619.1L251.2 620.3M476.3 591L483.3 584.7M238.5 408.2L245.5 421.3M233.9 703L224.7 689.6M398.6 302.4L405.4 301.1M579.6 694.3L567.6 680M555.2 513.3L548.9 525.8M411.4 645.7L421.4 655.7M180.5 569.8L197.5 572.3M531.1 632.3L521.8 643.3M325.7 630L340 631.6M521.8 407.1L514.7 419.5M579.6 487.8L586.6 481.4M465.6 526.2L460.9 538.2M586.6 687.9L580 679.3M522.9 500.5L534.9 501.7M486.6 592.8L492.6 583.1M446.7 654.6L455.5 666.6M339 680L332.8 690.6M372.9 487.8L372 479.1M532.7 408.5L529.3 419.2M232.4 680.5L236.5 692.1M203.6 655.6L210.2 668.3M568.7 420L564.4 431.6M369.9 644.7L384.8 643M501.4 538.5L505.8 550.4M534.9 501.7L548.5 502.6M184.5 503.4L191.8 508.9M264.9 526.5L277.6 525.8M191.8 405.7L197.7 408.1M196.5 594.6L210.8 597.3M586 496.5L584.4 490.8M339 585.9L334.4 596M198.7 668.9L191.1 679.2M498.6 599.8L506.6 594.6M584.1 419.7L573 430.8M408.9 655.7L421.4 655.7M204.6 442L196.4 454.4M184.5 489.6L191.2 483.5M547.1 550.8L557 562.8M225.2 430.9L230.7 443.3M277.6 525.8L289.5 525M529.1 300.7L533.5 313.5M454 573.6L461.7 586.4M356.1 585.8L347 595.6M243.2 678.7L236.5 692.1M231.7 607.8L226.3 620.7M554.2 584.4L547.5 596.8M421.4 655.7L433.3 657.6M345.6 312.6L338.3 324.2M218 443.3L209.3 455.6M291.9 599.8L287.9 606.7M440.3 668.4L455.5 666.6M390.1 513.1L385.7 526.2M541.8 468.4L549 479.4M197.5 572.3L205.7 585.1M312.5 537.5L326.8 537.5M224.9 336.7L216.7 347.2M231.2 303L244 301.2M244.7 608.4L238.7 619.1M506.6 491.4L505.3 477.9M197.5 312.5L202.7 325.7M455.5 666.6L466.9 666.3M378.7 325.1L384.2 335.3M486.8 679.5L499.5 678.6M387.2 393.2L395.2 393.2M275.9 496.5L269.5 487.8M359.7 548.8L373.1 550.4M331.9 479.6L327 490.2M553.8 607.8L547.2 620.8M256.6 348.1L262.8 360.6M399.4 314.6L413.4 314.1M561.8 454.4L568.6 468.3M499.5 678.6L514.1 679.7M425.8 335.8L420.5 348.9M389.2 479.8L397.9 483.5M553.4 468L549 479.4M521.8 337.5L529 349.1M230.9 513.7L222.2 525.2M406.2 561.8L419.4 559.5M307.4 360.5L313.6 373.6M435.8 324.8L445.8 325.7M547.2 620.8L540.8 632.9M196.5 697.9L197.7 690.2M226.3 620.7L233 632.3M453.1 359.6L447.4 371.5M245.3 395.2L238.5 408.2M397.9 380.3L414.2 383.4M244.3 513.7L238.6 526M490.6 393.2L482.6 393.2M479.6 336.6L493.1 336.4M467.4 362.1L459.4 373.3M205.2 373.2L210.8 383.9M236.1 338.1L252.6 337.1M318.1 361L313.6 373.6M446.2 630.6L453.3 644.9M515.9 349.8L529 349.1M273.1 349.1L285.2 349M258.8 302.1L264.3 313.5M462.1 633.2L466.4 645M238.9 599.5L248.9 597.7M498.6 599.8L506.9 604.1M562.5 362.5L576.1 360.9M594 343.3L582 348.5M522.2 479.5L522.9 500.5M400.7 526.8L405.3 538M502.5 516.4L507.8 526.8M244.3 513.7L259.1 513.8M508 646L501.6 656.4M590 400.2L580.1 402.7M352.8 301.6L345.6 312.6M527.9 678.6L523.3 690.6M576.1 360.9L586.7 361.2M184.5 400.2L196.7 397.6M278.8 666.8L270.7 678.3M251.3 385.2L262.9 384.4M380.7 615.2L380.7 631.4M476.3 487.8L461.1 489.9M583.8 538.1L575.7 550.4M188.5 599.8L196.7 604.1M433.9 703L447.3 703M230.5 559.7L237.8 574.3M359.3 524.3L372.7 525.2M540.3 655.8L532.4 667.5M542.6 678.9L534.9 690.9M461.7 586.4L468.6 596.8M514.7 419.5L520.6 431.3M313.9 703L327.2 703M554.9 395.8L568.1 395.3M506.9 500.8L516.3 514.3M198 550.1L189.6 560.2M180.5 409.9L180.5 423.2M294.5 690L306.6 692.4M392.2 537.4L405.3 538M243 586.2L238.9 599.5M258.3 324L252.6 337.1M280 314.2L285 325.2M554 290L567.3 290M564.4 431.6L554.6 442M447.3 290L446.4 301.7M295.2 612.2L286.7 616.3M242.9 559.9L237.8 574.3M594 436.5L582.5 444.8M256.9 585.5L248.9 597.7M405.3 538L421.7 537.4M191.1 679.2L197.7 690.2M273.2 326.7L265.6 337.9M439.4 549.8L455.9 549.9M594 676.4L594 689.7M196.4 454.4L192.5 467.2M325.9 421L339.1 421.1M594 529.8L594 543.1M283.9 599.8L275.9 599.8M400.7 572.7L406.1 585.7M403.5 397.6L398.6 405.7M540.6 703L547.4 690.1M238.1 478.9L231.1 491.1M474 703L469.3 691.2M455.9 549.9L467.7 548.3M420.6 703L413.9 690.7M488.9 561.5L499.6 562M209.3 455.6L205.6 466.6M230.9 469.3L238.1 478.9M373.8 433.5L386.1 431.3M379.2 599.8L383.2 592.8M506.9 500.8L522.9 500.5M569 325.4L574.8 337.9M499.6 562L513.7 559.1M383.2 400.2L380.7 408.7M351 348.9L346.5 362.6M534 570.7L551.8 574.6M191.2 586.8L205.7 585.1M383.2 296.9L380.6 290M245.6 466.5L252.7 478.4M406.4 444.2L420.5 443.5M383.2 503.4L390.1 513.1M420.4 373L414.2 383.4M387.2 393.2L379.2 393.2M486.6 400.2L482.6 393.2M251.1 360.9L258.4 371.9M551.8 574.6L560.5 573.4M401.5 360L404.4 371.9M383.2 696.1L391.2 696.1M594 303.3L589 313.1M548.6 360.7L543.7 372M454.9 454.2L466.7 455.2M276.5 481.4L273.2 466.6M490.6 599.8L498.6 599.8M414.8 362.2L420.4 373M540.8 632.9L549.8 645.1M412 598.1L427 598.2M180.5 316.6L190.5 323.6M490.6 496.5L498.6 496.5M466.7 455.2L479.6 454.3M483.3 481.4L487.9 466M557.5 632.6L561.1 643.4M587.6 644.5L581.6 654.6M286.7 616.3L291.3 620.2M247.2 703L253.6 691.5M502.6 469.1L517.3 466.8M230.7 537.2L225.8 551M188 655.4L185.8 667.8M291.3 620.2L305.1 620.8M210.2 668.3L218 679.3M353.8 630.5L367 632M548.3 408.3L541.1 420.9M188.5 496.5L184.5 489.6M414.2 383.4L424.5 384.3M492.1 525.2L487 537M231.1 491.1L246 490.5M453.3 644.9L459.7 655.5M506.9 604.1L506.6 594.6M280 550.1L274.2 560M270 505.9L259.1 513.8M366.2 678.6L359.6 690.8M224.1 667.5L232.4 680.5M367 632L380.7 631.4M559.7 407.7L558 421.6M400.8 643.9L411.4 645.7M528 540.4L536.5 550.1M488.8 654.9L493.9 667M294.1 550.5L284.2 562.2M324.1 560.2L317.7 572.2M411.4 645.7L425.8 644.2M180.5 569.8L189.6 560.2M210.8 597.3L217.2 609.3M433.3 657.6L446.7 654.6M492.2 431.9L502.9 442M540.7 539.1L547.1 550.8M405.8 418.4L421.5 420.2M330.8 574.5L339 585.9M575.7 550.4L580.6 561.2M339.6 561.7L330.8 574.5M202.7 325.7L212.4 337.8M276.5 584.7L266.1 572.1M406.1 585.7L412 598.1M506.9 431.3L515.6 443.1M446.7 654.6L459.7 655.5M243.9 442.8L238.8 455.1M466.9 666.3L481.1 667.5M419.8 467.1L426.3 479.8M421.5 420.2L434.3 419.4M189.6 560.2L197.5 572.3M451.2 432.2L467.1 432M568.6 468.3L572.4 479.4M285.8 583.1L278 572M252.6 337.1L246.4 349M283.9 703L287.9 696.1M180.5 543.1L198 550.1M481.1 667.5L493.9 667M433.5 466L440.7 479.6M467.1 432L481.8 431.3M276.5 378.2L270.1 372.5M237.8 574.3L243 586.2M488.5 444L502.9 442M287.9 489.6L285.8 479.8M359.9 479.4L353.1 491M265.6 337.9L256.6 348.1M285.2 349L290.9 361.3M425.2 313.9L438.2 311.7M527.9 678.6L542.6 678.9M502.9 442L515.6 443.1M298.7 349.7L307.4 360.5M492.6 583.1L479.6 573.9M332.4 359.9L339.8 372.5M462.5 324.1L473.9 324.8M251.2 620.3L257.7 632.9M398.6 508.9L405.7 515.2M535.7 596.7L547.5 596.8M549.4 455.7L561.8 454.4M271.1 513.1L264.9 526.5M346.5 362.6L352.1 372.3M508.1 336.5L521.8 337.5M493.3 360.3L502.9 372.3M270 299.4L260.5 290M587.4 305.5L576.6 313.8M391.2 592.8L403.2 594.6M521.8 337.5L537.5 335.9M461.5 513L453.6 526.8M197.4 479.2L210.2 476.9M575.3 524.6L569.6 538.6M397.9 690L391.7 679.4M353.1 491L365.6 492.4M490.6 599.8L482.6 599.8M535.8 642.9L540.3 655.8M586 393.2L577.2 393.7M476.7 299.4L467.6 315.6M554.5 678.1L562 689.6M554.9 349L570.6 349.5M245.5 421.3L237.7 431.8M428.4 527L432.1 539.6M494.6 386.3L506.6 388.1M587.8 524.7L583.8 538.1M207.2 290L220.5 290M212.7 550L215.9 560.2M549.8 645.1L554.8 653.7M590 386.3L579.6 384.5M569.4 656.3L574 668.2M188.1 371.3L205.2 373.2M304.6 667.5L296.6 679.4M442.2 525.9L446.5 536.7M496.8 644.3L508 646M180.5 599.8L188.5 599.8M267.1 393.7L269.5 384.5M225.8 551L230.5 559.7M298.4 515.1L312.6 514.7M447.3 703L460.6 703M258.4 561.8L266.1 572.1M385.7 526.2L400.7 526.8M310.5 678.3L317.4 690M184.5 592.8L191.2 586.8M541.1 420.9L548.7 432.6M327.2 703L340.6 703M528.9 656.1L540.3 655.8M269.5 384.5L276.5 378.2M325.2 443.5L318.5 455.4M519.4 574.6L515.2 585.7M594 343.3L588.8 337.3M274.2 560L278 572M180.5 449.9L196.4 454.4M180.5 423.2L180.5 436.5M400.7 526.8L412.7 526.8M421.7 537.4L432.1 539.6M285 325.2L279.5 338M558 421.6L564.4 431.6M405.4 301.1L421.5 301.1M587.3 431.1L582.5 444.8M223.5 453.4L230.9 469.3M338.6 443.3L330.6 456.7M560.6 667.5L574 668.2M277.3 615.2L270 609.2M287.9 606.7L300.1 604.1M562.2 312.8L569 325.4M432.1 539.6L446.5 536.7M492.6 479.8L505.3 477.9M298.4 324.5L291.3 338.6M467.7 548.3L482.7 551.2M501.9 405.7L508.4 407.7M586.6 378.2L580.5 373.6M421.5 301.1L433.6 302.6M190.7 441.6L196.4 454.4M507.6 313.4L522.3 314.1M366.3 468.6L359.9 479.4M594 393.2L594 369.9M434 607.8L440 619.9M212.6 692.2L224.7 689.6M390.1 409.8L380.7 408.7M395.2 393.2L391.2 386.3M197.2 337.2L204.1 347M515.8 607.8L522.1 620.9M482.7 551.2L494.4 549.4M522.3 314.1L533.5 313.5M238.8 455.1L230.9 469.3M540.2 324.3L556.9 324.9M291.9 393.2L299.9 388.1M224.7 689.6L236.5 692.1M391.2 400.2L403.5 397.6M372.9 487.8L365.6 492.4M527.8 609.6L533.6 619.7M285.8 479.8L298.6 467.1M537.3 384.1L527.7 394.3M531.8 562L544 560.6M381.9 350.3L371.5 361.1M390.1 409.8L391.9 420.1M556.9 324.9L569 325.4M205.2 395.3L210.7 407.6M534.9 501.7L528.6 514.8M191.8 405.7L191.8 420.1M447.4 371.5L441.8 383M594 676.4L580 679.3M506.6 388.1L514.2 371.6M204.5 516.5L210.2 525.3M486.6 296.9L493.4 306.6M486.6 386.3L494.6 386.3M468 619.1L462.1 633.2M473.8 600.2L468.6 596.8M522.1 620.9L531.1 632.3M575.1 573.3L586.9 572.6M238.5 408.2L231 420.3M215.8 395.9L225.1 406.5M190.2 350.1L204.1 347M218.6 514.4L222.2 525.2M494.6 606.7L486.6 606.7M533.6 619.7L540.8 632.9M251.7 408.3L245.5 421.3M567 632.5L575.6 644M440.8 596L453.8 598M237.4 360.6L251.1 360.9M320.2 408.2L311.9 419.8M494.6 503.4L493.4 513.1M486.6 606.7L482.6 599.8M372.9 487.8L359.9 479.4M486.6 489.6L483.3 481.4M583.9 631.8L587.6 644.5M203.6 655.6L198.7 668.9M251.1 360.9L262.8 360.6M574.6 407.2L584.1 419.7M522.7 525.9L528 540.4M577.2 393.7L579.6 384.5M259 538.9L249.8 548.3M494.6 489.6L492.6 479.8M218 654.7L210.2 668.3M191.8 420.1L198 430.8M298.8 371.6L313.6 373.6M402.6 666.8L391.7 679.4M225.2 430.9L218 443.3M441.8 383L452.5 383.7M534.6 525.2L540.7 539.1M372.9 694.3L366.2 678.6M587.4 615.2L574.7 619.7M403.5 500.8L414.9 501.4M291.9 496.5L287.9 503.4M305.2 549.4L298.3 561.1M514 290L527.3 290M501.3 586.8L515.2 585.7M480.2 525.7L492.1 525.2M252.8 667.7L260.1 680.7M392.3 634.2L405.5 631.6M237.7 431.8L230.7 443.3M452.5 383.7L465.9 384.7M473.8 393.7L465.9 384.7M390.1 616.3L392.3 634.2M320.2 408.2L330.4 408.9M283.9 393.2L287.9 386.3M294.5 586.8L299.9 594.6M197.5 312.5L190.5 323.6M594 463.2L594 476.5M513.8 538.1L528 540.4M378.7 325.1L372.9 338M380.7 512L385.7 526.2M433.9 290L446.4 301.7M274 445.2L280 455.6M330.4 408.9L345.7 405.7M291.9 393.2L300.1 397.6M434.3 419.4L448.5 419.6M358.4 573.8L366.1 584.8M210.1 313.4L202.7 325.7M366.8 561.9L358.4 573.8M228.9 326.1L236.1 338.1M389.2 376.6L397.9 380.3M275.9 393.2L267.1 393.7M279.5 338L285.2 349M392.4 325.4L384.2 335.3M590 386.3L594 369.9M531.9 432.7L540.4 441.5M560.3 549.4L575.7 550.4M196.5 388.1L205.2 373.2M530.2 489.6L534.9 501.7M577.2 600.2L568.4 585.1M594 636.4L587.6 644.5M447.1 467.8L455.4 479.3M448.5 419.6L462.1 419M318.5 455.4L313.8 467.3M481.8 431.3L492.2 431.9M549 479.4L542.5 489.4M243.5 326.1L252.6 337.1M460.6 703L469.3 691.2M370.5 600.2L372.9 591M407.3 703L413.9 690.7M580.1 505.9L560.7 501.8M226.3 620.7L219.2 632.1M210.7 573.1L226.9 574.4M459.4 466.8L470.3 478M492.2 431.9L506.9 431.3M210.2 476.9L216.4 489.2M515.6 443.1L527.3 443.9M372.9 591L379.9 584.7M291.3 338.6L285.2 349M238.7 619.1L233 632.3M226.9 574.4L237.8 574.3M474.1 350.4L467.4 362.1M398.6 302.4L399.4 314.6M339 396.1L330.4 408.9M594 529.8L587.8 524.7M399.3 621.1L405.5 631.6M527.3 443.9L540.4 441.5M312.6 514.7L307.5 524M473.8 393.7L476.3 384.5M324.3 349.5L332.4 359.9M217.4 371L210.8 383.9M313 584.5L324.4 585.3M219.2 632.1L224.8 644.1M594 476.5L582.4 466.4M351.2 396.1L345.7 405.7M180.5 543.1L189.1 539M462.1 633.2L453.3 644.9M576.2 454.7L587.4 454.5M383.2 489.6L389.2 479.8M493.4 616.3L484 615.2M498.6 599.8L494.6 592.8M266 644.4L256.6 656.1M207 609.2L217.2 609.3M506.9 397.6L512.9 395.6M502.5 516.4L492.1 525.2M579.6 591L575.1 573.3M587.4 408.7L584.1 419.7M210.2 476.9L225.5 479.4M590 400.2L587.4 408.7M484 615.2L476.7 609.2M300.7 655.5L291.2 667.6M411.5 618.8L425.2 620M587.4 512L587.8 524.7M189.1 539L198 550.1M587.4 512L580.1 505.9M432.9 679.3L441.5 691.9M353.5 538L348 548.1M561.1 643.4L569.4 656.3M475.2 633.3L486.5 632M272 420.5L265.5 430.8M204.4 536.4L212.7 550M433.3 489L446.8 488.6M445.5 679.6L454.6 691.6M397.8 550.6L393.9 559.8M280 314.2L273.2 326.7M345.8 669.6L353.7 679.1M594 543.1L575.7 550.4M521.8 643.3L535.8 642.9M454.4 408.1L468.7 407.3M249.8 548.3L258.4 561.8M326.1 514.3L339 513.9M551.8 574.6L554.2 584.4M291.4 313.3L285 325.2M501.9 508.9L502.5 516.4M180.5 663L188 655.4M554.8 653.7L569.4 656.3M180.5 599.8L180.5 583.1M285.8 376.6L294.5 380.3M559.6 595.6L567.9 610.6M560.5 573.4L568.4 585.1M529.3 419.2L541.1 420.9M298.3 561.1L304.4 573.4M428.4 527L442.2 525.9M325.6 324.7L334.8 338.6M407.3 290L405.4 301.1M433.6 302.6L446.4 301.7M251.8 455.3L258 467.3M369.1 443.3L357.2 454.9M226.6 500.6L230.9 513.7M569 325.4L561.9 335.9M573 430.8L587.3 431.1M383.2 400.2L390.1 409.8M445.5 679.6L460.8 681.9M372.9 338L366.1 347.8M446.4 301.7L460.8 301.9M245.6 466.5L238.1 478.9M533.5 313.5L548.4 312.6M265.7 455.2L273.2 466.6M387.2 393.2L383.2 400.2M202.1 679.9L218 679.3M350.8 560.5L366.8 561.9M237.5 503.2L244.3 513.7M267.1 496.9L250.9 501.7M433.9 703L426.3 692.7M331.5 503.2L326.1 514.3M196.5 594.6L205.7 585.1M387.2 599.8L391.2 592.8M562.1 384.4L568.1 395.3M407.1 346.6L414.8 362.2M180.5 449.9L190.7 441.6M548.4 312.6L562.2 312.8M313.6 373.6L319.4 384.2M560.7 501.8L568.5 514.3M210.8 383.9L205.2 395.3M223.5 453.4L238.8 455.1M414.8 362.2L404.4 371.9M420.5 348.9L427.2 361.3M370.5 600.2L365.6 608.3M483.3 481.4L475 466M395.2 599.8L391.2 592.8M557.5 632.6L549.8 645.1M258 467.3L273.2 466.6M490.6 393.2L494.6 386.3M594 703L594 689.7M313 631.5L304 642M216.7 347.2L226.9 348.5M291.9 599.8L299.9 594.6M345.7 405.7L351.4 419.6M250.1 525.7L244.2 538.1M331.9 479.6L347.4 478.4M559.2 621.5L567 632.5M506.9 500.8L506.6 491.4M210.4 643.3L218 654.7M295.2 302.4L305 315M262.8 360.6L277.3 361.6M453.3 644.9L446.7 654.6M482.6 496.5L476.7 505.9M224.1 667.5L218 679.3M260.5 290L273.9 290M243.8 654.6L252.8 667.7M488.8 654.9L481.1 667.5M379.9 687.9L381.9 680M180.5 703L184.5 696.1M548.9 525.8L555.1 537.7M462.1 419L467.1 432M260.5 703L273.9 703M432.7 512.4L447.1 515.2M210.8 597.3L207 609.2M299.9 594.6L310.6 609.2M218.6 417.3L225.2 430.9M327 372.2L339.8 372.5M540.7 539.1L536.5 550.1M562.7 527.6L569.6 538.6M184.5 696.1L191.2 690M522.1 669L527.9 678.6M279.9 503.4L275.9 496.5M348 548.1L350.8 560.5M225.5 314.6L228.9 326.1M527.3 290L540.6 290M224.9 595.2L217.2 609.3M507.8 526.8L522.7 525.9M587.4 408.7L594 409.9M265.5 430.8L255.9 443.4M519.8 382.7L537.3 384.1M419.6 584.8L412 598.1M275.9 496.5L279.9 489.6M283.9 703L279.9 696.1M236.2 312.9L243.5 326.1M393.9 559.8L400.7 572.7M365.6 608.3L358.3 620.3M433.5 466L426.3 479.8M582.4 466.4L572.4 479.4M237.8 574.3L231.5 583.3M279.9 400.2L286.7 409.8M297.7 444.7L303.5 455.1M279.9 696.1L287.9 696.1M180.5 516.5L180.5 529.8M303.8 338L312.8 349.2M418.3 324.7L413.1 337.2M326.7 466L331.9 479.6M555.5 490.3L560.7 501.8M214.9 326.2L228.9 326.1M346 454.1L340.3 468.9M283.9 599.8L287.9 592.8M449.2 559.4L464 560.4M298.7 349.7L290.9 361.3M476.3 487.8L470.3 478M387.2 496.5L395.2 496.5M379.9 584.7L389.2 583.1M319.5 338L324.3 349.5M251.2 620.3L244.7 631.4M204.2 560.8L215.9 560.2M191.8 612.2L207 609.2M351.2 443.1L369.1 443.3M340.3 468.9L347.4 478.4M230.6 372L236.5 383.2M531.4 372.4L519.8 382.7M496.6 574L507.4 574.5M346.5 362.6L339.8 372.5M389.2 583.1L397.9 586.8M391.2 489.6L403.2 491.4M299.9 388.1L311 394.5M264.6 618.4L257.7 632.9M250.4 572.9L266.1 572.1M498.8 350.4L493.3 360.3M279.5 338L291.3 338.6M383.2 503.4L373.4 505.9M366.1 397.4L359.9 406.6M319 596.4L334.4 596M180.5 290L180.5 303.3M339 513.9L331.9 525.3M483.3 378.2L492.6 376.6M508.3 360.6L502.9 372.3M245.5 374.7L236.5 383.2M339 585.9L356.1 585.8M580.1 299.4L576.6 313.8M528.6 514.8L534.6 525.2M312.8 349.2L324.3 349.5M370.5 393.7L359.3 383.4M490.6 599.8L486.6 606.7M403.5 500.8L403.2 491.4M213.6 620.6L226.3 620.7M476.7 609.2L473.8 600.2M403.5 294.3L405.4 301.1M231.7 607.8L244.7 608.4M494.6 386.3L501.3 380.3M359 360.6L371.5 361.1M197.9 527L204.4 536.4M549.8 645.1L540.3 655.8M295.8 632.1L313 631.5M567.6 680L562 689.6M580.1 505.9L577.2 496.9M442.2 525.9L432.1 539.6M440 619.9L454 618.5M594 556.5L580.6 561.2M225.8 551L215.9 560.2M420.4 373L433.1 373.5M581.6 654.6L574 668.2M577.2 496.9L579.6 487.8M460.8 681.9L469.3 691.2M277.3 512L271.1 513.1M567.3 290L580.7 290M473.2 538.5L482.7 551.2M274.2 560L266.1 572.1M232.9 393.6L245.3 395.2M218 679.3L224.7 689.6M529.8 584.4L535.7 596.7M558 421.6L548.7 432.6M373.3 667.9L381.9 680M198 430.8L204.6 442M594 543.1L594 556.5M524.9 550.3L531.8 562M284.2 562.2L278 572M426.3 571.9L432 586.5M324.4 585.3L319 596.4M360.6 431.5L351.2 443.1M508.4 407.7L521.8 407.1M217.2 609.3L226.3 620.7M542.2 584.2L547.5 596.8M394.4 655.3L408.9 655.7M318.3 313.3L313.6 324.9M208.7 430.3L218 443.3M403.5 397.6L420 395.3M184.5 606.7L180.5 623.1M394 442.4L400.6 454.5M506.9 294.3L500.6 290M429.2 667.3L440.3 668.4M310.6 609.2L317.2 619.6M354.3 325.3L360.4 336.3M414.2 431.1L429.4 433.2M529.1 467.1L535.8 478.7M527.8 609.6L522.1 620.9M568.7 420L584.1 419.7M374.4 314.2L386.3 314.2M439.8 454.4L433.5 466M390.1 409.8L381 418.4M474.3 677.5L486.8 679.5M400.2 337.2L392.5 349.7M273.2 466.6L264 478.6M447.2 442.9L462.6 441.6M292.4 455.6L298.6 467.1M287.9 489.6L299.9 491.4M294.5 483.5L298.6 467.1M447.3 703L454.6 691.6M204.6 442L218 443.3M196.5 388.1L205.2 395.3M198.2 620.6L204.3 633.3M215.8 395.9L210.7 407.6M433.7 348L442.9 360.6M586.7 361.2L580.5 373.6M493.8 453.3L506 454.8M339.8 372.5L345.7 384.9M218.6 514.4L210.2 525.3M594 516.5L587.8 524.7M236.5 383.2L232.9 393.6M191.8 302.4L180.5 303.3M397.9 690L413.9 690.7M533.6 619.7L531.1 632.3M251.8 455.3L265.7 455.2M383.2 606.7L390.1 616.3M442.9 360.6L433.1 373.5M486.6 503.4L482.6 496.5M594 463.2L582.4 466.4M311 394.5L320.2 408.2M529.1 467.1L541.8 468.4M583.9 631.8L575.6 644M282.9 466.7L298.6 467.1M494.6 400.2L501.9 405.7M490.6 703L486.6 696.1M270 299.4L273.9 290M479.9 643.7L488.8 654.9M323.2 301.6L332.8 313.5M359.9 479.4L372 479.1M239.4 644.6L243.8 654.6M534.6 525.2L528 540.4M579.6 487.8L584.4 490.8M547.2 620.8L559.2 621.5M517 655.2L522.1 669M252.8 667.7L243.2 678.7M212 502.4L226.6 500.6M405.4 301.1L413.4 314.1M440.6 645.3L453.3 644.9M270.4 655.9L278.8 666.8M390.1 616.3L380.7 631.4M569.6 538.6L575.7 550.4M191.2 690L196.5 697.9M506.6 594.6L515.2 585.7M264.7 667.3L260.1 680.7M486.7 420.4L492.2 431.9M432 586.5L440.8 596M476.9 656L488.8 654.9M274 445.2L265.7 455.2M291.9 393.2L287.9 386.3M180.5 599.8L184.5 592.8M215.9 560.2L226.9 574.4M345.8 526L359.3 524.3M293.3 431.6L297.7 444.7M180.5 343.3L190.2 350.1M447.8 586.6L453.8 598M373.1 550.4L378.8 562M252.2 311.8L258.3 324M531.9 432.7L527.3 443.9M248.9 597.7L244.7 608.4M413.4 314.1L406.1 325.1M507.4 666.9L522.1 669M286.8 444L280 455.6M527.3 703L534.9 690.9M380.1 535.6L392.2 537.4M243.5 326.1L236.1 338.1M264.3 313.5L273.2 326.7M419.4 559.5L426.3 571.9M579.6 591L568.4 585.1M445.8 325.7L451.7 337.7M459.4 466.8L455.4 479.3M294.5 380.3L298.8 371.6M210.2 476.9L204.6 489.8M372.8 454.5L378.4 466.9M427.1 547.2L439.4 549.8M426.3 479.8L433.3 489M287.9 606.7L286.7 616.3M577.2 496.9L560.7 501.8M269.5 694.3L276.5 687.9M467.6 315.6L479.8 313M567.6 680L580 679.3M594 423.2L587.3 431.1M493.1 336.4L486.9 348.6M225.5 314.6L236.2 312.9M391.2 606.7L383.2 606.7M225.5 479.4L216.4 489.2M475.4 562.5L488.9 561.5M324.3 349.5L318.1 361M287.9 592.8L285.8 583.1M344.4 335.7L351 348.9M219.2 632.1L210.4 643.3M390.1 306.6L399.4 314.6M521.7 361.1L531.4 372.4M180.5 436.5L190.7 441.6M501.1 325.5L513.6 325.8M305.1 620.8L295.8 632.1M398.6 405.7L405.8 418.4M529 349.1L534.5 360.8M258.3 324L273.2 326.7M383.2 489.6L379.9 481.4M391.2 400.2L390.1 409.8M519.4 574.6L534 570.7M549.5 337.1L561.9 335.9M534.5 360.8L543.7 372M383.2 386.3L379.9 378.2M303.8 338L319.5 338M447.5 396L454.4 408.1M486.6 296.9L476.7 299.4M347 595.6L360.3 596.7M267.1 393.7L259.5 395.2M233.9 703L236.5 692.1M555.2 513.3L562.7 527.6M338.2 350L351 348.9M531.1 632.3L535.8 642.9M295.2 612.2L291.3 620.2M505.3 477.9L522.2 479.5M217.4 371L230.6 372M465.6 526.2L473.2 538.5M568.5 514.3L575.3 524.6M204.4 536.4L198 550.1M384.8 359.8L401.5 360M575.6 644L569.4 656.3M222.2 525.2L230.7 537.2M180.5 393.2L188.5 393.2M532.7 408.5L541.1 420.9M345.8 669.6L339 680M340.6 703L353.9 703M366.8 656.2L373.3 667.9M218.5 538.9L212.7 550M249.8 548.3L242.9 559.9M447.4 371.5L459.4 373.3M198.7 668.9L202.1 679.9M340 631.6L353.8 630.5M286.7 306.6L277.3 305.5M584.1 419.7L587.3 431.1M353.9 290L367.2 290M266.9 548.8L258.4 561.8M560.5 573.4L554.2 584.4M298.3 561.1L292 574.7M594 436.5L594 449.9M356.1 585.8L360.3 596.7M460.9 538.2L473.2 538.5M243.2 678.7L253.6 691.5M384.8 643L400.8 643.9M554.2 584.4L559.6 595.6M493.4 513.1L502.5 516.4M267.1 496.9L269.5 487.8M345.6 312.6L354.3 325.3M218 443.3L223.5 453.4M251.7 408.3L264 407.8M304.4 573.4L313 584.5M386.1 431.3L379.3 443.9M314.3 561.1L304.4 573.4M589 313.1L581.6 324.9M244.7 608.4L251.2 620.3M338.3 324.2L334.8 338.6M505.8 550.4L524.9 550.3M265.7 455.2L258 467.3M180.5 569.8L180.5 583.1M391.9 420.1L405.8 418.4M237.5 503.2L230.9 513.7M420.5 443.5L430.2 454.3M331.9 479.6L339.7 489.8M255.5 608.4L264.6 618.4M340.9 608L345.4 619.9M406.1 467.3L413.4 478.3M425.8 335.8L433.7 348M441.1 432.2L451.2 432.2M553.4 468L561.8 479.7M390.1 616.3L380.7 615.2M347.4 478.4L353.1 491M570.6 561.4L580.6 561.2M420.5 348.9L414.8 362.2M390.1 513.1L380.7 512M245.3 395.2L251.7 408.3M440.2 336.3L446.8 348.8M473.3 442.9L488.5 444M244.3 513.7L250.1 525.7M567.9 610.6L559.2 621.5M501.9 405.7L493.4 409.8M291.9 496.5L299.9 491.4M220.7 584.3L231.5 583.3M467.4 362.1L474.7 370.9M397.9 690L403.2 697.9M594 369.9L586.7 361.2M521.6 455L532.6 454.8M486.6 592.8L494.6 592.8M318.1 361L327 372.2M559.2 621.5L557.5 632.6M210.4 643.3L203.6 655.6M277.3 615.2L264.6 618.4M259.5 395.2L251.7 408.3M520.7 597.5L535.7 596.7M486.6 489.6L494.6 489.6M482.6 393.2L476.7 402.7M259.1 513.8L250.1 525.7M553.4 468L568.6 468.3M574.7 619.7L567 632.5M243.8 654.6L237.8 667.6M345.4 619.9L358.3 620.3M279.9 296.9L273.9 290M327 490.2L339.7 489.8M277.3 408.7L272 420.5M567.3 290L554.9 302.4M482.1 359.9L493.3 360.3M299.9 491.4L312.2 489.8M352.8 301.6L359.4 313.2M508 646L517 655.2M379.9 584.7L372.4 573.9M358.3 620.3L374.4 619.4M278.8 666.8L284.3 678.9M419.8 631.3L435.2 633.8M218.6 417.3L208.7 430.3M580.1 609.2L577.2 600.2M562.7 527.6L555.1 537.7M389.2 686.3L381.9 680M339.7 489.8L353.1 491M180.5 290L196.7 294.3M362.9 301.3L374.4 314.2M348 548.1L339.6 561.7M542.6 678.9L547.4 690.1M540.3 655.8L547.8 668M389.2 583.1L386.8 573.5M291.2 667.6L296.6 679.4M435.2 633.8L446.2 630.6M231 420.3L225.2 430.9M433.6 302.6L438.2 311.7M466.4 645L479.9 643.7M198 550.1L204.2 560.8M259.1 513.8L271.1 513.1M243 586.2L248.9 597.7M236.2 312.9L228.9 326.1M287.9 296.9L300.1 294.3M484 408.7L473 420M393.9 559.8L386.8 573.5M479.9 643.7L496.8 644.3M334.4 596L324 608.4M501.6 656.4L517 655.2M270 402.7L267.1 393.7M297.7 444.7L292.4 455.6M473 420L486.7 420.4M242.9 559.9L250.4 572.9M184.5 606.7L191.8 612.2M372.7 525.2L385.7 526.2M318.6 432.2L325.2 443.5M273.2 326.7L279.5 338M277.3 408.7L264 407.8M299.9 491.4L303.9 479.9M517 655.2L528.9 656.1M438.2 311.7L435.8 324.8M586.6 481.4L594 476.5M532.4 667.5L547.8 668M312.1 443.3L303.5 455.1M283.9 599.8L279.9 592.8M579.6 694.3L567.3 703M180.5 599.8L180.5 623.1M238.1 478.9L246 490.5M490.6 290L474 290M319.5 338L312.8 349.2M420.2 490.6L414.9 501.4M209.3 455.6L218.8 466.5M547.8 668L560.6 667.5M473.9 324.8L479.6 336.6M353.9 290L352.8 301.6M291.9 599.8L287.9 592.8M252.7 478.4L259.5 490.6M483.3 481.4L470.3 478M455.4 479.3L461.1 489.9M275.9 599.8L270 609.2M383.2 400.2L373.4 402.7M351 348.9L359 360.6M494.6 314L507.6 313.4M191.8 302.4L197.5 312.5M197.7 690.2L212.6 692.2M420.4 373L424.5 384.3M492.6 376.6L502.9 372.3M387.2 393.2L383.2 386.3M567.8 443.7L582.5 444.8M366.1 347.8L371.5 361.1M403.5 294.3L393.9 290M383.2 696.1L372.9 694.3M527.4 325.3L540.2 324.3M332.8 620.5L325.7 630M548.6 360.7L555.3 371.1M433.1 373.5L441.8 383M285 325.2L298.4 324.5M276.5 481.4L282.9 466.7M205.6 466.6L218.8 466.5M257.7 632.9L249.3 644.4M574.8 337.9L588.8 337.3M490.6 496.5L494.6 503.4M562.5 362.5L568.1 373.5M512.9 395.6L508.4 407.7M197.9 527L189.1 539M252.7 478.4L264 478.6M506.6 620.4L515.9 631.6M210.4 359.8L224.3 361.6M180.5 623.1L191.1 633.2M230.7 537.2L238.1 548.2M506.9 604.1L520.7 597.5M188 655.4L198.7 668.9M180.5 676.4L191.1 679.2M306.1 409.1L299.8 421.6M245.5 374.7L258.4 371.9M492.1 525.2L501.4 538.5M530.2 489.6L542.5 489.4M233.9 703L247.2 703M482.6 496.5L476.3 487.8M353.6 513.2L367.9 514.2M280 550.1L284.2 562.2M474.3 677.5L469.3 691.2M270 505.9L271.1 513.1M559.7 407.7L568.7 420M258.4 371.9L270.1 372.5M373.3 667.9L366.2 678.6M590 296.9L580.7 290M244.2 538.1L238.1 548.2M294.1 550.5L298.3 561.1M500.6 290L514 290M542.2 584.2L535.7 596.7M180.5 496.5L180.5 476.5M453.6 526.8L465.6 526.2M388.2 667.6L381.9 680M208.7 430.3L204.6 442M367.2 290L380.6 290M424.5 384.3L441.8 383M283.9 496.5L291.9 496.5M394 442.4L386.5 454.6M339.6 561.7L348.9 573.6M465.6 526.2L480.2 525.7M594 449.9L594 463.2M237.8 667.6L243.2 678.7M487 537L501.4 538.5M310.6 609.2L305.1 620.8M354.3 325.3L344.4 335.7M383.2 696.1L380.6 703M420.6 290L421.5 301.1M513.8 303.6L529.1 300.7M243.9 442.8L251.8 455.3M306.1 409.1L320.2 408.2M594 303.3L594 316.6M232.4 680.5L243.2 678.7M285.8 583.1L294.5 586.8M501.9 302.4L500.6 290M285.8 583.1L292 574.7M501.4 538.5L513.8 538.1M312.2 489.8L320.2 501.7M367.4 325.4L360.4 336.3M536.5 550.1L547.1 550.8M255.9 443.4L265.7 455.2M292.4 455.6L282.9 466.7M287.9 489.6L294.5 483.5M317.4 690L332.8 690.6M379.9 378.2L389.2 376.6M447.3 703L441.5 691.9M279.9 400.2L270 402.7M359.9 479.4L365.6 492.4M265.6 337.9L273.1 349.1M590 696.1L580.7 703M279.9 696.1L276.5 687.9M547.1 550.8L560.3 549.4M303.5 455.1L298.6 467.1M339.8 372.5L331.4 384.9M300.1 500.8L299.9 491.4M373.4 609.2L370.5 600.2M213.6 620.6L204.3 633.3M387.2 496.5L383.2 503.4M492.6 583.1L496.6 574M197.5 572.3L210.7 573.1M469.3 500.2L473.1 515.8M446.8 348.8L442.9 360.6M373.4 505.9L370.5 496.9M224.9 336.7L236.1 338.1M352.1 372.3L345.7 384.9M311 394.5L306.1 409.1M285.8 376.6L298.8 371.6M403.2 697.9L413.9 690.7M271.1 513.1L277.6 525.8M484 408.7L476.7 402.7M494.6 400.2L506.9 397.6M462.2 349.3L453.1 359.6M191.1 633.2L197.6 643M243 586.2L256.9 585.5M490.6 290L494.6 296.9M325.1 396.2L320.2 408.2M256.6 348.1L273.1 349.1M587.4 305.5L589 313.1M298.4 515.1L289.5 525M506.9 604.1L501.9 612.2M204.3 633.3L210.4 643.3M239.4 644.6L231.9 655.6M547.5 596.8L559.6 595.6M277.3 512L277.6 525.8M461.5 513L465.6 526.2M579.6 487.8L568.5 491.1M307.4 360.5L318.1 361M490.6 599.8L486.6 592.8M590 503.4L586 496.5M249.3 644.4L243.8 654.6M476.7 299.4L479.8 313M270.4 655.9L264.7 667.3M586.6 481.4L584.4 490.8M484 512L492.1 525.2M203.8 301L210.1 313.4M245.5 421.3L252.2 431.3M180.5 423.2L191.8 420.1M352.1 372.3L364.4 371.3M586 496.5L590 489.6M326.8 537.5L319 549.8M180.5 476.5L192.5 467.2M590 386.3L586.6 378.2M421.5 301.1L413.4 314.1M286.5 656.7L278.8 666.8M399.3 621.1L411.5 618.8M304.6 667.5L310.5 678.3M446.2 630.6L462.1 633.2M364.4 371.3L380.7 372.4M180.5 599.8L184.5 606.7M191.8 302.4L203.8 301M548.7 384.4L562.1 384.4M293.3 431.6L286.8 444M184.5 489.6L180.5 476.5M184.5 592.8L196.5 594.6M337.9 539.1L331.7 549.6M447.8 586.6L440.8 596M373.1 550.4L366.8 561.9M318.1 669.4L326.8 678.8M462.1 633.2L475.2 633.3M259.6 420.1L252.2 431.3M188.5 496.5L196.5 491.4M426.6 406.9L439.5 408.4M386.3 550.3L378.8 562M264.3 313.5L258.3 324M419.4 559.5L412.8 571.6M445.8 325.7L440.2 336.3M360.3 596.7L351.9 609.6M508 646L521.8 643.3M338.6 443.3L346 454.1M439.5 408.4L454.4 408.1M238.1 548.2L242.9 559.9M590 296.9L594 303.3M501.5 419L514.7 419.5M426.3 479.8L420.2 490.6M204.6 489.8L212 502.4M298.4 324.5L303.8 338M433.3 562.1L426.3 571.9M230.5 559.7L242.9 559.9M540.3 655.8L554.8 653.7M386.5 454.6L378.4 466.9M594 649.7L594 663M514.7 419.5L529.3 419.2M279.9 606.7L286.7 616.3M548.7 432.6L564.4 431.6M216.4 489.2L226.6 500.6M313.6 324.9L319.5 338M506.9 294.3L514 290M344.4 335.7L338.2 350M390.1 306.6L386.3 314.2M238.8 455.1L245.6 466.5M278 572L292 574.7M590 400.2L594 409.9M529 349.1L521.7 361.1M564.4 431.6L573 430.8M359.3 383.4L351.2 396.1M391.2 400.2L398.6 405.7M360.4 336.3L351 348.9M383.2 386.3L372.9 384.5M381.9 350.3L384.8 359.8M534.5 360.8L531.4 372.4M541.9 348.8L534.5 360.8M270.1 372.5L262.9 384.4M447.5 396L439.5 408.4M447.4 371.5L452.5 383.7M320.2 501.7L312.6 514.7M196.4 454.4L209.3 455.6M392.5 349.7L401.5 360M340.6 703L332.8 690.6M298.8 371.6L307.3 383.7M459.4 373.3L465.9 384.7M299.9 594.6L319 596.4M191.8 302.4L180.5 316.6M230.9 469.3L245.6 466.5M541.7 396.3L548.3 408.3M383.2 606.7L373.4 609.2M251.7 408.3L259.6 420.1M569 325.4L581.6 324.9M483.3 584.7L492.6 583.1M285.6 632.5L279.7 643.5M310.6 609.2L324 608.4M320.2 408.2L325.9 421M568.5 514.3L562.7 527.6M245.6 466.5L258 467.3M222.2 525.2L218.5 538.9M303.9 479.9L318.7 477.6M486.6 489.6L492.6 479.8M330.4 408.9L339.1 421.1M366.8 656.2L359.8 667.5M184.5 400.2L180.5 409.9M238.6 526L230.7 537.2M318.7 477.6L331.9 479.6M259 538.9L266.9 548.8M542.5 489.4L555.5 490.3M197.6 643L203.6 655.6M494.6 489.6L501.3 483.5M218 654.7L224.1 667.5M402.6 666.8L407.6 679.8M540.8 632.9L557.5 632.6M339.1 421.1L330.3 430.7M191.2 586.8L196.5 594.6M554 290L541.7 302.3M555.5 490.3L568.5 491.1M247.2 703L260.5 703M305.2 549.4L314.3 561.1M405.7 515.2L419.1 512.1M403.2 388.1L420 395.3M231.9 655.6L237.8 667.6M590 503.4L580.1 505.9M273.2 538.9L280 550.1M580.1 505.9L568.5 514.3M237.7 431.8L243.9 442.8M351.4 419.6L345.4 433.9M294.5 380.3L307.3 383.7M379.9 481.4L378.4 466.9M319 549.8L324.1 560.2M419.1 512.1L432.7 512.4M568.4 585.1L559.6 595.6M269.5 694.3L253.6 691.5M269.5 591L256.9 585.5M513.7 559.1L507.4 574.5M203.3 419.8L208.7 430.3M300.1 500.8L312.2 489.8M188 655.4L203.6 655.6M535.7 596.7L527.8 609.6M210.2 668.3L224.1 667.5M287.9 503.4L279.9 503.4M420.5 443.5L413.3 456.1M255.5 608.4L251.2 620.3M210.1 313.4L214.9 326.2M366.8 561.9L372.4 573.9M492.1 525.2L507.8 526.8M275.9 393.2L269.5 384.5M340.9 608L332.8 620.5M392.4 325.4L400.2 337.2M506.9 294.3L513.8 303.6M252.2 431.3L243.9 442.8M541.7 302.3L554.9 302.4M580.1 609.2L567.9 610.6M224.1 667.5L237.8 667.6M318.5 455.4L326.7 466M435.6 442.8L430.2 454.3M260.1 680.7L270.7 678.3M347.4 478.4L339.7 489.8M549 479.4L555.5 490.3M279.9 386.3L276.5 378.2M230.7 443.3L243.9 442.8M528 540.4L540.7 539.1M351.9 609.6L345.4 619.9M440.2 336.3L433.7 348M554.9 302.4L568.5 302.4M190.5 323.6L202.7 325.7M594 316.6L581.6 324.9M330.6 456.7L340.3 468.9M270.7 678.3L284.3 678.9M342.8 691.9L359.6 690.8M397.9 380.3L403.2 388.1M291.3 338.6L298.7 349.7M280 455.6L292.4 455.6M238.7 619.1L244.7 631.4M474.1 350.4L482.1 359.9M202.7 325.7L214.9 326.2M340.6 290L337.5 302M339 396.1L345.7 405.7M307.3 383.7L311 394.5M312.6 514.7L318.4 526.2M373.4 505.9L367.9 514.2M313.8 467.3L326.7 466M387.2 290L380.6 290M217.4 371L223.3 384.1M486.9 348.6L493.3 360.3M252.6 337.1L265.6 337.9M351.2 396.1L359.9 406.6M476.3 384.5L474.7 370.9M266 644.4L270.4 655.9M380.7 631.4L369.9 644.7M285.2 349L298.7 349.7M326.1 514.3L318.4 526.2M586.6 481.4L582.4 466.4M476.3 384.5L483.3 378.2M426.3 479.8L440.7 479.6M233 632.3L239.4 644.6M300.7 655.5L304.6 667.5M298.7 349.7L312.8 349.2M332.4 359.9L346.5 362.6M395.2 599.8L403.2 594.6M180.5 290L184.5 296.9M362.9 301.3L359.4 313.2M494.6 606.7L506.9 604.1M291.2 667.6L284.3 678.9M580.1 299.4L567.3 290M353.5 538L359.7 548.8M433.6 302.6L425.2 313.9M279.7 643.5L270.4 655.9M346.5 362.6L359 360.6M403.2 594.6L412 598.1M272 420.5L277.9 430.7M287.9 296.9L279.9 296.9M180.5 393.2L184.5 386.3M397.8 550.6L406.2 561.8M446.4 301.7L438.2 311.7M310.7 656.7L304.6 667.5M327.2 290L340.6 290M294.5 586.8L313 584.5M191.2 483.5L190.3 489.8M516.3 514.3L528.6 514.8M284.4 419.8L293.3 431.6M404.4 371.9L420.4 373M184.5 606.7L196.7 604.1M493.9 667L486.8 679.5M205.2 395.3L215.8 395.9M498.6 393.2L506.6 388.1M372.9 694.3L367.2 703M318.6 432.2L312.1 443.3M473.8 585.7L468.6 596.8M295.2 508.9L286.7 513.1M291.4 313.3L298.4 324.5M554 703L567.3 703M196.5 491.4L204.6 489.8M575.3 524.6L587.8 524.7M501.9 508.9L516.3 514.3M330.3 430.7L325.2 443.5M215.8 395.9L232.9 393.6M286.7 513.1L277.3 512M412.6 550.2L406.2 561.8M285.8 686.3L294.5 690M291.9 496.5L287.9 489.6M180.5 556.5L189.6 560.2M180.5 543.1L180.5 556.5M407.3 290L421.5 301.1M212.7 550L225.8 551M473.9 324.8L467.3 337.6M369.1 443.3L372.8 454.5M476.7 402.7L468.7 407.3M252.7 478.4L246 490.5M455.4 479.3L446.8 488.6M294.5 690L299.9 697.9M305 315L298.4 324.5M379.2 496.5L383.2 489.6M464 560.4L454 573.6M372.9 338L381.9 350.3M225.8 551L238.1 548.2M502.6 469.1L505.3 477.9M258.4 561.8L274.2 560M485.3 326.1L479.6 336.6M191.2 483.5L197.4 479.2M413.3 456.1L406.1 467.3M541.1 420.9L558 421.6M470.3 478L461.1 489.9M433.9 703L441.5 691.9M331.5 503.2L339 513.9M366.1 347.8L359 360.6M383.2 489.6L391.2 489.6M506.6 491.4L522.9 500.5M246 490.5L250.9 501.7M384.2 335.3L392.5 349.7M274.2 560L284.2 562.2M433.1 373.5L424.5 384.3M210.8 383.9L215.8 395.9M334.8 338.6L344.4 335.7M347 502.1L353.6 513.2M560.5 573.4L575.1 573.3M562.5 362.5L555.3 371.1M317.7 572.2L330.8 574.5M570.6 349.5L562.5 362.5M223.3 384.1L232.9 393.6M180.5 369.9L188.1 371.3M506.6 620.4L499.3 630.9M395.2 599.8L403.5 604.1M427 598.2L440.8 596M498.6 496.5L494.6 503.4M576.1 360.9L568.1 373.5M313 631.5L320.2 643.3M432 586.5L447.8 586.6M327 372.2L331.4 384.9M391.2 606.7L398.6 612.2M250.1 525.7L259 538.9M383.2 592.8L372.9 591M501.3 586.8L506.6 594.6M482.6 393.2L476.3 384.5M358.9 644.3L353.7 656.5M340.9 608L351.9 609.6M427.2 361.3L442.9 360.6M482.6 496.5L473.8 496.9M498.6 393.2L506.9 397.6M286.7 409.8L284.4 419.8M590 606.7L586 599.8M494.6 696.1L492.6 686.3M359.9 406.6L365.9 420.5M522.1 620.9L533.6 619.7M180.5 409.9L191.8 420.1M490.6 703L474 703M502.9 372.3L514.2 371.6M264.9 526.5L259 538.9M180.5 463.2L192.5 467.2M586 599.8L590 592.8M446.5 536.7L439.4 549.8M590 489.6L586.6 481.4M577.2 496.9L568.5 491.1M408.9 655.7L402.6 666.8M567 632.5L583.9 631.8M365.9 420.5L360.6 431.5M184.5 696.1L196.5 697.9M339 396.1L351.2 396.1M188.5 599.8L196.5 594.6M296.6 537.7L305.2 549.4M237.8 667.6L232.4 680.5M224.9 595.2L231.7 607.8M493.4 409.8L486.7 420.4M256.6 656.1L264.7 667.3M440.3 668.4L445.5 679.6M265.5 430.8L274 445.2M203.6 655.6L218 654.7M397.9 483.5L406.1 467.3M351.2 396.1L366.1 397.4M419.6 584.8L427 598.2M287.9 296.9L286.7 306.6M386.3 314.2L378.7 325.1M255.9 443.4L251.8 455.3M365.6 608.3L374.4 619.4M277.9 430.7L286.8 444M196.7 294.3L207.2 290M279.9 400.2L277.3 408.7M594 330L588.8 337.3M191.8 420.1L203.3 419.8M279.9 696.1L269.5 694.3M225.2 430.9L237.7 431.8M191.2 690L180.5 689.7M418.3 324.7L425.8 335.8M197.4 479.2L204.6 489.8M252.8 667.7L264.7 667.3M346 454.1L353.6 467.2M462.6 441.6L454.9 454.2M579.6 694.3L580.7 703M506 454.8L502.6 469.1M237.7 431.8L252.2 431.3M387.2 496.5L391.2 503.4M490.6 290L500.6 290M469.3 500.2L461.5 513M542.6 678.9L554.5 678.1M467.3 337.6L462.2 349.3M197.5 312.5L210.1 313.4M531.4 372.4L537.3 384.1M357.2 454.9L366.3 468.6M413.4 478.3L420.2 490.6M296.6 679.4L310.5 678.3M274 445.2L286.8 444M275.9 599.8L269.5 591M196.7 500.8L212 502.4M264.6 618.4L269.9 632.8M479.6 336.6L474.1 350.4M506.9 500.8L501.9 508.9M498.8 350.4L508.3 360.6M228.9 326.1L243.5 326.1M543.7 372L548.7 384.4M561.8 454.4L576.2 454.7M331.4 384.9L339 396.1M426.3 692.7L441.5 691.9M339 513.9L345.8 526M204.3 633.3L197.6 643M291.3 620.2L285.6 632.5M508.3 360.6L514.2 371.6M318.5 455.4L330.6 456.7M403.5 294.3L407.3 290M245.5 374.7L251.3 385.2M515.9 349.8L521.7 361.1M383.2 696.1L389.2 686.3M594 663L580 679.3M420 395.3L426.6 406.9M493.4 616.3L486.5 632M594 583.1L586.9 572.6M353.6 513.2L359.3 524.3M353.6 467.2L366.3 468.6M327.2 703L317.4 690M484 512L480.2 525.7M490.6 496.5L482.6 496.5M203.8 301L197.5 312.5M405.5 631.6L400.8 643.9M455.4 479.3L470.3 478M217 300.9L210.1 313.4M304 642L310.7 656.7M476.3 694.3L474 703M219.2 632.1L233 632.3M196.7 294.3L191.8 302.4M359.3 524.3L353.5 538M318.1 669.4L310.5 678.3M331.5 503.2L347 502.1M339.1 656.9L345.8 669.6M196.7 604.1L196.5 594.6M266 644.4L279.7 643.5M540.6 290L541.7 302.3M300.1 294.3L295.2 302.4M334.1 668L326.8 678.8M392.2 537.4L397.8 550.6M340.6 290L353.9 290M540.8 513.2L555.2 513.3M311.9 419.8L318.6 432.2M196.7 397.6L197.7 408.1M370.5 600.2L360.3 596.7M360.6 431.5L369.1 443.3M238.1 548.2L230.5 559.7M324.4 585.3L334.4 596M284.2 562.2L292 574.7M295.2 302.4L286.7 306.6M300.7 655.5L310.7 656.7M568.5 302.4L562.2 312.8M277.3 512L270 505.9M439.4 549.8L449.2 559.4M318.3 313.3L325.6 324.7M567.3 703L580.7 703M189.1 539L204.4 536.4M587.4 305.5L594 303.3M283.9 496.5L279.9 503.4M216.4 489.2L212 502.4M313.6 324.9L303.8 338M270 505.9L267.1 496.9M332.8 313.5L338.3 324.2M488.9 561.5L496.6 574M180.5 556.5L180.5 569.8M367.2 290L362.9 301.3M280 314.2L291.4 313.3M303.9 479.9L312.2 489.8M501.3 483.5L505.3 477.9M594 543.1L583.8 538.1M494.4 549.4L505.8 550.4M439.8 454.4L447.1 467.8M269.5 487.8L264 478.6M387.2 290L391.2 296.9M594 436.5L587.3 431.1M594 556.5L594 569.8M400.2 337.2L407.1 346.6M249.8 548.3L266.9 548.8M513.6 325.8L508.1 336.5M561.9 335.9L554.9 349M291.4 313.3L305 315M318.7 477.6L327 490.2M544 560.6L557 562.8M392.5 349.7L384.8 359.8M403.5 500.8L398.6 508.9M413.1 337.2L420.5 348.9M298.3 561.1L314.3 561.1M459.4 373.3L452.5 383.7M198 360.9L188.1 371.3M247.2 290L244 301.2M236.5 383.2L245.3 395.2M325.6 324.7L338.3 324.2M541.7 396.3L532.7 408.5M414.9 501.4L405.7 515.2M383.2 606.7L380.7 615.2M442.9 360.6L447.4 371.5M379.9 687.9L389.2 686.3M204.1 347L216.7 347.2M474.7 370.9L465.9 384.7M348.9 573.6L358.4 573.8M590 606.7L594 623.1M191.2 586.8L197.5 572.3M372.9 338L384.2 335.3M191.2 483.5L192.5 467.2M379.2 599.8L373.4 609.2M453.8 598L468.6 596.8M494.6 400.2L493.4 409.8M490.6 703L494.6 696.1M330.4 408.9L325.9 421M180.5 529.8L189.1 539M407.1 346.6L420.5 348.9M197.6 643L188 655.4M486.6 400.2L484 408.7M317.2 619.6L332.8 620.5M180.5 316.6L197.5 312.5M273.2 538.9L266.9 548.8M453.1 359.6L467.4 362.1M231.9 655.6L224.1 667.5M289.5 525L296.6 537.7M590 503.4L587.4 512M286.9 538.4L280 550.1M319 549.8L314.3 561.1M531.4 372.4L543.7 372M494.6 696.1L500.6 703M586 496.5L580.1 505.9M264.7 667.3L270.7 678.3M287.9 400.2L279.9 400.2M203.3 419.8L198 430.8M587.4 615.2L580.1 609.2M299.9 388.1L307.3 383.7M594 316.6L594 330M250.1 525.7L264.9 526.5M331.7 549.6L324.1 560.2M405.8 418.4L414.2 431.1M453.3 644.9L466.4 645M248.9 597.7L255.5 608.4M476.3 384.5L465.9 384.7M413.4 314.1L418.3 324.7M180.5 330L180.5 343.3M286.8 444L292.4 455.6M466.9 666.3L474.3 677.5M378.8 562L372.4 573.9M451.2 432.2L447.2 442.9M279.9 386.3L269.5 384.5M501.9 302.4L513.8 303.6M319 596.4L310.6 609.2M488.8 654.9L501.6 656.4M380.7 305.5L373.4 299.4M577.2 600.2L567.9 610.6M180.5 649.7L188 655.4M330.6 456.7L326.7 466M594 623.1L594 636.4M462.1 419L473 420M304.4 431.3L312.1 443.3M561.8 479.7L555.5 490.3M488.5 444L493.8 453.3M218.6 417.3L231 420.3M353.1 491L347 502.1M579.6 384.5L568.1 395.3M522.1 669L532.4 667.5M493.1 336.4L498.8 350.4M285.8 686.3L284.3 678.9M506.9 431.3L520.6 431.3M225.5 479.4L231.1 491.1M279.9 606.7L270 609.2M532.6 454.8L529.1 467.1M265.5 430.8L277.9 430.7M287.9 592.8L294.5 586.8M486.9 348.6L482.1 359.9M379.9 481.4L389.2 479.8M305.1 620.8L313 631.5M319.4 384.2L311 394.5M540.4 441.5L554.6 442M276.5 378.2L277.3 361.6M297.7 444.7L312.1 443.3M383.2 386.3L389.2 376.6M587.4 615.2L594 623.1M404.4 371.9L414.2 383.4M506.9 294.3L501.9 302.4M180.5 356.6L188.1 371.3M492.6 686.3L486.8 679.5M387.2 703L391.2 696.1M233 632.3L224.8 644.1M346 454.1L357.2 454.9M217.2 609.3L231.7 607.8M484 512L476.7 505.9M210.8 597.3L224.9 595.2M225.5 479.4L238.1 478.9M244.7 631.4L239.4 644.6M483.3 378.2L482.1 359.9M295.2 612.2L305.1 620.8M425.2 620L440 619.9M541 608.8L553.8 607.8M191.8 508.9L180.5 516.5M575.6 644L581.6 654.6M180.5 393.2L184.5 400.2M492.6 376.6L493.3 360.3M486.5 632L499.3 630.9M244 301.2L236.2 312.9M332 642.7L339.1 656.9M389.2 376.6L380.7 372.4M284.4 419.8L277.9 430.7M590 696.1L579.6 694.3M218.5 538.9L225.8 551M514.1 679.7L507.4 691.7M196.5 491.4L190.3 489.8M196.5 388.1L210.8 383.9M594 290L580.7 290M535.8 642.9L549.8 645.1M299.8 421.6L293.3 431.6M590 592.8L586.6 584.7M506.6 697.9L507.4 691.7M266.9 548.8L274.2 560M188.5 393.2L184.5 400.2M541.7 396.3L554.9 395.8M359.8 667.5L353.7 679.1M421.7 537.4L427.1 547.2M549.8 645.1L561.1 643.4M569.4 656.3L581.6 654.6M314.3 561.1L317.7 572.2M386.1 431.3L394 442.4M442.2 525.9L453.6 526.8M338.3 324.2L344.4 335.7M467.7 548.3L475.4 562.5M379.3 443.9L372.8 454.5M180.5 290L207.2 290M473.8 393.7L468.7 407.3M507.6 313.4L501.1 325.5M486.6 296.9L474 290M473.2 538.5L487 537M246 490.5L237.5 503.2M384.2 335.3L381.9 350.3M180.5 703L180.5 689.7M359.4 313.2L367.4 325.4M196.5 491.4L197.4 479.2M218 679.3L232.4 680.5M540.2 324.3L549.5 337.1M370.5 393.7L372.9 384.5M347 502.1L339 513.9M259.5 490.6L250.9 501.7M524.9 550.3L536.5 550.1M295.2 405.7L306.1 409.1M562.2 312.8L576.6 313.8M223.3 384.1L215.8 395.9M306.6 692.4L317.4 690M269.5 384.5L270.1 372.5M588.8 337.3L582 348.5M318.3 313.3L332.8 313.5M357.9 501L353.6 513.2M479.6 454.3L487.9 466M567.9 610.6L574.7 619.7M439.4 501.5L447.1 515.2M197.2 337.2L212.4 337.8M391.2 503.4L398.6 508.9M327 372.2L319.4 384.2M224.3 361.6L217.4 371M354.3 325.3L367.4 325.4M391.2 606.7L403.5 604.1M267.1 600.2L248.9 597.7M325.7 630L320.2 643.3M259.5 395.2L264 407.8M387.2 290L393.9 290M226.9 348.5L246.4 349M482.6 393.2L473.8 393.7M259.1 513.8L264.9 526.5M506.6 697.9L500.6 703M400.2 337.2L413.1 337.2M498.6 393.2L494.6 386.3M277.3 305.5L264.3 313.5M594 569.8L586.9 572.6M574.7 619.7L583.9 631.8M347.4 478.4L359.9 479.4M286.7 513.1L277.6 525.8M313.9 703L317.4 690M475 466L487.9 466M277.3 361.6L290.9 361.3M359.9 406.6L351.4 419.6M454.4 408.1L448.5 419.6M433.7 348L446.8 348.8M277.3 408.7L284.4 419.8M567.3 290L568.5 302.4M224.8 644.1L218 654.7M379.9 584.7L386.8 573.5M204.6 489.8L216.4 489.2M425.8 644.2L433.3 657.6M389.2 686.3L391.7 679.4M296.6 537.7L294.1 550.5M389.2 583.1L400.7 572.7M447.1 515.2L461.5 513M256.6 656.1L252.8 667.7M318.4 526.2L326.8 537.5M494.6 606.7L493.4 616.3M580.1 299.4L580.7 290M373.4 505.9L357.9 501M231 420.3L237.7 431.8M295.2 508.9L298.4 515.1M440.3 668.4L432.9 679.3M459.7 655.5L466.9 666.3M397.9 483.5L393.7 467.7M312.5 537.5L305.2 549.4M527.3 703L540.6 703M287.9 296.9L295.2 302.4M522.7 525.9L534.6 525.2M484 408.7L486.7 420.4M275.9 393.2L279.9 386.3M334.4 596L340.9 608M277.9 430.7L274 445.2M393.9 703L407.3 703M537.3 384.1L548.7 384.4M455.5 666.6L445.5 679.6M359.7 548.8L350.8 560.5M372.9 694.3L380.6 703M279.9 296.9L286.7 306.6M434.3 419.4L441.1 432.2M534.6 525.2L548.9 525.8M476.7 609.2L459.7 608.7M555.1 537.7L569.6 538.6M438.2 311.7L445.8 325.7M415.4 407.9L426.6 406.9M180.5 343.3L180.5 356.6M267.1 393.7L262.9 384.4M300.1 604.1L310.6 609.2M312.1 443.3L318.5 455.4M481.8 431.3L473.3 442.9M406.2 561.8L400.7 572.7M572.4 479.4L568.5 491.1M569.6 538.6L583.8 538.1M420.2 490.6L428 503.5M435.8 324.8L425.8 335.8M347 595.6L340.9 608M357.2 454.9L353.6 467.2M353.9 290L362.9 301.3M299.9 697.9L313.9 703M291.9 599.8L300.1 604.1M594 636.4L594 649.7M486.7 420.4L501.5 419M395.2 496.5L391.2 503.4M494.6 296.9L500.6 290M515.6 443.1L521.6 455M275.9 599.8L267.1 600.2M215.9 560.2L230.5 559.7M395.2 393.2L391.2 400.2M543.7 372L537.3 384.1M531.9 432.7L548.7 432.6M331.4 384.9L325.1 396.2M387.2 393.2L391.2 386.3M279.9 592.8L269.5 591M594 636.4L583.9 631.8M397.9 586.8L403.2 594.6M266.1 572.1L278 572M383.2 696.1L379.9 687.9M515.9 349.8L508.3 360.6M397.9 483.5L403.2 491.4M555.3 371.1L548.7 384.4M277.3 615.2L269.9 632.8M332.8 620.5L340 631.6M420 395.3L415.4 407.9M537.5 335.9L541.9 348.8M345.7 384.9L339 396.1M353.6 513.2L345.8 526M180.5 649.7L197.6 643M492.6 376.6L501.3 380.3M379.2 393.2L370.5 393.7M391.2 696.1L389.2 686.3M258.4 371.9L251.3 385.2M356.1 585.8L366.1 584.8M345.4 619.9L353.8 630.5M490.6 496.5L486.6 503.4M493.4 306.6L484 305.5M434.4 396.1L426.6 406.9M257.7 632.9L266 644.4M184.5 296.9L180.5 303.3M367.9 514.2L359.3 524.3M512.9 395.6L521.8 407.1M473.8 600.2L476.3 591M432.7 512.4L428.4 527M269.9 632.8L279.7 643.5M304 642L300.7 655.5M244.7 608.4L255.5 608.4M473.8 496.9L476.3 487.8M371.5 361.1L384.8 359.8M529 349.1L541.9 348.8M286.7 306.6L291.4 313.3M320.2 643.3L310.7 656.7M306.1 409.1L311.9 419.8M339.1 656.9L334.1 668M454 618.5L468 619.1M590 296.9L587.4 305.5M433.1 373.5L447.4 371.5M210.2 525.3L204.4 536.4M540.6 290L529.1 300.7M392.2 537.4L386.3 550.3M180.5 356.6L198 360.9M587.4 408.7L574.6 407.2M353.7 656.5L345.8 669.6M468 619.1L480 620M590 606.7L587.4 615.2M412.7 526.8L421.7 537.4M515.9 631.6L531.1 632.3M311.9 419.8L304.4 431.3M245.3 395.2L259.5 395.2M244.2 538.1L249.8 548.3M405.3 538L397.8 550.6M439.4 549.8L433.3 562.1M493.4 306.6L494.6 314M388.2 667.6L391.7 679.4M531.1 632.3L540.8 632.9M325.9 421L318.6 432.2M561.1 643.4L575.6 644M372.9 591L360.3 596.7M283.9 496.5L287.9 503.4M521.8 407.1L532.7 408.5M455.9 549.9L449.2 559.4M332.8 313.5L325.6 324.7M283.9 393.2L287.9 400.2M488.9 561.5L479.6 573.9M267.1 600.2L256.9 585.5M575.6 644L587.6 644.5M468.6 596.8L459.7 608.7M185.8 667.8L198.7 668.9M594 409.9L594 423.2M532.7 408.5L548.3 408.3M499.6 562L496.6 574M367.4 325.4L372.9 338M198.7 668.9L210.2 668.3M318.7 477.6L312.2 489.8M406.4 444.2L400.6 454.5M533.5 313.5L527.4 325.3M522.2 479.5L530.2 489.6M350.8 560.5L358.4 573.8M324 608.4L317.2 619.6M279.9 696.1L285.8 686.3M413.1 337.2L407.1 346.6M529.1 300.7L541.7 302.3M191.2 380.3L205.2 373.2M398.6 612.2L399.3 621.1M580.1 402.7L568.1 395.3M303.5 455.1L313.8 467.3M327.2 290L323.2 301.6M243.2 678.7L260.1 680.7M535.8 478.7L542.5 489.4M218 443.3L230.7 443.3M465.9 384.7L459.7 395.3M594 496.5L594 476.5M327 490.2L331.5 503.2M213.6 620.6L219.2 632.1M387.2 496.5L379.2 496.5M446.8 348.8L453.1 359.6M419 607.8L411.5 618.8M352.1 372.3L359.3 383.4M461.7 586.4L473.8 585.7M251.3 385.2L245.3 395.2M332.8 690.6L342.8 691.9M265.7 455.2L280 455.6M380.7 512L367.9 514.2M462.2 349.3L467.4 362.1M490.6 290L486.6 296.9M325.1 396.2L330.4 408.9M262.9 384.4L259.5 395.2M373.4 402.7L359.9 406.6M298.4 515.1L307.5 524M298.6 467.1L313.8 467.3M486.6 400.2L493.4 409.8M353.8 630.5L344.2 642.9M498.6 599.8L494.6 606.7M300.1 294.3L313.9 290M289.5 525L286.9 538.4M490.6 599.8L494.6 592.8M403.2 491.4L414.9 501.4M249.3 644.4L256.6 656.1M490.6 496.5L494.6 489.6M196.7 294.3L203.8 301M587.4 408.7L580.1 402.7M307.5 524L296.6 537.7M413.4 478.3L426.3 479.8M326.8 537.5L331.7 549.6M226.6 500.6L237.5 503.2M421.5 301.1L425.2 313.9M286.5 656.7L291.2 667.6M482.6 599.8L473.8 600.2M318.1 361L332.4 359.9M210.4 643.3L224.8 644.1M405.8 418.4L401.5 432M337.9 539.1L348 548.1M237.5 503.2L250.9 501.7M313.9 290L327.2 290M513.8 303.6L507.6 313.4M259.6 420.1L265.5 430.8M466.9 666.3L460.8 681.9M372.9 384.5L364.4 371.3M421.5 420.2L414.2 431.1M243.8 654.6L256.6 656.1M283.9 290L287.9 296.9M386.3 550.3L393.9 559.8M502.5 516.4L516.3 514.3M540.6 703L554 703M548.9 525.8L562.7 527.6M360.3 596.7L365.6 608.3M481.1 667.5L474.3 677.5M304.4 431.3L297.7 444.7M278.8 666.8L291.2 667.6M300.1 500.8L295.2 508.9M488.5 444L479.6 454.3M474 290L460.8 301.9M433.3 562.1L440.2 572.3M180.5 529.8L180.5 543.1M380.7 615.2L374.4 619.4M562.7 527.6L575.3 524.6M412 598.1L419 607.8M594 393.2L594 409.9M386.5 454.6L393.7 467.7M291.2 667.6L304.6 667.5M502.9 442L493.8 453.3M326.8 678.8L339 680M279.9 606.7L277.3 615.2M283.9 496.5L279.9 489.6M276.5 687.9L285.8 686.3M449.2 559.4L454 573.6M198 550.1L212.7 550M446.8 488.6L453.7 500.9M462.5 324.1L451.7 337.7M279.9 503.4L277.3 512M236.2 312.9L252.2 311.8M351.2 443.1L357.2 454.9M514 703L507.4 691.7M590 489.6L594 476.5M440.7 479.6L433.3 489M339 680L353.7 679.1M359.3 383.4L366.1 397.4M454.6 691.6L469.3 691.2M383.2 503.4L379.2 496.5M380.7 408.7L365.9 420.5M360.4 336.3L366.1 347.8M242.9 559.9L258.4 561.8M283.9 703L299.9 697.9M541.9 348.8L548.6 360.7M273.2 326.7L285 325.2M400.6 454.5L393.7 467.7M387.2 599.8L391.2 606.7M568.1 373.5L562.1 384.4M270 505.9L250.9 501.7M414.2 383.4L420 395.3M320.2 501.7L326.1 514.3M387.2 703L383.2 696.1M391.2 386.3L389.2 376.6M378.4 466.9L393.7 467.7M340.6 703L342.8 691.9M292 574.7L304.4 573.4M319.5 338L334.8 338.6M180.5 703L193.8 703M373.4 609.2L365.6 608.3M554.9 349L548.6 360.7M285.6 632.5L290.6 644.8M406.1 585.7L419.6 584.8M374.4 619.4L380.7 631.4M594 356.6L586.7 361.2M459.7 395.3L454.4 408.1M351 348.9L366.1 347.8M373.4 299.4L362.9 301.3M379.2 599.8L372.9 591M492.6 376.6L482.1 359.9M295.8 632.1L304 642M419.6 584.8L432 586.5M332 642.7L326 656.8M366.1 347.8L381.9 350.3M401.5 360L414.8 362.2M238.6 526L244.2 538.1M492.6 583.1L501.3 586.8M494.6 489.6L506.6 491.4M344.2 642.9L339.1 656.9M324 608.4L340.9 608M590 592.8L579.6 591M414.8 362.2L427.2 361.3M283.9 290L273.9 290M339.1 421.1L345.4 433.9M459.4 373.3L474.7 370.9M426.6 406.9L434.3 419.4M554 290L554.9 302.4M403.2 697.9L393.9 703M277.3 305.5L270 299.4M594 599.8L590 606.7M421.7 537.4L412.6 550.2M353.9 703L367.2 703M197.9 527L210.2 525.3M379.9 656L373.3 667.9M506.6 620.4L522.1 620.9M351.4 419.6L360.6 431.5M560.6 667.5L554.5 678.1M422.5 680.6L413.9 690.7M311 394.5L325.1 396.2M594 449.9L587.4 454.5M594 556.5L575.7 550.4M432.1 539.6L427.1 547.2M269.5 487.8L276.5 481.4M467.7 548.3L464 560.4M180.5 303.3L180.5 316.6M513.7 559.1L519.4 574.6M230.7 537.2L244.2 538.1M414.3 666.7L422.5 680.6M535.7 596.7L541 608.8M401.5 432L394 442.4M325.1 396.2L339 396.1M548.3 408.3L559.7 407.7M373.4 402.7L366.1 397.4M482.7 551.2L475.4 562.5M359.4 313.2L354.3 325.3M300.1 500.8L298.4 515.1M594 569.8L594 583.1M252.2 431.3L255.9 443.4M280 550.1L294.1 550.5M540.2 324.3L537.5 335.9M389.2 479.8L393.7 467.7M435.6 442.8L439.8 454.4M594 423.2L594 436.5M559.7 407.7L574.6 407.2M579.6 487.8L572.4 479.4M198 430.8L208.7 430.3M279.9 386.3L285.8 376.6M184.5 696.1L180.5 689.7M374.4 314.2L367.4 325.4M403.5 294.3L398.6 302.4M531.8 562L519.4 574.6M351.9 609.6L358.3 620.3M294.1 550.5L305.2 549.4M556.9 324.9L549.5 337.1M324.1 560.2L339.6 561.7M447.2 442.9L454.9 454.2M479.6 454.3L475 466M208.7 430.3L225.2 430.9M287.9 386.3L294.5 380.3M439.4 501.5L432.7 512.4M380.7 512L373.4 505.9M406.1 325.1L413.1 337.2M391.2 503.4L403.5 500.8M212 502.4L204.5 516.5M339.6 561.7L350.8 560.5M447.3 609L454 618.5M340.6 290L352.8 301.6M372.4 573.9L386.8 573.5M260.5 290L258.8 302.1M493.8 453.3L487.9 466M243.9 442.8L255.9 443.4M453.7 500.9L447.1 515.2M594 623.1L583.9 631.8M196.7 604.1L207 609.2M451.7 337.7L446.8 348.8M514.2 371.6L519.8 382.7M386.8 573.5L400.7 572.7M515.2 585.7L529.8 584.4M196.5 697.9L193.8 703M180.5 636.4L197.6 643M292.4 455.6L303.5 455.1M367.2 703L359.6 690.8M313.9 703L306.6 692.4M391.2 296.9L393.9 290M380.7 631.4L384.8 643M529.8 584.4L542.2 584.2M326.1 514.3L331.9 525.3M326.7 466L340.3 468.9M476.3 694.3L483.3 687.9M425.8 644.2L421.4 655.7M447.3 609L459.7 608.7M594 463.2L587.4 454.5M340.3 468.9L353.6 467.2M318.4 526.2L312.5 537.5M405.7 515.2L412.7 526.8M494.6 606.7L501.9 612.2M483.3 687.9L492.6 686.3M279.7 643.5L286.5 656.7M577.2 600.2L579.6 591M440.6 645.3L433.3 657.6M459.7 655.5L455.5 666.6M191.1 633.2L204.3 633.3M397.9 586.8L400.7 572.7M331.9 525.3L326.8 537.5M440.7 479.6L455.4 479.3M486.6 606.7L493.4 616.3M370.5 496.9L357.9 501M446.4 301.7L453.5 312.8M579.6 591L586.6 584.7M310.7 656.7L318.1 669.4M513.8 538.1L505.8 550.4M290.6 644.8L300.7 655.5M286.7 513.1L298.4 515.1M476.9 656L466.9 666.3M590 489.6L584.4 490.8M493.9 667L499.5 678.6M239.4 644.6L249.3 644.4M184.5 296.9L196.7 294.3M434.3 419.4L429.4 433.2M447.5 396L459.7 395.3M367.3 538.8L373.1 550.4M320.2 501.7L331.5 503.2M460.8 301.9L467.6 315.6M326 656.8L334.1 668M560.3 549.4L557 562.8M541.7 302.3L533.5 313.5M507.4 666.9L514.1 679.7M330.3 430.7L338.6 443.3M249.3 644.4L266 644.4M448.5 419.6L441.1 432.2M270.4 655.9L286.5 656.7M473.8 600.2L459.7 608.7M245.5 421.3L259.6 420.1M412.6 550.2L419.4 559.5M291.9 496.5L300.1 500.8M453.5 312.8L445.8 325.7M210.7 573.1L205.7 585.1M269.5 384.5L262.9 384.4M295.2 612.2L310.6 609.2M345.4 433.9L351.2 443.1M286.5 656.7L300.7 655.5M304.6 667.5L318.1 669.4M270 402.7L264 407.8M515.6 443.1L506 454.8M305 315L313.6 324.9M293.3 431.6L304.4 431.3M464 560.4L465.5 572.5M467.6 315.6L462.5 324.1M184.5 386.3L188.1 371.3M180.5 343.3L197.2 337.2M485.3 326.1L493.1 336.4M440.8 596L447.3 609M279.9 489.6L269.5 487.8M252.2 311.8L264.3 313.5M413.3 456.1L419.8 467.1M318.1 669.4L334.1 668M527.3 443.9L521.6 455M353.7 679.1L366.2 678.6M287.9 503.4L300.1 500.8M325.2 443.5L338.6 443.3M313.8 467.3L318.7 477.6M383.2 296.9L380.7 305.5M501.1 325.5L508.1 336.5M537.5 335.9L529 349.1M264.3 313.5L280 314.2M264 478.6L259.5 490.6M430.2 454.3L433.5 466M366.2 678.6L381.9 680M379.2 393.2L373.4 402.7M338.6 443.3L351.2 443.1M372.8 454.5L386.5 454.6M345.4 619.9L340 631.6M403.2 388.1L414.2 383.4M313.9 290L309.7 300.6M549.5 337.1L541.9 348.8M570.6 349.5L576.1 360.9M298.4 324.5L313.6 324.9M441.8 383L447.5 396M523.3 690.6L534.9 690.9M594 423.2L584.1 419.7M379.9 584.7L366.1 584.8M269.9 632.8L266 644.4M386.5 454.6L400.6 454.5M358.3 620.3L353.8 630.5M576.1 360.9L580.5 373.6M582 348.5L586.7 361.2M411.5 618.8L419.8 631.3M344.4 335.7L360.4 336.3M527.7 394.3L521.8 407.1M180.5 436.5L198 430.8M473.8 393.7L459.7 395.3M391.2 606.7L390.1 616.3M286.7 306.6L280 314.2M419.8 467.1L433.5 466M383.2 592.8L379.9 584.7M191.8 405.7L180.5 409.9M358.9 644.3L366.8 656.2M360.4 336.3L372.9 338M475.2 633.3L466.4 645M381.9 350.3L392.5 349.7M506.6 697.9L514 703M286.7 409.8L299.8 421.6M391.2 592.8L389.2 583.1M412.7 526.8L405.3 538M549 479.4L561.8 479.7M369.9 644.7L379.9 656M494.6 696.1L501.3 690M392.5 349.7L407.1 346.6M264.9 526.5L273.2 538.9M476.7 609.2L480 620"/><rect x="180.5" y="290" width="413.5" height="413" fill="none" stroke="#1a1a1a" stroke-width="1.6"/><rect x="180.5" y="290" width="7" height="7" fill="#8c9cb0" stroke="#222228" stroke-width="0.9"/><rect x="180.5" y="389.8" width="7" height="7" fill="#8c9cb0" stroke="#222228" stroke-width="0.9"/><rect x="180.5" y="493" width="7" height="7" fill="#8c9cb0" stroke="#222228" stroke-width="0.9"/><rect x="180.5" y="596.2" width="7" height="7" fill="#8c9cb0" stroke="#222228" stroke-width="0.9"/><rect x="180.5" y="696" width="7" height="7" fill="#8c9cb0" stroke="#222228" stroke-width="0.9"/><rect x="280.4" y="290" width="7" height="7" fill="#8c9cb0" stroke="#222228" stroke-width="0.9"/><rect x="280.4" y="389.8" width="7" height="7" fill="#8c9cb0" stroke="#222228" stroke-width="0.9"/><rect x="280.4" y="493" width="7" height="7" fill="#8c9cb0" stroke="#222228" stroke-width="0.9"/><rect x="280.4" y="596.2" width="7" height="7" fill="#8c9cb0" stroke="#222228" stroke-width="0.9"/><rect x="280.4" y="696" width="7" height="7" fill="#8c9cb0" stroke="#222228" stroke-width="0.9"/><rect x="383.8" y="290" width="7" height="7" fill="#8c9cb0" stroke="#222228" stroke-width="0.9"/><rect x="383.8" y="389.8" width="7" height="7" fill="#8c9cb0" stroke="#222228" stroke-width="0.9"/><rect x="383.8" y="493" width="7" height="7" fill="#8c9cb0" stroke="#222228" stroke-width="0.9"/><rect x="383.8" y="596.2" width="7" height="7" fill="#8c9cb0" stroke="#222228" stroke-width="0.9"/><rect x="383.8" y="696" width="7" height="7" fill="#8c9cb0" stroke="#222228" stroke-width="0.9"/><rect x="487.1" y="290" width="7" height="7" fill="#8c9cb0" stroke="#222228" stroke-width="0.9"/><rect x="487.1" y="389.8" width="7" height="7" fill="#8c9cb0" stroke="#222228" stroke-width="0.9"/><rect x="487.1" y="493" width="7" height="7" fill="#8c9cb0" stroke="#222228" stroke-width="0.9"/><rect x="487.1" y="596.2" width="7" height="7" fill="#8c9cb0" stroke="#222228" stroke-width="0.9"/><rect x="487.1" y="696" width="7" height="7" fill="#8c9cb0" stroke="#222228" stroke-width="0.9"/><rect x="587" y="290" width="7" height="7" fill="#8c9cb0" stroke="#222228" stroke-width="0.9"/><rect x="587" y="389.8" width="7" height="7" fill="#8c9cb0" stroke="#222228" stroke-width="0.9"/><rect x="587" y="493" width="7" height="7" fill="#8c9cb0" stroke="#222228" stroke-width="0.9"/><rect x="587" y="596.2" width="7" height="7" fill="#8c9cb0" stroke="#222228" stroke-width="0.9"/><rect x="587" y="696" width="7" height="7" fill="#8c9cb0" stroke="#222228" stroke-width="0.9"/><path d="M283.9 290V703M387.2 290V703M490.6 290V703M180.5 393.2H594M180.5 496.5H594M180.5 599.8H594" stroke="#f55a28" stroke-width="1.15" stroke-dasharray="8 5" fill="none"/><path d="M180.5 283.5V296M180.5 697V703M283.9 283.5V296M283.9 697V703M387.2 283.5V296M387.2 697V703M490.6 283.5V296M490.6 697V703M594 283.5V296M594 697V703M174 290H186.5M588 290H600.5M174 393.2H186.5M588 393.2H600.5M174 496.5H186.5M588 496.5H600.5M174 599.8H186.5M588 599.8H600.5M174 703H186.5M588 703H600.5" stroke="#ff5a1e" stroke-width="1.4" fill="none"/><g font-family="Liberation Sans, sans-serif"><circle cx="180.5" cy="267.1" r="6.0" fill="none" stroke="#fff" stroke-width="1.2" opacity="0.8"/><circle cx="180.5" cy="267.1" r="4.75" fill="#fff" stroke="#000" stroke-width="1.35"/><text x="180.5" y="270.7" font-size="10" font-weight="bold" text-anchor="middle">A</text><circle cx="180.5" cy="726.6" r="6.0" fill="none" stroke="#fff" stroke-width="1.2" opacity="0.8"/><circle cx="180.5" cy="726.6" r="4.75" fill="#fff" stroke="#000" stroke-width="1.35"/><text x="180.5" y="730.2" font-size="10" font-weight="bold" text-anchor="middle">A</text><circle cx="283.9" cy="267.1" r="6.0" fill="none" stroke="#fff" stroke-width="1.2" opacity="0.8"/><circle cx="283.9" cy="267.1" r="4.75" fill="#fff" stroke="#000" stroke-width="1.35"/><text x="283.9" y="270.7" font-size="10" font-weight="bold" text-anchor="middle">B</text><circle cx="283.9" cy="726.6" r="6.0" fill="none" stroke="#fff" stroke-width="1.2" opacity="0.8"/><circle cx="283.9" cy="726.6" r="4.75" fill="#fff" stroke="#000" stroke-width="1.35"/><text x="283.9" y="730.2" font-size="10" font-weight="bold" text-anchor="middle">B</text><circle cx="387.2" cy="267.1" r="6.0" fill="none" stroke="#fff" stroke-width="1.2" opacity="0.8"/><circle cx="387.2" cy="267.1" r="4.75" fill="#fff" stroke="#000" stroke-width="1.35"/><text x="387.2" y="270.7" font-size="10" font-weight="bold" text-anchor="middle">C</text><circle cx="387.2" cy="726.6" r="6.0" fill="none" stroke="#fff" stroke-width="1.2" opacity="0.8"/><circle cx="387.2" cy="726.6" r="4.75" fill="#fff" stroke="#000" stroke-width="1.35"/><text x="387.2" y="730.2" font-size="10" font-weight="bold" text-anchor="middle">C</text><circle cx="490.6" cy="267.1" r="6.0" fill="none" stroke="#fff" stroke-width="1.2" opacity="0.8"/><circle cx="490.6" cy="267.1" r="4.75" fill="#fff" stroke="#000" stroke-width="1.35"/><text x="490.6" y="270.7" font-size="10" font-weight="bold" text-anchor="middle">D</text><circle cx="490.6" cy="726.6" r="6.0" fill="none" stroke="#fff" stroke-width="1.2" opacity="0.8"/><circle cx="490.6" cy="726.6" r="4.75" fill="#fff" stroke="#000" stroke-width="1.35"/><text x="490.6" y="730.2" font-size="10" font-weight="bold" text-anchor="middle">D</text><circle cx="594" cy="267.1" r="6.0" fill="none" stroke="#fff" stroke-width="1.2" opacity="0.8"/><circle cx="594" cy="267.1" r="4.75" fill="#fff" stroke="#000" stroke-width="1.35"/><text x="594" y="270.7" font-size="10" font-weight="bold" text-anchor="middle">E</text><circle cx="594" cy="726.6" r="6.0" fill="none" stroke="#fff" stroke-width="1.2" opacity="0.8"/><circle cx="594" cy="726.6" r="4.75" fill="#fff" stroke="#000" stroke-width="1.35"/><text x="594" y="730.2" font-size="10" font-weight="bold" text-anchor="middle">E</text><circle cx="158.9" cy="290" r="6.0" fill="none" stroke="#fff" stroke-width="1.2" opacity="0.8"/><circle cx="158.9" cy="290" r="4.75" fill="#fff" stroke="#000" stroke-width="1.35"/><text x="158.9" y="293.6" font-size="10" font-weight="bold" text-anchor="middle">5</text><circle cx="615.7" cy="290" r="6.0" fill="none" stroke="#fff" stroke-width="1.2" opacity="0.8"/><circle cx="615.7" cy="290" r="4.75" fill="#fff" stroke="#000" stroke-width="1.35"/><text x="615.7" y="293.6" font-size="10" font-weight="bold" text-anchor="middle">5</text><circle cx="158.9" cy="393.2" r="6.0" fill="none" stroke="#fff" stroke-width="1.2" opacity="0.8"/><circle cx="158.9" cy="393.2" r="4.75" fill="#fff" stroke="#000" stroke-width="1.35"/><text x="158.9" y="396.9" font-size="10" font-weight="bold" text-anchor="middle">4</text><circle cx="615.7" cy="393.2" r="6.0" fill="none" stroke="#fff" stroke-width="1.2" opacity="0.8"/><circle cx="615.7" cy="393.2" r="4.75" fill="#fff" stroke="#000" stroke-width="1.35"/><text x="615.7" y="396.9" font-size="10" font-weight="bold" text-anchor="middle">4</text><circle cx="158.9" cy="496.5" r="6.0" fill="none" stroke="#fff" stroke-width="1.2" opacity="0.8"/><circle cx="158.9" cy="496.5" r="4.75" fill="#fff" stroke="#000" stroke-width="1.35"/><text x="158.9" y="500.1" font-size="10" font-weight="bold" text-anchor="middle">3</text><circle cx="615.7" cy="496.5" r="6.0" fill="none" stroke="#fff" stroke-width="1.2" opacity="0.8"/><circle cx="615.7" cy="496.5" r="4.75" fill="#fff" stroke="#000" stroke-width="1.35"/><text x="615.7" y="500.1" font-size="10" font-weight="bold" text-anchor="middle">3</text><circle cx="158.9" cy="599.8" r="6.0" fill="none" stroke="#fff" stroke-width="1.2" opacity="0.8"/><circle cx="158.9" cy="599.8" r="4.75" fill="#fff" stroke="#000" stroke-width="1.35"/><text x="158.9" y="603.4" font-size="10" font-weight="bold" text-anchor="middle">2</text><circle cx="615.7" cy="599.8" r="6.0" fill="none" stroke="#fff" stroke-width="1.2" opacity="0.8"/><circle cx="615.7" cy="599.8" r="4.75" fill="#fff" stroke="#000" stroke-width="1.35"/><text x="615.7" y="603.4" font-size="10" font-weight="bold" text-anchor="middle">2</text><circle cx="158.9" cy="703" r="6.0" fill="none" stroke="#fff" stroke-width="1.2" opacity="0.8"/><circle cx="158.9" cy="703" r="4.75" fill="#fff" stroke="#000" stroke-width="1.35"/><text x="158.9" y="706.6" font-size="10" font-weight="bold" text-anchor="middle">1</text><circle cx="615.7" cy="703" r="6.0" fill="none" stroke="#fff" stroke-width="1.2" opacity="0.8"/><circle cx="615.7" cy="703" r="4.75" fill="#fff" stroke="#000" stroke-width="1.35"/><text x="615.7" y="706.6" font-size="10" font-weight="bold" text-anchor="middle">1</text></g><path d="M256.8 393.5L266.5 388.5V398.5Z" fill="none" stroke="#7aea7a" stroke-width="1.8" stroke-linejoin="round"/></svg>
<div class="a" style="left:264px;top:407px;width:217px;height:198px;background:#fff;border:1px solid #7a7a7a;box-sizing:border-box"></div>
<div class="t " style="left:267.90px;top:409.95px;font-size:11.70px;line-height:14px;color:#000;font-weight:bold">Select Entity</div>
<div class="a" style="left:267px;top:426px;width:211px;height:54px;border:1px solid #7a7a7a;border-right-color:#8a8a8a;border-bottom-color:#8a8a8a;box-sizing:border-box"></div>
<div class="a" style="left:268px;top:427px;width:209px;height:13px;background:#0078d7"></div>
<div class="t " style="left:268.00px;top:427.92px;font-size:10.90px;line-height:13px;color:#fff;">Solver Element 2D 3844</div>
<div class="t " style="left:268.00px;top:440.92px;font-size:10.90px;line-height:13px;color:#000;">Solver Element 2D 3784</div>
<div class="t " style="left:268.00px;top:453.92px;font-size:10.90px;line-height:13px;color:#000;">4</div>
<div class="t " style="left:268.00px;top:466.92px;font-size:10.90px;line-height:13px;color:#000;">AG 1</div>
<div class="a" style="left:265px;top:481px;width:214px;height:1px;background:#000"></div>
<div class="t " style="left:267.30px;top:483.34px;font-size:10.55px;line-height:13px;color:#000;">X - Short Term Uncracked = 113.21%</div>
<div class="t " style="left:267.30px;top:496.04px;font-size:10.55px;line-height:13px;color:#000;">X - Short Term + Cracking = 113.21%</div>
<div class="t " style="left:267.30px;top:509.34px;font-size:10.55px;line-height:13px;color:#000;">X - Creep + Cracking = 51.02%</div>
<div class="t " style="left:267.30px;top:522.04px;font-size:10.55px;line-height:13px;color:#000;">X - Creep + Cracking + Shrinkage = 38.27%</div>
<div class="t " style="left:267.30px;top:535.24px;font-size:10.55px;line-height:13px;color:#000;">E<sub>c28</sub> = 4000ksi</div>
<div class="t " style="left:267.30px;top:548.14px;font-size:10.55px;line-height:13px;color:#000;">E<sub>c28+As</sub> = 4529ksi</div>
<div class="t " style="left:267.30px;top:561.74px;font-size:10.55px;line-height:13px;color:#000;">E<sub>ST</sub>(3) = 4529ksi</div>
<div class="t " style="left:267.30px;top:574.64px;font-size:10.55px;line-height:13px;color:#000;">E<sub>LT,C</sub>(3) = 2041ksi</div>
<div class="t " style="left:267.30px;top:587.84px;font-size:10.55px;line-height:13px;color:#000;">E<sub>LT,C&amp;S</sub>(3) = 1531ksi</div>
</body></html>
